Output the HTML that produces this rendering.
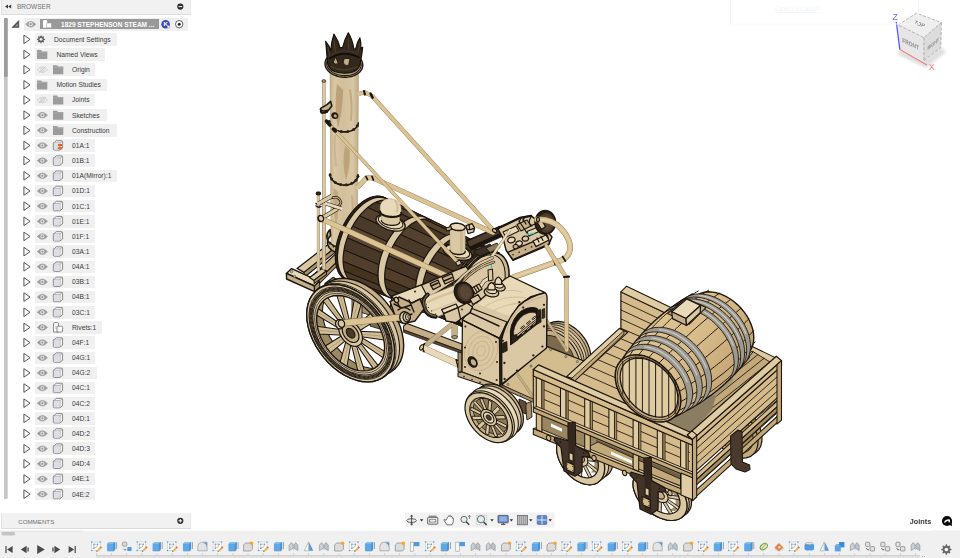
<!DOCTYPE html>
<html lang="en"><head><meta charset="utf-8"><title>1829 Stephenson Steam Locomotive</title>
<style>
html,body{margin:0;padding:0;background:#fff;}
body{width:960px;height:558px;overflow:hidden;position:relative;font-family:"Liberation Sans",sans-serif;font-size:6.6px;color:#3c3c3c;}
.abs{position:absolute;}
.hdr{position:absolute;left:1px;width:190px;background:#f1f1f1;border-left:1px solid #e0e0e0;border-right:1px solid #e8e8e8;border-bottom:1px solid #dcdcdc;box-sizing:border-box;}
.hdr span{position:absolute;left:16px;color:#707070;font-size:6.5px;letter-spacing:0px;white-space:nowrap;}
.row{position:absolute;height:12.5px;background:#f0f0f0;}
.lbl{position:absolute;white-space:nowrap;line-height:12.5px;height:12.5px;font-size:6.7px;color:#3a3a3a;}
svg{position:absolute;left:0;top:0;}
</style></head>
<body>
<svg width="960" height="558" viewBox="0 0 960 558" style="z-index:0;filter:blur(0.35px)">
<defs><radialGradient id="vcsh" cx="50%" cy="50%" r="50%"><stop offset="0" stop-color="#000" stop-opacity="0.16"/><stop offset="1" stop-color="#000" stop-opacity="0"/></radialGradient><filter id="b1"><feGaussianBlur stdDeviation="1.6"/></filter></defs>
<path d="M899.8,49.5 L923.9,60.8 L940.8,47.6 L946,52 L926,68 L897,54Z" fill="#000" opacity="0.13" filter="url(#b1)"/>
<path d="M898.2,25 L916.4,13.1 L941.4,22.5 L923.9,37.6Z" fill="#eeeeee"/>
<path d="M898.2,25 L923.9,37.6 L923.9,60.8 L899.8,49.5Z" fill="#e6e6e6"/>
<path d="M923.9,37.6 L941.4,22.5 L940.8,47.6 L923.9,60.8Z" fill="#dcdcdc"/>
<path d="M898.2,25 L916.4,13.1 L941.4,22.5 L923.9,37.6Z M923.9,37.6 V60.8 M941.4,22.5 L940.8,47.6 L923.9,60.8" fill="none" stroke="#8a8a8a" stroke-width="0.6" stroke-dasharray="3.2 1.6"/>
<path d="M896.3,21.9 L899.8,49.5" stroke="#5a5aee" stroke-width="1.3"/>
<path d="M899.8,49.5 L927,65" stroke="#ec8080" stroke-width="1.1"/>
<text x="892.4" y="20.4" font-size="8.6" fill="#6a6af0" font-family="Liberation Sans, sans-serif">Z</text>
<text x="928.8" y="70.4" font-size="8.6" fill="#f07878" font-family="Liberation Sans, sans-serif">X</text>
<text transform="matrix(0.93,0.37,-0.55,0.84,913.4,23.6)" font-size="5.4" fill="#8c8c8c" font-family="Liberation Sans, sans-serif" font-weight="bold">TOP</text>
<text transform="matrix(0.9,0.43,0,1,902.2,42.2)" font-size="6.3" fill="#8c8c8c" font-family="Liberation Sans, sans-serif" font-weight="bold" textLength="18.5" lengthAdjust="spacingAndGlyphs">FRONT</text>
<text transform="matrix(0.72,-0.6,0,1,927.6,50.6)" font-size="5.4" fill="#8c8c8c" font-family="Liberation Sans, sans-serif" font-weight="bold" textLength="16" lengthAdjust="spacingAndGlyphs">RIGHT</text>
<rect x="730.5" y="-1" width="188" height="25" fill="none" stroke="#f6f6ee" stroke-width="1"/>
<text x="775" y="11" font-size="7.4" fill="#f0f4fb" font-family="Liberation Sans, sans-serif" text-decoration="underline">Open location</text>
<defs>
<linearGradient id="gch" x1="0" x2="1" y1="0" y2="0"><stop offset="0" stop-color="#c4b08a"/><stop offset="0.15" stop-color="#d9c8a6"/><stop offset="0.45" stop-color="#d2bf9b"/><stop offset="0.8" stop-color="#d8c7a5"/><stop offset="1" stop-color="#bfab84"/></linearGradient>
<linearGradient id="gboil" x1="0" x2="0.35" y1="0" y2="1"><stop offset="0" stop-color="#3c2e21"/><stop offset="0.3" stop-color="#54422f"/><stop offset="0.65" stop-color="#4a3928"/><stop offset="1" stop-color="#2e231a"/></linearGradient>
<linearGradient id="gbar" x1="0" x2="1" y1="0" y2="0.6"><stop offset="0" stop-color="#e2c998"/><stop offset="0.55" stop-color="#d9be8b"/><stop offset="1" stop-color="#bfa170"/></linearGradient>
<linearGradient id="gsteel" x1="0" x2="1" y1="0" y2="1"><stop offset="0" stop-color="#8e8c86"/><stop offset="0.45" stop-color="#dcdbd6"/><stop offset="1" stop-color="#7c7a74"/></linearGradient>
<filter id="soft" x="-5%" y="-5%" width="110%" height="110%"><feGaussianBlur stdDeviation="0.35"/></filter>
</defs>
<polygon points="590.7,356.4 590.5,359.3 589.9,362.0 588.9,364.4 587.5,366.5 585.8,368.3 583.8,369.7 581.4,370.7 578.9,371.2 576.1,371.4 573.1,371.1 570.1,370.4 567.0,369.3 563.9,367.8 560.9,365.9 557.9,363.7 555.1,361.2 552.6,358.5 550.2,355.5 548.2,352.4 546.5,349.2 545.1,345.9 544.1,342.7 543.5,339.5 543.3,336.4 543.5,333.5 544.1,330.8 545.1,328.4 546.5,326.3 548.2,324.5 550.2,323.1 552.6,322.1 555.1,321.6 557.9,321.4 560.9,321.7 563.9,322.4 567.0,323.5 570.1,325.0 573.1,326.9 576.1,329.1 578.9,331.6 581.4,334.3 583.8,337.3 585.8,340.4 587.5,343.6 588.9,346.9 589.9,350.1 590.5,353.3" fill="#c4af89" stroke="#1d160f" stroke-width="1.2249999999999999" stroke-linejoin="round" />
<polygon points="588.5,358.1 588.3,361.0 587.7,363.7 586.7,366.1 585.3,368.2 583.6,370.0 581.6,371.4 579.2,372.4 576.6,373.0 573.9,373.1 570.9,372.8 567.9,372.1 564.8,371.0 561.7,369.5 558.7,367.7 555.7,365.5 552.9,363.0 550.4,360.2 548.0,357.2 546.0,354.1 544.3,350.9 542.9,347.6 541.9,344.4 541.3,341.2 541.1,338.1 541.3,335.2 541.9,332.5 542.9,330.1 544.3,328.0 546.0,326.2 548.0,324.9 550.4,323.9 552.9,323.3 555.7,323.1 558.7,323.4 561.7,324.1 564.8,325.2 567.9,326.7 570.9,328.6 573.9,330.8 576.6,333.3 579.2,336.0 581.6,339.0 583.6,342.1 585.3,345.3 586.7,348.6 587.7,351.9 588.3,355.0" fill="#c4af89" stroke="#1d160f" stroke-width="0.875" stroke-linejoin="round" />
<polygon points="586.3,359.8 586.1,362.7 585.5,365.4 584.5,367.8 583.1,370.0 581.4,371.7 579.4,373.1 577.0,374.1 574.5,374.7 571.7,374.8 568.7,374.5 565.7,373.8 562.6,372.7 559.5,371.2 556.5,369.4 553.5,367.2 550.8,364.7 548.2,361.9 545.8,359.0 543.8,355.8 542.1,352.6 540.7,349.4 539.7,346.1 539.1,342.9 538.9,339.8 539.1,336.9 539.7,334.3 540.7,331.8 542.1,329.7 543.8,328.0 545.8,326.6 548.2,325.6 550.8,325.0 553.5,324.9 556.5,325.1 559.5,325.8 562.6,326.9 565.7,328.4 568.7,330.3 571.7,332.5 574.5,335.0 577.0,337.8 579.4,340.7 581.4,343.8 583.1,347.1 584.5,350.3 585.5,353.6 586.1,356.8" fill="#dac8a4" stroke="#1d160f" stroke-width="0.875" stroke-linejoin="round" />
<polygon points="584.1,361.6 583.9,364.5 583.3,367.1 582.3,369.6 580.9,371.7 579.2,373.4 577.2,374.8 574.8,375.8 572.2,376.4 569.5,376.5 566.5,376.3 563.5,375.6 560.4,374.5 557.3,373.0 554.3,371.1 551.3,368.9 548.5,366.4 546.0,363.6 543.6,360.7 541.6,357.6 539.9,354.3 538.5,351.1 537.5,347.8 536.9,344.6 536.7,341.6 536.9,338.7 537.5,336.0 538.5,333.6 539.9,331.4 541.6,329.7 543.6,328.3 546.0,327.3 548.5,326.7 551.3,326.6 554.3,326.9 557.3,327.6 560.4,328.7 563.5,330.2 566.5,332.0 569.5,334.2 572.2,336.7 574.8,339.5 577.2,342.4 579.2,345.6 580.9,348.8 582.3,352.0 583.3,355.3 583.9,358.5" fill="#c4af89" stroke="#1d160f" stroke-width="0.875" stroke-linejoin="round" />
<polygon points="581.9,363.3 581.7,366.2 581.1,368.9 580.1,371.3 578.7,373.4 577.0,375.2 575.0,376.5 572.6,377.5 570.1,378.1 567.3,378.3 564.3,378.0 561.3,377.3 558.2,376.2 555.1,374.7 552.1,372.8 549.1,370.6 546.4,368.1 543.8,365.4 541.4,362.4 539.4,359.3 537.7,356.1 536.3,352.8 535.3,349.5 534.7,346.4 534.5,343.3 534.7,340.4 535.3,337.7 536.3,335.3 537.7,333.2 539.4,331.4 541.4,330.0 543.8,329.0 546.4,328.4 549.1,328.3 552.1,328.6 555.1,329.3 558.2,330.4 561.3,331.9 564.3,333.7 567.3,335.9 570.1,338.4 572.6,341.2 575.0,344.2 577.0,347.3 578.7,350.5 580.1,353.8 581.1,357.0 581.7,360.2" fill="#dac8a4" stroke="#1d160f" stroke-width="0.875" stroke-linejoin="round" />
<polygon points="579.7,365.0 579.5,367.9 578.9,370.6 577.9,373.0 576.5,375.1 574.8,376.9 572.8,378.3 570.4,379.3 567.9,379.8 565.1,380.0 562.1,379.7 559.1,379.0 556.0,377.9 552.9,376.4 549.9,374.5 546.9,372.3 544.1,369.8 541.6,367.1 539.2,364.1 537.2,361.0 535.5,357.8 534.1,354.5 533.1,351.3 532.5,348.1 532.3,345.0 532.5,342.1 533.1,339.4 534.1,337.0 535.5,334.9 537.2,333.1 539.2,331.7 541.6,330.7 544.1,330.2 546.9,330.0 549.9,330.3 552.9,331.0 556.0,332.1 559.1,333.6 562.1,335.5 565.1,337.7 567.9,340.2 570.4,342.9 572.8,345.9 574.8,349.0 576.5,352.2 577.9,355.5 578.9,358.7 579.5,361.9" fill="#c4af89" stroke="#1d160f" stroke-width="1.05" stroke-linejoin="round" />
<polygon points="574.5,362.8 574.3,365.1 573.9,367.2 573.1,369.0 572.0,370.7 570.7,372.1 569.1,373.1 567.3,373.9 565.2,374.4 563.1,374.5 560.8,374.3 558.4,373.7 556.0,372.9 553.6,371.7 551.2,370.2 548.9,368.5 546.8,366.6 544.7,364.4 542.9,362.1 541.3,359.7 540.0,357.2 538.9,354.6 538.1,352.1 537.7,349.6 537.5,347.2 537.7,344.9 538.1,342.8 538.9,341.0 540.0,339.3 541.3,337.9 542.9,336.9 544.7,336.1 546.8,335.6 548.9,335.5 551.2,335.7 553.6,336.3 556.0,337.1 558.4,338.3 560.8,339.8 563.1,341.5 565.2,343.4 567.3,345.6 569.1,347.9 570.7,350.3 572.0,352.8 573.1,355.4 573.9,357.9 574.3,360.4" fill="#7d6a4c" stroke="#1d160f" stroke-width="0.875" stroke-linejoin="round" />
<polygon points="297.0,268.4 332.0,241.6 338.6,245.0 304.0,272.4" fill="#dac8a4" stroke="#1d160f" stroke-width="1.2249999999999999" stroke-linejoin="round" />
<polygon points="304.0,272.4 338.6,245.0 338.6,249.6 304.6,277.0" fill="#a6906a" stroke="#1d160f" stroke-width="1.05" stroke-linejoin="round" />
<polygon points="311.6,276.6 339.0,250.6 345.0,254.0 318.6,280.0" fill="#c4af89" stroke="#1d160f" stroke-width="1.2249999999999999" stroke-linejoin="round" />
<polygon points="318.6,280.0 345.0,254.0 345.0,258.0 319.0,284.0" fill="#a6906a" stroke="#1d160f" stroke-width="1.05" stroke-linejoin="round" />
<polygon points="286.4,273.4 291.6,268.6 319.6,281.4 314.4,286.0" fill="#e8d9b9" stroke="#1d160f" stroke-width="1.4000000000000001" stroke-linejoin="round" />
<polygon points="286.4,273.4 314.4,286.0 314.6,291.6 286.6,279.0" fill="#c4af89" stroke="#1d160f" stroke-width="1.4000000000000001" stroke-linejoin="round" />
<polygon points="314.4,286.0 319.6,281.4 319.8,287.0 314.6,291.6" fill="#a6906a" stroke="#1d160f" stroke-width="1.05" stroke-linejoin="round" />
<circle cx="291.6" cy="271.6" r="1.3" fill="#b9b2a4" stroke="#2a2118" stroke-width="0.45"/>
<circle cx="294.6" cy="276.6" r="1.2" fill="#b9b2a4" stroke="#2a2118" stroke-width="0.45"/>
<polygon points="309.6,277.6 322.0,268.6 326.4,271.0 314.0,280.4" fill="#dac8a4" stroke="#1d160f" stroke-width="1.2249999999999999" stroke-linejoin="round" />
<polygon points="314.0,280.4 326.4,271.0 326.6,274.4 314.2,283.6" fill="#a6906a" stroke="#1d160f" stroke-width="1.05" stroke-linejoin="round" />
<polygon points="325.0,283.6 333.0,277.4 337.0,279.6 329.0,286.0" fill="#dac8a4" stroke="#1d160f" stroke-width="1.2249999999999999" stroke-linejoin="round" />
<polyline points="323.8,81.0 323.8,268.0" fill="none" stroke="#8f7a56" stroke-width="3.5" stroke-linejoin="round"/>
<polyline points="323.8,81.0 323.8,268.0" fill="none" stroke="#dac8a4" stroke-width="2.8" stroke-linecap="round" stroke-linejoin="round" stroke-linecap="butt"/>
<polygon points="325.7,81.0 325.7,81.2 325.6,81.3 325.6,81.5 325.4,81.6 325.3,81.7 325.1,81.8 325.0,82.0 324.8,82.0 324.5,82.1 324.3,82.2 324.0,82.2 323.8,82.2 323.6,82.2 323.3,82.2 323.1,82.1 322.9,82.0 322.6,82.0 322.5,81.8 322.3,81.7 322.2,81.6 322.0,81.5 322.0,81.3 321.9,81.2 321.9,81.0 321.9,80.8 322.0,80.7 322.0,80.5 322.2,80.4 322.3,80.3 322.5,80.2 322.6,80.0 322.9,80.0 323.1,79.9 323.3,79.8 323.6,79.8 323.8,79.8 324.0,79.8 324.3,79.8 324.5,79.9 324.8,80.0 325.0,80.0 325.1,80.2 325.3,80.3 325.4,80.4 325.6,80.5 325.6,80.7 325.7,80.8" fill="#c4af89" stroke="#1d160f" stroke-width="0.875" stroke-linejoin="round" />
<polygon points="330.0,70.0 358.6,70.0 357.4,246.0 331.0,246.0" fill="url(#gch)" stroke="#a8946c" stroke-width="0.5" stroke-linejoin="round" />
<path d="M337,84 Q333.6,108 338,128 Q342.6,112 343,90Z" fill="#a98a5c" stroke="none" stroke-width="0" stroke-linejoin="round" stroke-linecap="round" opacity="0.6"/>
<path d="M345,146 Q341.6,164 346,180 Q351,164 349.6,150Z" fill="#a98a5c" stroke="none" stroke-width="0" stroke-linejoin="round" stroke-linecap="round" opacity="0.55"/>
<path d="M333.6,188 Q332.6,210 336,228 Q339.6,210 338,192Z" fill="#a98a5c" stroke="none" stroke-width="0" stroke-linejoin="round" stroke-linecap="round" opacity="0.5"/>
<path d="M350,90 Q352.6,104 351,120" fill="none" stroke="#a98a5c" stroke-width="2.0" stroke-linejoin="round" stroke-linecap="round" opacity="0.45"/>
<path d="M352,196 Q353.6,212 352,230" fill="none" stroke="#a98a5c" stroke-width="2.0" stroke-linejoin="round" stroke-linecap="round" opacity="0.4"/>
<path d="M335,136 Q334,150 336,166" fill="none" stroke="#b39a70" stroke-width="2.0" stroke-linejoin="round" stroke-linecap="round" opacity="0.4"/>
<polyline points="358.3,123.0 358.2,124.0 357.8,124.9 357.4,125.8 356.9,126.7 356.2,127.5 355.4,128.3 354.5,129.0 353.5,129.7 352.5,130.2 351.3,130.7 350.1,131.1 348.8,131.5 347.5,131.7 346.2,131.9 344.8,131.9 343.4,131.9 342.0,131.8 340.7,131.5 339.4,131.2 338.1,130.8 336.8,130.4 335.6,129.8 334.5,129.2 333.5,128.5 332.6,127.7 331.8,126.9 331.0,126.0 330.4,125.1 329.9,124.2 329.6,123.2 329.3,122.2 329.2,121.3" fill="none" stroke="#1d160f" stroke-width="1.575" stroke-linecap="round" stroke-linejoin="round" />
<circle cx="357.3" cy="125.8" r="1.5" fill="#2a2118"/>
<circle cx="353.6" cy="129.4" r="1.5" fill="#2a2118"/>
<circle cx="347.8" cy="131.5" r="1.5" fill="#2a2118"/>
<circle cx="341.3" cy="131.4" r="1.5" fill="#2a2118"/>
<circle cx="335.2" cy="129.4" r="1.5" fill="#2a2118"/>
<circle cx="330.9" cy="125.7" r="1.5" fill="#2a2118"/>
<circle cx="329.2" cy="121.4" r="1.5" fill="#2a2118"/>
<polyline points="358.0,174.9 357.9,175.9 357.7,177.0 357.4,178.0 356.9,178.9 356.3,179.8 355.6,180.7 354.8,181.5 353.9,182.3 352.9,182.9 351.8,183.5 350.6,184.0 349.4,184.4 348.1,184.8 346.7,185.0 345.4,185.1 344.0,185.1 342.6,185.0 341.3,184.8 339.9,184.5 338.6,184.1 337.4,183.7 336.2,183.1 335.1,182.4 334.1,181.7 333.2,180.9 332.4,180.1 331.7,179.1 331.1,178.2 330.6,177.2 330.3,176.2 330.1,175.1 330.0,174.1" fill="none" stroke="#1d160f" stroke-width="1.75" stroke-linecap="round" stroke-linejoin="round" />
<circle cx="357.9" cy="176.2" r="1.5" fill="#2a2118"/>
<circle cx="355.9" cy="180.3" r="1.5" fill="#2a2118"/>
<circle cx="351.8" cy="183.3" r="1.5" fill="#2a2118"/>
<circle cx="346.4" cy="184.8" r="1.5" fill="#2a2118"/>
<circle cx="340.6" cy="184.5" r="1.5" fill="#2a2118"/>
<circle cx="335.4" cy="182.4" r="1.5" fill="#2a2118"/>
<circle cx="331.6" cy="178.9" r="1.5" fill="#2a2118"/>
<circle cx="330.1" cy="175.0" r="1.5" fill="#2a2118"/>
<polygon points="320.6,108.4 327.0,104.6 330.6,101.4 331.8,106.0 327.4,111.4 321.4,113.0" fill="#c4af89" stroke="#1d160f" stroke-width="1.575" stroke-linejoin="round" />
<path d="M320.4,109.6 q3,2.6 7,0.6 M320.6,111.6 q3,2.6 6.6,0.4" fill="none" stroke="#1d160f" stroke-width="1.575" stroke-linejoin="round" stroke-linecap="round" />
<polygon points="337.5,115.9 337.5,116.2 337.4,116.6 337.3,116.9 337.1,117.2 336.9,117.4 336.7,117.7 336.4,117.8 336.2,118.0 335.8,118.1 335.5,118.2 335.2,118.2 334.8,118.2 334.4,118.1 334.1,118.0 333.8,117.9 333.4,117.7 333.2,117.5 332.9,117.2 332.7,116.9 332.5,116.6 332.3,116.3 332.2,116.0 332.1,115.6 332.1,115.3 332.1,115.0 332.2,114.6 332.3,114.3 332.5,114.0 332.7,113.8 332.9,113.5 333.2,113.4 333.4,113.2 333.8,113.1 334.1,113.0 334.4,113.0 334.8,113.0 335.2,113.1 335.5,113.2 335.8,113.3 336.2,113.5 336.4,113.7 336.7,114.0 336.9,114.3 337.1,114.6 337.3,114.9 337.4,115.2 337.5,115.6" fill="#3a2e22" stroke="#1d160f" stroke-width="1.575" stroke-linejoin="round" />
<polygon points="336.9,116.2 336.9,116.4 336.8,116.6 336.8,116.8 336.7,116.9 336.6,117.1 336.5,117.2 336.3,117.3 336.1,117.4 336.0,117.5 335.8,117.5 335.6,117.5 335.4,117.5 335.2,117.5 335.0,117.4 334.8,117.3 334.6,117.2 334.5,117.1 334.3,116.9 334.2,116.8 334.1,116.6 334.0,116.4 334.0,116.2 333.9,116.0 333.9,115.8 333.9,115.6 334.0,115.4 334.0,115.2 334.1,115.1 334.2,114.9 334.3,114.8 334.5,114.7 334.6,114.6 334.8,114.5 335.0,114.5 335.2,114.5 335.4,114.5 335.6,114.5 335.8,114.6 336.0,114.7 336.1,114.8 336.3,114.9 336.5,115.1 336.6,115.2 336.7,115.4 336.8,115.6 336.8,115.8 336.9,116.0" fill="#c4af89" stroke="none" stroke-width="0" stroke-linejoin="round" />
<polygon points="362.8,65.1 362.6,66.8 362.2,68.4 361.4,69.9 360.3,71.4 358.9,72.7 357.3,73.9 355.4,75.0 353.3,75.8 351.1,76.5 348.8,76.9 346.4,77.2 343.9,77.2 341.4,77.0 339.0,76.6 336.7,76.0 334.4,75.1 332.4,74.1 330.5,73.0 328.9,71.6 327.5,70.2 326.4,68.7 325.6,67.0 325.2,65.4 325.0,63.7 325.2,62.0 325.6,60.4 326.4,58.9 327.5,57.4 328.9,56.1 330.5,54.9 332.4,53.8 334.4,53.0 336.7,52.3 339.0,51.9 341.4,51.6 343.9,51.6 346.4,51.8 348.8,52.2 351.1,52.8 353.3,53.7 355.4,54.7 357.3,55.8 358.9,57.2 360.3,58.6 361.4,60.1 362.2,61.8 362.6,63.4" fill="#cbb894" stroke="#1d160f" stroke-width="1.4000000000000001" stroke-linejoin="round" />
<polygon points="361.1,65.0 361.0,66.5 360.5,67.9 359.8,69.2 358.8,70.5 357.5,71.7 356.1,72.7 354.4,73.7 352.5,74.4 350.5,75.0 348.4,75.4 346.1,75.6 343.9,75.6 341.7,75.4 339.4,75.1 337.3,74.5 335.3,73.8 333.4,72.9 331.7,71.9 330.3,70.7 329.0,69.5 328.0,68.1 327.3,66.7 326.8,65.3 326.7,63.8 326.8,62.3 327.3,60.9 328.0,59.6 329.0,58.3 330.3,57.1 331.7,56.1 333.4,55.1 335.3,54.4 337.3,53.8 339.4,53.4 341.7,53.2 343.9,53.2 346.1,53.4 348.4,53.7 350.5,54.3 352.5,55.0 354.4,55.9 356.1,56.9 357.5,58.1 358.8,59.3 359.8,60.7 360.5,62.1 361.0,63.5" fill="#b9a57f" stroke="#1d160f" stroke-width="1.05" stroke-linejoin="round" />
<path d="M327.4,61.6 Q326.6,52 325.7,41.4 Q329.4,45.4 330.6,51 Q331.6,41 333.9,34 Q338.6,41 340.1,47.8 L342.6,47.4 Q344.6,39 348.3,32.8 Q352.6,40 353.9,48.8 L355.6,49 Q357,42 359.9,37.8 Q361.4,43 360.8,48.2 L362.7,47.2 Q362,55 360.4,62 Q360.6,68.6 353,72 Q344,74.6 335,71.8 Q327.8,68.8 327.4,61.6Z" fill="#33281d" stroke="#120d08" stroke-width="1.1" stroke-linejoin="round" stroke-linecap="round" />
<path d="M329.6,58.6 Q344,49.6 359,57.4" fill="none" stroke="#0f0a06" stroke-width="1.3" stroke-linejoin="round" stroke-linecap="round" />
<path d="M331,55 Q344,47 357.6,54" fill="none" stroke="#4c3c2c" stroke-width="1.2" stroke-linejoin="round" stroke-linecap="round" opacity="0.8"/>
<path d="M333,62.6 L335.6,57 L338.4,63.4 Q335.8,65.4 333,62.6Z" fill="#b8a37e" stroke="#120d08" stroke-width="0.8" stroke-linejoin="round" stroke-linecap="round" />
<path d="M343,62.6 L344.4,58.4 L350,58.6 L348.6,65.4 Q345.4,66.8 343,62.6Z" fill="#c2ad88" stroke="#120d08" stroke-width="0.8" stroke-linejoin="round" stroke-linecap="round" />
<path d="M331,66.6 Q344,73.4 357.6,66.6" fill="none" stroke="#57452f" stroke-width="1.3" stroke-linejoin="round" stroke-linecap="round" opacity="0.7"/>
<path d="M334,41 L335.6,52 M348.2,39 L348.6,49 M359.4,43 L358.2,52 M328,47 L329.6,56" fill="none" stroke="#57452f" stroke-width="1.1" stroke-linejoin="round" stroke-linecap="round" opacity="0.75"/>
<polygon points="342.9,248.0 341.0,247.8 339.3,247.5 337.5,247.1 335.9,246.5 334.3,245.9 332.9,245.2 331.5,244.3 330.3,243.4 329.3,242.4 328.4,241.3 327.8,240.2 327.3,239.0 326.9,237.8 326.8,236.6 326.9,235.4 327.1,234.2 327.6,233.0 328.2,231.9 329.0,230.8 330.0,229.7 330.6,235.7 329.6,236.8 328.8,237.9 328.2,239.0 327.7,240.2 327.5,241.4 327.4,242.6 327.5,243.8 327.9,245.0 328.4,246.2 329.0,247.3 329.9,248.4 330.9,249.4 332.1,250.3 333.5,251.2 334.9,251.9 336.5,252.5 338.1,253.1 339.9,253.5 341.6,253.8 343.5,254.0" fill="#c4af89" stroke="#1d160f" stroke-width="1.575" stroke-linejoin="round" />
<circle cx="338.8" cy="248.7" r="0.9" fill="#2a2118"/>
<circle cx="333.5" cy="246.7" r="0.9" fill="#2a2118"/>
<circle cx="329.6" cy="243.6" r="0.9" fill="#2a2118"/>
<circle cx="327.5" cy="239.8" r="0.9" fill="#2a2118"/>
<circle cx="327.5" cy="235.8" r="0.9" fill="#2a2118"/>
<polyline points="318.4,194.0 318.4,270.6" fill="none" stroke="#8f7a56" stroke-width="3.0999999999999996" stroke-linejoin="round"/>
<polyline points="318.4,194.0 318.4,270.6" fill="none" stroke="#dac8a4" stroke-width="2.4" stroke-linecap="round" stroke-linejoin="round" stroke-linecap="butt"/>
<polyline points="323.8,200.0 323.8,268.6" fill="none" stroke="#8f7a56" stroke-width="3.0999999999999996" stroke-linejoin="round"/>
<polyline points="323.8,200.0 323.8,268.6" fill="none" stroke="#dac8a4" stroke-width="2.4" stroke-linecap="round" stroke-linejoin="round" stroke-linecap="butt"/>
<polygon points="320.6,193.4 320.6,193.6 320.5,193.8 320.4,194.0 320.3,194.2 320.1,194.3 320.0,194.5 319.7,194.6 319.5,194.7 319.2,194.8 319.0,194.8 318.7,194.9 318.4,194.9 318.1,194.9 317.8,194.8 317.6,194.8 317.3,194.7 317.1,194.6 316.8,194.5 316.7,194.3 316.5,194.2 316.4,194.0 316.3,193.8 316.2,193.6 316.2,193.4 316.2,193.2 316.3,193.0 316.4,192.8 316.5,192.7 316.7,192.5 316.8,192.3 317.1,192.2 317.3,192.1 317.6,192.0 317.8,192.0 318.1,191.9 318.4,191.9 318.7,191.9 319.0,192.0 319.2,192.0 319.5,192.1 319.7,192.2 320.0,192.3 320.1,192.5 320.3,192.7 320.4,192.8 320.5,193.0 320.6,193.2" fill="#2d241a" stroke="#1d160f" stroke-width="1.05" stroke-linejoin="round" />
<path d="M316,203.4 q2.4,2.2 5,0.4 M316,206 q2.4,2.2 5,0.4" fill="none" stroke="#1d160f" stroke-width="1.4000000000000001" stroke-linejoin="round" stroke-linecap="round" />
<polyline points="318.6,203.6 332.0,196.0" fill="none" stroke="#1d160f" stroke-width="4.4" stroke-linejoin="round"/>
<polyline points="318.6,203.6 332.0,196.0" fill="none" stroke="#dac8a4" stroke-width="3.4" stroke-linecap="round" stroke-linejoin="round" stroke-linecap="butt"/>
<path d="M333,197.6 Q339.6,196 341,202.6 Q339,208 334,207.6" fill="none" stroke="#1d160f" stroke-width="2.6" stroke-linejoin="round" stroke-linecap="round" />
<path d="M333,197.6 Q339.6,196 341,202.6 Q339,208 334,207.6" fill="none" stroke="#c4af89" stroke-width="1.2" stroke-linejoin="round" stroke-linecap="round" />
<polyline points="321.0,218.6 337.6,208.6" fill="none" stroke="#1d160f" stroke-width="4.2" stroke-linejoin="round"/>
<polyline points="321.0,218.6 337.6,208.6" fill="none" stroke="#dac8a4" stroke-width="3.2" stroke-linecap="round" stroke-linejoin="round" stroke-linecap="butt"/>
<polyline points="326.0,203.6 341.6,208.6" fill="none" stroke="#1d160f" stroke-width="3.8" stroke-linejoin="round"/>
<polyline points="326.0,203.6 341.6,208.6" fill="none" stroke="#e8d9b9" stroke-width="2.8" stroke-linecap="round" stroke-linejoin="round" stroke-linecap="butt"/>
<polygon points="323.2,219.0 323.2,219.4 323.1,219.8 323.0,220.1 322.9,220.4 322.7,220.7 322.4,221.0 322.2,221.2 321.9,221.4 321.6,221.5 321.3,221.6 320.9,221.6 320.6,221.6 320.3,221.5 319.9,221.4 319.6,221.2 319.3,221.0 319.0,220.7 318.8,220.4 318.5,220.1 318.3,219.8 318.2,219.4 318.1,219.0 318.0,218.6 318.0,218.2 318.0,217.8 318.1,217.4 318.2,217.1 318.3,216.8 318.5,216.5 318.8,216.2 319.0,216.0 319.3,215.8 319.6,215.7 319.9,215.6 320.3,215.6 320.6,215.6 320.9,215.7 321.3,215.8 321.6,216.0 321.9,216.2 322.2,216.5 322.4,216.8 322.7,217.1 322.9,217.4 323.0,217.8 323.1,218.2 323.2,218.6" fill="#dac8a4" stroke="#1d160f" stroke-width="1.4000000000000001" stroke-linejoin="round" />
<polygon points="403.6,326.0 407.0,323.4 462.0,344.0 462.0,351.0 403.6,330.0" fill="#c4af89" stroke="#1d160f" stroke-width="1.05" stroke-linejoin="round" />
<polygon points="403.6,330.0 462.0,351.0 462.0,353.6 403.6,332.4" fill="#5a4a36" stroke="#1d160f" stroke-width="0.7000000000000001" stroke-linejoin="round" />
<polyline points="454.6,326.0 454.6,337.0" fill="none" stroke="#8f7a56" stroke-width="6.3" stroke-linejoin="round"/>
<polyline points="454.6,326.0 454.6,337.0" fill="none" stroke="#c4af89" stroke-width="5.6" stroke-linecap="round" stroke-linejoin="round" stroke-linecap="butt"/>
<polygon points="457.5,337.0 457.5,337.2 457.4,337.3 457.3,337.5 457.1,337.6 456.9,337.8 456.7,337.9 456.4,338.0 456.1,338.1 455.7,338.2 455.4,338.3 455.0,338.3 454.6,338.3 454.2,338.3 453.8,338.3 453.5,338.2 453.2,338.1 452.8,338.0 452.5,337.9 452.3,337.8 452.1,337.6 451.9,337.5 451.8,337.3 451.7,337.2 451.7,337.0 451.7,336.8 451.8,336.7 451.9,336.5 452.1,336.4 452.3,336.2 452.5,336.1 452.8,336.0 453.2,335.9 453.5,335.8 453.8,335.7 454.2,335.7 454.6,335.7 455.0,335.7 455.4,335.7 455.7,335.8 456.1,335.9 456.4,336.0 456.7,336.1 456.9,336.2 457.1,336.4 457.3,336.5 457.4,336.7 457.5,336.8" fill="#c4af89" stroke="#1d160f" stroke-width="0.875" stroke-linejoin="round" />
<polyline points="424.0,346.6 451.0,325.0" fill="none" stroke="#8f7a56" stroke-width="4.9" stroke-linejoin="round"/>
<polyline points="424.0,346.6 451.0,325.0" fill="none" stroke="#c4af89" stroke-width="4.2" stroke-linecap="round" stroke-linejoin="round" stroke-linecap="butt"/>
<polyline points="422.0,347.6 461.0,365.4" fill="none" stroke="#8f7a56" stroke-width="6.7" stroke-linejoin="round"/>
<polyline points="422.0,347.6 461.0,365.4" fill="none" stroke="#e8d9b9" stroke-width="6.0" stroke-linecap="round" stroke-linejoin="round" stroke-linecap="butt"/>
<path d="M424.6,343.6 q-3.6,3 -0.6,8" fill="none" stroke="#1d160f" stroke-width="1.575" stroke-linejoin="round" stroke-linecap="round" />
<polygon points="423.2,348.0 423.3,347.7 423.5,347.3 423.5,347.0 423.6,346.6 423.6,346.3 423.6,346.0 423.5,345.7 423.4,345.4 423.3,345.2 423.2,345.0 423.0,344.9 422.8,344.8 422.6,344.7 422.3,344.7 422.1,344.8 421.8,344.8 421.6,345.0 421.3,345.1 421.1,345.3 420.8,345.6 420.6,345.9 420.4,346.1 420.2,346.5 420.0,346.8 419.9,347.1 419.7,347.5 419.7,347.8 419.6,348.2 419.6,348.5 419.6,348.8 419.7,349.1 419.8,349.4 419.9,349.6 420.0,349.8 420.2,349.9 420.4,350.0 420.6,350.1 420.9,350.1 421.1,350.0 421.4,350.0 421.6,349.8 421.9,349.7 422.1,349.5 422.4,349.2 422.6,348.9 422.8,348.7 423.0,348.3" fill="#dac8a4" stroke="#1d160f" stroke-width="1.05" stroke-linejoin="round" />
<path d="M456.6,361 Q463,360 466,364 Q466,369 461,369" fill="none" stroke="#1d160f" stroke-width="1.4000000000000001" stroke-linejoin="round" stroke-linecap="round" />
<polygon points="456.0,359.6 463.0,362.0 467.0,365.6 463.0,369.6 458.0,367.4" fill="#e8d9b9" stroke="#1d160f" stroke-width="1.2249999999999999" stroke-linejoin="round" />
<polygon points="458.0,352.0 462.0,353.0 462.0,371.0 458.0,372.0" fill="#a6906a" stroke="#1d160f" stroke-width="0.875" stroke-linejoin="round" />
<polygon points="509.1,274.8 508.9,270.4 508.2,266.3 507.1,262.7 505.5,259.6 503.5,256.9 501.2,254.9 498.6,253.5 495.7,252.7 492.5,252.6 489.2,253.2 485.7,254.4 482.2,256.2 478.7,258.6 475.2,261.5 471.9,265.0 468.7,268.9 465.8,273.2 463.2,277.8 460.9,282.6 458.9,287.6 457.3,292.6 456.2,297.6 455.5,302.5 455.3,307.2 455.5,311.6 456.2,315.7 457.3,319.3 458.9,322.4 460.9,325.1 463.2,327.1 465.8,328.5 468.7,329.3 471.9,329.4 475.2,328.8 478.7,327.6 482.2,325.8 485.7,323.4 489.2,320.5 492.5,317.0 495.7,313.1 498.6,308.8 501.2,304.2 503.5,299.4 505.5,294.4 507.1,289.4 508.2,284.4 508.9,279.5" fill="#cdb993" stroke="#1d160f" stroke-width="1.575" stroke-linejoin="round" />
<polygon points="505.2,275.4 505.0,271.3 504.4,267.6 503.3,264.2 501.9,261.3 500.1,258.8 497.9,256.9 495.4,255.6 492.7,254.9 489.8,254.8 486.7,255.3 483.5,256.4 480.2,258.1 476.9,260.4 473.7,263.1 470.6,266.3 467.7,270.0 465.0,274.0 462.5,278.2 460.3,282.7 458.5,287.4 457.1,292.0 456.0,296.7 455.4,301.2 455.2,305.6 455.4,309.7 456.0,313.4 457.1,316.8 458.5,319.7 460.3,322.2 462.5,324.1 465.0,325.4 467.7,326.1 470.6,326.2 473.7,325.7 476.9,324.6 480.2,322.9 483.5,320.6 486.7,317.9 489.8,314.7 492.7,311.0 495.4,307.0 497.9,302.8 500.1,298.3 501.9,293.6 503.3,289.0 504.4,284.3 505.0,279.8" fill="#dac8a4" stroke="#1d160f" stroke-width="1.05" stroke-linejoin="round" />
<polygon points="384.5,197.6 381.9,196.7 379.2,196.3 376.3,196.4 373.4,197.0 370.3,198.0 367.2,199.5 364.1,201.4 360.9,203.7 357.9,206.4 354.9,209.4 352.1,212.8 349.3,216.4 346.8,220.4 344.5,224.5 342.4,228.7 340.6,233.1 339.0,237.6 337.8,242.1 336.8,246.5 336.2,250.8 335.8,255.1 335.8,259.1 336.2,262.9 336.8,266.5 337.8,269.8 339.1,272.7 340.7,275.2 342.5,277.4 344.6,279.1 346.9,280.4 465.8,327.8 463.7,326.6 461.8,325.1 460.2,323.1 458.8,320.8 457.6,318.2 456.7,315.2 456.1,312.0 455.8,308.6 455.8,305.0 456.1,301.2 456.7,297.2 457.6,293.2 458.7,289.2 460.1,285.2 461.7,281.3 463.6,277.4 465.7,273.7 468.0,270.2 470.4,266.9 473.0,263.9 475.7,261.1 478.4,258.7 481.2,256.6 484.0,254.9 486.8,253.6 489.6,252.7 492.3,252.2 494.9,252.1 497.3,252.5 499.6,253.2" fill="url(#gboil)" stroke="#1d160f" stroke-width="1.2249999999999999" stroke-linejoin="round" />
<polygon points="384.5,197.6 382.7,196.9 380.9,196.5 379.1,196.3 377.1,196.4 493.0,252.1 494.7,252.1 496.4,252.3 498.0,252.6 499.6,253.2" fill="#4d3c2b" stroke="#17100a" stroke-width="0.9" stroke-linejoin="round" />
<polygon points="377.1,196.4 375.1,196.6 373.1,197.1 371.0,197.7 368.9,198.6 485.6,254.1 487.5,253.4 489.3,252.7 491.2,252.3 493.0,252.1" fill="#58452f" stroke="#17100a" stroke-width="0.9" stroke-linejoin="round" />
<polygon points="368.9,198.6 366.8,199.7 364.6,201.0 362.5,202.5 360.4,204.1 477.9,259.1 479.8,257.6 481.7,256.3 483.6,255.1 485.6,254.1" fill="#463626" stroke="#17100a" stroke-width="0.9" stroke-linejoin="round" />
<polygon points="360.4,204.1 358.3,206.0 356.2,208.0 354.2,210.1 352.3,212.5 470.6,266.6 472.4,264.5 474.2,262.6 476.0,260.8 477.9,259.1" fill="#54412e" stroke="#17100a" stroke-width="0.9" stroke-linejoin="round" />
<polygon points="352.3,212.5 350.4,214.9 348.6,217.5 346.9,220.2 345.3,223.0 464.4,276.1 465.8,273.6 467.3,271.1 469.0,268.8 470.6,266.6" fill="#4a3a29" stroke="#17100a" stroke-width="0.9" stroke-linejoin="round" />
<polygon points="345.3,223.0 343.8,225.8 342.4,228.7 341.1,231.7 340.0,234.7 459.6,286.7 460.6,284.0 461.7,281.3 463.0,278.6 464.4,276.1" fill="#5a4732" stroke="#17100a" stroke-width="0.9" stroke-linejoin="round" />
<polygon points="340.0,234.7 339.0,237.8 338.1,240.8 337.3,243.9 336.7,246.9 456.6,297.6 457.2,294.9 457.8,292.2 458.6,289.4 459.6,286.7" fill="#483827" stroke="#17100a" stroke-width="0.9" stroke-linejoin="round" />
<polygon points="336.7,246.9 336.3,249.9 336.0,252.8 335.8,255.6 335.8,258.4 455.8,307.9 455.8,305.5 455.9,302.9 456.2,300.3 456.6,297.6" fill="#513f2c" stroke="#17100a" stroke-width="0.9" stroke-linejoin="round" />
<polygon points="335.8,258.4 336.0,261.0 336.3,263.6 336.7,266.0 337.3,268.3 457.2,316.9 456.6,314.8 456.2,312.6 455.9,310.3 455.8,307.9" fill="#43331f" stroke="#17100a" stroke-width="0.9" stroke-linejoin="round" />
<polygon points="337.3,268.3 338.1,270.5 339.0,272.4 340.0,274.2 341.1,275.9 460.6,323.7 459.6,322.2 458.6,320.6 457.8,318.8 457.2,316.9" fill="#4c3b2a" stroke="#17100a" stroke-width="0.9" stroke-linejoin="round" />
<polygon points="341.1,275.9 342.4,277.3 343.8,278.6 345.3,279.6 346.9,280.4 465.8,327.8 464.4,327.0 463.0,326.1 461.8,325.0 460.6,323.7" fill="#3c2e20" stroke="#17100a" stroke-width="0.9" stroke-linejoin="round" />
<polygon points="425.0,217.2 422.5,216.3 419.9,216.0 417.1,216.1 414.3,216.6 411.3,217.6 408.3,219.0 405.3,220.8 402.3,223.0 399.3,225.6 396.5,228.6 393.7,231.8 391.1,235.4 388.7,239.1 386.4,243.1 384.4,247.2 382.6,251.5 381.1,255.8 379.9,260.1 379.0,264.4 378.4,268.5 378.1,272.6 378.1,276.5 378.4,280.2 379.0,283.7 380.0,286.8 381.2,289.6 382.7,292.1 384.5,294.2 386.5,295.8 388.8,297.1 395.3,299.7 393.1,298.5 391.1,296.8 389.3,294.7 387.8,292.3 386.6,289.5 385.6,286.3 385.0,282.9 384.7,279.2 384.7,275.4 385.0,271.3 385.6,267.1 386.5,262.9 387.7,258.6 389.2,254.3 391.0,250.1 393.0,246.0 395.2,242.1 397.6,238.3 400.2,234.8 403.0,231.6 405.8,228.6 408.8,226.1 411.7,223.8 414.7,222.0 417.7,220.6 420.7,219.7 423.5,219.1 426.3,219.0 428.9,219.4 431.3,220.2" fill="#dac8a4" stroke="#1d160f" stroke-width="1.2249999999999999" stroke-linejoin="round" />
<polygon points="461.0,234.6 458.6,233.8 456.1,233.4 453.4,233.5 450.7,234.0 447.8,235.0 444.9,236.3 442.0,238.1 439.1,240.3 436.2,242.8 433.4,245.6 430.8,248.8 428.2,252.2 425.9,255.8 423.7,259.7 421.8,263.7 420.1,267.8 418.6,271.9 417.4,276.1 416.5,280.2 415.9,284.3 415.6,288.2 415.6,292.0 415.9,295.6 416.6,298.9 417.5,302.0 418.7,304.7 420.1,307.1 421.9,309.1 423.8,310.7 426.0,311.9 432.5,314.5 430.4,313.3 428.4,311.7 426.7,309.7 425.3,307.3 424.1,304.6 423.2,301.6 422.5,298.3 422.2,294.7 422.2,291.0 422.5,287.1 423.1,283.0 424.0,278.9 425.2,274.8 426.6,270.6 428.3,266.6 430.3,262.6 432.4,258.8 434.8,255.2 437.3,251.8 439.9,248.6 442.7,245.8 445.5,243.3 448.4,241.1 451.3,239.4 454.2,238.0 457.0,237.1 459.8,236.6 462.5,236.5 465.0,236.8 467.3,237.6" fill="#dac8a4" stroke="#1d160f" stroke-width="1.2249999999999999" stroke-linejoin="round" />
<polygon points="493.2,250.2 490.9,249.4 488.5,249.0 485.9,249.1 483.2,249.6 480.4,250.5 477.6,251.9 474.8,253.6 472.0,255.7 469.2,258.1 466.5,260.9 463.9,263.9 461.5,267.2 459.2,270.8 457.1,274.5 455.2,278.4 453.5,282.4 452.1,286.4 451.0,290.4 450.1,294.4 449.5,298.4 449.2,302.2 449.2,305.9 449.5,309.3 450.1,312.6 451.0,315.5 452.2,318.2 453.6,320.5 455.3,322.4 457.2,324.0 459.3,325.2 460.7,325.8 458.6,324.6 456.7,323.0 455.0,321.1 453.6,318.7 452.5,316.1 451.6,313.1 451.0,309.9 450.7,306.5 450.7,302.8 451.0,299.0 451.5,295.1 452.4,291.0 453.5,287.0 455.0,283.0 456.6,279.0 458.5,275.1 460.6,271.4 462.9,267.9 465.3,264.6 467.9,261.5 470.6,258.8 473.4,256.3 476.2,254.2 479.0,252.5 481.8,251.2 484.6,250.3 487.3,249.8 489.9,249.7 492.3,250.1 494.6,250.8" fill="#dac8a4" stroke="#1d160f" stroke-width="1.2249999999999999" stroke-linejoin="round" />
<polygon points="496.7,251.8 494.4,251.1 492.0,250.7 489.4,250.8 486.7,251.3 483.9,252.2 481.1,253.5 478.3,255.2 475.5,257.3 472.7,259.7 470.0,262.5 467.5,265.6 465.0,268.9 462.7,272.4 460.6,276.1 458.8,280.0 457.1,283.9 455.7,287.9 454.6,292.0 453.7,296.0 453.1,299.9 452.8,303.7 452.8,307.4 453.1,310.8 453.7,314.0 454.6,317.0 455.8,319.6 457.2,321.9 458.9,323.9 460.7,325.4 462.9,326.6 464.5,327.3 462.4,326.1 460.5,324.5 458.9,322.6 457.4,320.3 456.3,317.6 455.4,314.7 454.8,311.5 454.5,308.1 454.5,304.4 454.8,300.6 455.4,296.7 456.2,292.7 457.4,288.7 458.8,284.6 460.4,280.7 462.3,276.8 464.4,273.1 466.7,269.6 469.1,266.3 471.7,263.3 474.4,260.5 477.1,258.1 479.9,256.0 482.7,254.3 485.6,253.0 488.3,252.1 491.0,251.6 493.6,251.5 496.0,251.8 498.3,252.6" fill="#dac8a4" stroke="#1d160f" stroke-width="1.2249999999999999" stroke-linejoin="round" />
<polygon points="385.0,197.9 382.5,196.8 379.8,196.2 376.9,196.0 373.9,196.4 370.7,197.3 367.5,198.7 364.3,200.5 361.1,202.8 357.9,205.5 354.8,208.6 351.8,212.0 349.0,215.8 346.4,219.8 344.0,224.0 341.8,228.4 339.9,233.0 338.3,237.6 337.0,242.2 336.1,246.8 335.5,251.3 335.2,255.6 335.3,259.7 335.7,263.6 336.5,267.2 337.6,270.5 339.0,273.4 340.8,275.8 342.8,277.9 345.1,279.5 347.6,280.6 350.6,282.0 348.1,280.9 345.8,279.3 343.8,277.2 342.0,274.8 340.6,271.9 339.5,268.6 338.7,265.0 338.3,261.1 338.2,257.0 338.5,252.7 339.1,248.2 340.0,243.6 341.3,239.0 342.9,234.4 344.8,229.8 347.0,225.4 349.4,221.2 352.0,217.2 354.8,213.4 357.8,210.0 360.9,206.9 364.1,204.2 367.3,201.9 370.5,200.1 373.7,198.7 376.9,197.8 379.9,197.4 382.8,197.6 385.5,198.2 388.0,199.3" fill="#2a2017" stroke="#1d160f" stroke-width="1.05" stroke-linejoin="round" />
<polygon points="385.7,198.6 383.2,197.7 380.5,197.4 377.6,197.5 374.7,198.0 371.6,199.0 368.6,200.5 365.5,202.3 362.4,204.6 359.4,207.3 356.4,210.3 353.6,213.6 350.9,217.3 348.4,221.1 346.1,225.2 344.0,229.5 342.2,233.8 340.7,238.2 339.4,242.6 338.5,247.0 337.9,251.3 337.5,255.5 337.5,259.5 337.9,263.3 338.5,266.8 339.5,270.0 340.8,272.9 342.3,275.5 344.1,277.6 346.2,279.3 348.5,280.6 354.1,283.2 351.8,281.9 349.7,280.2 347.9,278.1 346.4,275.5 345.1,272.6 344.1,269.4 343.5,265.9 343.1,262.1 343.1,258.1 343.5,253.9 344.1,249.6 345.0,245.2 346.3,240.8 347.8,236.4 349.6,232.1 351.7,227.8 354.0,223.7 356.5,219.9 359.2,216.2 362.0,212.9 365.0,209.9 368.0,207.2 371.1,204.9 374.2,203.1 377.2,201.6 380.3,200.6 383.2,200.1 386.1,200.0 388.8,200.3 391.3,201.2" fill="#dac8a4" stroke="#1d160f" stroke-width="1.2249999999999999" stroke-linejoin="round" />
<polygon points="466.4,241.0 500.0,226.4 503.4,232.4 469.6,247.4" fill="#4e3e2e" stroke="#1d160f" stroke-width="1.4000000000000001" stroke-linejoin="round" />
<polygon points="469.6,247.4 503.4,232.4 504.6,235.6 471.0,250.4" fill="#1c150e" stroke="#1d160f" stroke-width="0.7000000000000001" stroke-linejoin="round" />
<polygon points="473.0,251.6 490.0,244.0 494.0,250.0 480.0,256.0" fill="#3a3027" stroke="#1d160f" stroke-width="0.875" stroke-linejoin="round" />
<polygon points="486.0,248.0 497.0,243.0 500.0,247.6 490.0,252.6" fill="#8a7a5c" stroke="#1d160f" stroke-width="0.875" stroke-linejoin="round" />
<polygon points="497.6,228.4 520.2,217.6 531.0,215.6 541.0,224.0 552.0,237.0 548.6,245.0 513.0,260.4 506.0,250.0 503.0,238.0" fill="#dac8a4" stroke="#1d160f" stroke-width="1.4000000000000001" stroke-linejoin="round" />
<polyline points="497.6,228.4 520.2,217.8 531.0,215.8" fill="none" stroke="#1d160f" stroke-width="2.275" stroke-linecap="round" stroke-linejoin="round" />
<polygon points="507.6,252.4 547.6,235.6 549.6,243.6 513.0,259.6" fill="#c4af89" stroke="#1d160f" stroke-width="1.2249999999999999" stroke-linejoin="round" />
<circle cx="513.0" cy="254.8" r="0.8" fill="#2a2118"/>
<circle cx="519.2" cy="252.2" r="0.8" fill="#2a2118"/>
<circle cx="525.4" cy="249.6" r="0.8" fill="#2a2118"/>
<circle cx="531.6" cy="246.9" r="0.8" fill="#2a2118"/>
<circle cx="537.8" cy="244.3" r="0.8" fill="#2a2118"/>
<circle cx="544.0" cy="241.7" r="0.8" fill="#2a2118"/>
<polygon points="503.0,232.0 516.0,226.0 519.0,231.0 506.0,237.4" fill="#e8d9b9" stroke="#1d160f" stroke-width="1.05" stroke-linejoin="round" />
<polygon points="517.0,224.6 527.0,220.0 531.0,226.0 521.0,231.0" fill="#c4af89" stroke="#1d160f" stroke-width="1.05" stroke-linejoin="round" />
<path d="M519,221 l8,12 M523,219.4 l3,4.6 M530,226 l10,-4 M533,231 l10,-4.6 M531,217 q-4,6 1,9 M538,219 q-3,5 1,8 M521,218 l-2,4 M525,216.6 l-2,4" fill="none" stroke="#1d160f" stroke-width="1.2249999999999999" stroke-linejoin="round" stroke-linecap="round" />
<polygon points="515.0,238.8 515.1,239.1 515.1,239.5 515.1,239.9 515.0,240.3 514.9,240.6 514.7,241.0 514.4,241.3 514.1,241.7 513.7,241.9 513.3,242.2 512.9,242.4 512.4,242.6 511.9,242.7 511.4,242.8 510.9,242.9 510.5,242.9 510.0,242.8 509.6,242.7 509.2,242.5 508.8,242.3 508.5,242.1 508.2,241.8 508.0,241.5 507.8,241.2 507.7,240.9 507.7,240.5 507.7,240.1 507.8,239.7 507.9,239.4 508.1,239.0 508.4,238.7 508.7,238.3 509.1,238.1 509.5,237.8 509.9,237.6 510.4,237.4 510.9,237.3 511.4,237.2 511.9,237.1 512.3,237.1 512.8,237.2 513.2,237.3 513.6,237.5 514.0,237.7 514.3,237.9 514.6,238.2 514.8,238.5" fill="#e8d9b9" stroke="#1d160f" stroke-width="1.2249999999999999" stroke-linejoin="round" />
<polygon points="522.2,242.4 522.3,242.7 522.3,243.1 522.3,243.4 522.3,243.8 522.1,244.1 522.0,244.4 521.7,244.8 521.5,245.1 521.1,245.4 520.8,245.6 520.4,245.8 520.0,246.0 519.6,246.1 519.1,246.2 518.7,246.3 518.3,246.3 517.8,246.2 517.4,246.1 517.1,246.0 516.7,245.8 516.4,245.6 516.2,245.4 516.0,245.1 515.8,244.8 515.7,244.5 515.7,244.1 515.7,243.8 515.7,243.4 515.9,243.1 516.0,242.8 516.3,242.4 516.5,242.1 516.9,241.8 517.2,241.6 517.6,241.4 518.0,241.2 518.4,241.1 518.9,241.0 519.3,240.9 519.7,240.9 520.2,241.0 520.6,241.1 520.9,241.2 521.3,241.4 521.6,241.6 521.8,241.8 522.0,242.1" fill="#e8d9b9" stroke="#1d160f" stroke-width="1.2249999999999999" stroke-linejoin="round" />
<polygon points="528.4,237.6 528.5,237.9 528.6,238.3 528.6,238.6 528.5,238.9 528.4,239.3 528.2,239.6 528.0,239.9 527.8,240.2 527.5,240.4 527.1,240.7 526.8,240.8 526.4,241.0 526.0,241.1 525.6,241.2 525.2,241.2 524.8,241.2 524.4,241.1 524.0,241.0 523.6,240.9 523.3,240.7 523.0,240.4 522.8,240.2 522.6,239.9 522.4,239.6 522.3,239.3 522.2,238.9 522.2,238.6 522.3,238.3 522.4,237.9 522.6,237.6 522.8,237.3 523.0,237.0 523.3,236.8 523.7,236.5 524.0,236.4 524.4,236.2 524.8,236.1 525.2,236.0 525.6,236.0 526.0,236.0 526.4,236.1 526.8,236.2 527.2,236.3 527.5,236.5 527.8,236.8 528.0,237.0 528.2,237.3" fill="#dac8a4" stroke="#1d160f" stroke-width="1.2249999999999999" stroke-linejoin="round" />
<polygon points="518.0,245.8 518.1,246.1 518.1,246.3 518.1,246.6 518.1,246.9 518.0,247.2 517.9,247.4 517.7,247.7 517.5,247.9 517.3,248.1 517.0,248.3 516.7,248.5 516.4,248.6 516.1,248.7 515.8,248.7 515.4,248.8 515.1,248.7 514.8,248.7 514.5,248.6 514.2,248.5 513.9,248.3 513.7,248.1 513.5,247.9 513.3,247.7 513.2,247.4 513.1,247.1 513.1,246.9 513.1,246.6 513.1,246.3 513.2,246.0 513.3,245.8 513.5,245.5 513.7,245.3 513.9,245.1 514.2,244.9 514.5,244.7 514.8,244.6 515.1,244.5 515.4,244.5 515.8,244.4 516.1,244.5 516.4,244.5 516.7,244.6 517.0,244.7 517.3,244.9 517.5,245.1 517.7,245.3 517.9,245.5" fill="#c4af89" stroke="#1d160f" stroke-width="1.05" stroke-linejoin="round" />
<polygon points="527.0,231.6 537.0,227.6 539.0,231.6 529.0,236.0" fill="#e8d9b9" stroke="#1d160f" stroke-width="1.05" stroke-linejoin="round" />
<path d="M527,234.6 l7,-1.6" fill="none" stroke="#5ad0c8" stroke-width="1.3" stroke-linejoin="round" stroke-linecap="round" />
<polygon points="533.0,241.0 546.0,235.0 549.0,240.0 536.0,246.6" fill="#e8d9b9" stroke="#1d160f" stroke-width="1.2249999999999999" stroke-linejoin="round" />
<path d="M535,222 l4,6 M543,230 l3,5 M537,238 l2,4 M541,236.4 l2,4" fill="none" stroke="#1d160f" stroke-width="1.2249999999999999" stroke-linejoin="round" stroke-linecap="round" />
<polygon points="555.5,222.4 555.4,223.9 555.2,225.5 554.7,226.9 554.1,228.3 553.4,229.6 552.5,230.7 551.5,231.8 550.4,232.6 549.2,233.3 547.9,233.8 546.6,234.1 545.3,234.2 544.0,234.1 542.7,233.8 541.4,233.3 540.2,232.6 539.1,231.8 538.1,230.7 537.2,229.6 536.5,228.3 535.9,226.9 535.4,225.5 535.2,223.9 535.1,222.4 535.2,220.9 535.4,219.3 535.9,217.9 536.5,216.5 537.2,215.2 538.1,214.1 539.1,213.0 540.2,212.2 541.4,211.5 542.7,211.0 544.0,210.7 545.3,210.6 546.6,210.7 547.9,211.0 549.2,211.5 550.4,212.2 551.5,213.0 552.5,214.1 553.4,215.2 554.1,216.5 554.7,217.9 555.2,219.3 555.4,220.9" fill="#2c2118" stroke="#1d160f" stroke-width="1.575" stroke-linejoin="round" />
<polygon points="554.7,222.9 554.6,224.2 554.4,225.5 554.1,226.7 553.6,227.9 553.0,229.0 552.2,230.0 551.4,230.8 550.5,231.6 549.5,232.1 548.5,232.6 547.4,232.8 546.3,232.9 545.2,232.8 544.1,232.6 543.1,232.1 542.1,231.6 541.2,230.8 540.4,230.0 539.6,229.0 539.0,227.9 538.5,226.7 538.2,225.5 538.0,224.2 537.9,222.9 538.0,221.6 538.2,220.3 538.5,219.1 539.0,217.9 539.6,216.8 540.4,215.8 541.2,215.0 542.1,214.2 543.1,213.7 544.1,213.2 545.2,213.0 546.3,212.9 547.4,213.0 548.5,213.2 549.5,213.7 550.5,214.2 551.4,215.0 552.2,215.8 553.0,216.8 553.6,217.9 554.1,219.1 554.4,220.3 554.6,221.6" fill="#4e3c2b" stroke="#1f1710" stroke-width="0.5" stroke-linejoin="round" />
<polygon points="552.4,223.2 552.4,224.1 552.2,225.0 552.0,225.9 551.6,226.7 551.2,227.5 550.8,228.1 550.2,228.8 549.6,229.3 548.9,229.7 548.2,230.0 547.5,230.1 546.8,230.2 546.1,230.1 545.4,230.0 544.7,229.7 544.0,229.3 543.4,228.8 542.8,228.1 542.4,227.5 542.0,226.7 541.6,225.9 541.4,225.0 541.2,224.1 541.2,223.2 541.2,222.3 541.4,221.4 541.6,220.5 542.0,219.7 542.4,218.9 542.8,218.3 543.4,217.6 544.0,217.1 544.7,216.7 545.4,216.4 546.1,216.3 546.8,216.2 547.5,216.3 548.2,216.4 548.9,216.7 549.6,217.1 550.2,217.6 550.8,218.3 551.2,218.9 551.6,219.7 552.0,220.5 552.2,221.4 552.4,222.3" fill="#5b4836" stroke="none" stroke-width="0" stroke-linejoin="round" />
<polygon points="537.0,222.0 541.0,219.0 545.6,226.6 541.6,229.6" fill="#dac8a4" stroke="#1d160f" stroke-width="1.2249999999999999" stroke-linejoin="round" />
<path d="M537,219.4 Q552,219 560.6,228 Q571.6,240 570,250 Q568,259.6 556,262 L512.6,277.4" fill="none" stroke="#8f7a56" stroke-width="5.8" stroke-linejoin="round" stroke-linecap="round" />
<path d="M537,219.4 Q552,219 560.6,228 Q571.6,240 570,250 Q568,259.6 556,262 L512.6,277.4" fill="none" stroke="#dcc394" stroke-width="5.0" stroke-linejoin="round" stroke-linecap="round" />
<path d="M537,219.4 Q552,219 560.6,228 Q571.6,240 570,250 Q568,259.6 556,262 L512.6,277.4" fill="none" stroke="#e8d9b9" stroke-width="1.8" stroke-linejoin="round" stroke-linecap="round" opacity="0.6"/>
<polyline points="553.6,259.4 555.4,264.6" fill="none" stroke="#1d160f" stroke-width="1.75" stroke-linecap="round" stroke-linejoin="round" />
<polyline points="562.6,256.6 565.4,261.0" fill="none" stroke="#1d160f" stroke-width="1.75" stroke-linecap="round" stroke-linejoin="round" />
<polygon points="539.4,219.6 539.4,219.9 539.4,220.2 539.3,220.5 539.2,220.8 539.1,221.1 539.0,221.3 538.9,221.5 538.7,221.7 538.5,221.8 538.4,221.9 538.2,222.0 538.0,222.0 537.8,222.0 537.6,221.9 537.5,221.8 537.3,221.7 537.1,221.5 537.0,221.3 536.9,221.1 536.8,220.8 536.7,220.5 536.6,220.2 536.6,219.9 536.6,219.6 536.6,219.3 536.6,219.0 536.7,218.7 536.8,218.4 536.9,218.1 537.0,217.9 537.1,217.7 537.3,217.5 537.5,217.4 537.6,217.3 537.8,217.2 538.0,217.2 538.2,217.2 538.4,217.3 538.5,217.4 538.7,217.5 538.9,217.7 539.0,217.9 539.1,218.1 539.2,218.4 539.3,218.7 539.4,219.0 539.4,219.3" fill="#dac8a4" stroke="#1d160f" stroke-width="1.2249999999999999" stroke-linejoin="round" />
<polyline points="546.4,246.0 562.0,271.0 566.4,277.6 566.6,350.0" fill="none" stroke="#8f7a56" stroke-width="4.3" stroke-linejoin="round"/>
<polyline points="546.4,246.0 562.0,271.0 566.4,277.6 566.6,350.0" fill="none" stroke="#dcc394" stroke-width="3.6" stroke-linecap="round" stroke-linejoin="round" stroke-linecap="butt"/>
<polyline points="564.0,277.0 569.0,276.6" fill="none" stroke="#1d160f" stroke-width="2.1" stroke-linecap="round" stroke-linejoin="round" />
<polyline points="510.0,230.0 489.6,260.0" fill="none" stroke="#8f7a56" stroke-width="2.9000000000000004" stroke-linejoin="round"/>
<polyline points="510.0,230.0 489.6,260.0" fill="none" stroke="#e8d9b9" stroke-width="2.2" stroke-linecap="round" stroke-linejoin="round" stroke-linecap="butt"/>
<polygon points="501.8,385.0 546.6,346.4 584.0,361.0 573.0,381.0 536.4,402.0" fill="#d3bc8e" stroke="#1d160f" stroke-width="1.2249999999999999" stroke-linejoin="round" />
<polygon points="501.8,385.0 536.4,400.4 536.4,403.6 501.8,388.4" fill="#a6906a" stroke="#1d160f" stroke-width="0.875" stroke-linejoin="round" />
<circle cx="508.0" cy="384.4" r="1.1" fill="#b9b2a4" stroke="#2a2118" stroke-width="0.45"/>
<circle cx="521.6" cy="395.0" r="1.1" fill="#b9b2a4" stroke="#2a2118" stroke-width="0.45"/>
<circle cx="531.0" cy="366.0" r="1.1" fill="#b9b2a4" stroke="#2a2118" stroke-width="0.45"/>
<circle cx="550.6" cy="349.6" r="1.1" fill="#b9b2a4" stroke="#2a2118" stroke-width="0.45"/>
<circle cx="565.8" cy="356.6" r="1.1" fill="#b9b2a4" stroke="#2a2118" stroke-width="0.45"/>
<circle cx="577.4" cy="361.6" r="1.1" fill="#b9b2a4" stroke="#2a2118" stroke-width="0.45"/>
<polyline points="545.0,318.0 566.0,349.0" fill="none" stroke="#8f7a56" stroke-width="2.9000000000000004" stroke-linejoin="round"/>
<polyline points="545.0,318.0 566.0,349.0" fill="none" stroke="#c4af89" stroke-width="2.2" stroke-linecap="round" stroke-linejoin="round" stroke-linecap="butt"/>
<polyline points="505.0,356.0 533.0,397.0" fill="none" stroke="#8f7a56" stroke-width="2.7" stroke-linejoin="round"/>
<polyline points="505.0,356.0 533.0,397.0" fill="none" stroke="#c4af89" stroke-width="2.0" stroke-linecap="round" stroke-linejoin="round" stroke-linecap="butt"/>
<polygon points="470.6,308.0 505.0,279.0 510.0,276.0 545.0,292.6 531.0,296.6 519.0,305.0 507.0,322.0" fill="#e8d9b9" stroke="#1d160f" stroke-width="1.2249999999999999" stroke-linejoin="round" />
<path d="M476,305 Q496,286 522,292 M482,309 Q500,294 526,298 M490,313 Q505,302 530,303" fill="none" stroke="#cdb68c" stroke-width="1.1" opacity="0.7"/>
<polygon points="470.6,308.0 476.0,303.6 512.0,317.0 507.0,322.0" fill="#dac8a4" stroke="none" stroke-width="0" stroke-linejoin="round" />
<polygon points="462.4,320.0 470.6,308.0 507.0,322.0 499.4,338.4" fill="#dac8a4" stroke="#1d160f" stroke-width="1.2249999999999999" stroke-linejoin="round" />
<polygon points="462.4,320.0 499.4,338.4 500.0,386.0 462.0,372.0" fill="#dac8a4" stroke="#1d160f" stroke-width="1.2249999999999999" stroke-linejoin="round" />
<ellipse cx="481" cy="351" rx="4" ry="5" fill="none" stroke="#c4ab7f" stroke-width="1.1" opacity="0.65" transform="rotate(20 481 351)"/>
<ellipse cx="481" cy="351" rx="8" ry="10" fill="none" stroke="#c4ab7f" stroke-width="1.1" opacity="0.65" transform="rotate(20 481 351)"/>
<ellipse cx="481" cy="351" rx="12" ry="15" fill="none" stroke="#c4ab7f" stroke-width="1.1" opacity="0.65" transform="rotate(20 481 351)"/>
<ellipse cx="481" cy="351" rx="16" ry="20" fill="none" stroke="#c4ab7f" stroke-width="1.1" opacity="0.65" transform="rotate(20 481 351)"/>
<polyline points="462.4,320.0 499.4,338.4" fill="none" stroke="#1d160f" stroke-width="1.2249999999999999" stroke-linecap="round" stroke-linejoin="round" />
<circle cx="465.4" cy="326.6" r="1.0" fill="#2a2118"/>
<circle cx="496.0" cy="342.0" r="1.0" fill="#2a2118"/>
<circle cx="465.0" cy="347.6" r="1.0" fill="#2a2118"/>
<circle cx="497.0" cy="362.0" r="1.0" fill="#2a2118"/>
<circle cx="465.0" cy="367.0" r="1.0" fill="#2a2118"/>
<circle cx="496.6" cy="380.0" r="1.0" fill="#2a2118"/>
<circle cx="480.0" cy="373.6" r="1.0" fill="#2a2118"/>
<polygon points="477.2,363.6 477.2,364.2 477.0,364.8 476.8,365.4 476.6,365.9 476.2,366.3 475.9,366.7 475.4,366.9 474.9,367.1 474.4,367.2 473.8,367.2 473.2,367.2 472.6,367.0 472.0,366.7 471.4,366.4 470.8,366.0 470.3,365.5 469.8,365.0 469.3,364.4 469.0,363.8 468.6,363.1 468.4,362.4 468.2,361.7 468.0,361.1 468.0,360.4 468.0,359.8 468.2,359.2 468.4,358.6 468.6,358.1 469.0,357.7 469.3,357.3 469.8,357.1 470.3,356.9 470.8,356.8 471.4,356.8 472.0,356.8 472.6,357.0 473.2,357.3 473.8,357.6 474.4,358.0 474.9,358.5 475.4,359.0 475.9,359.6 476.2,360.2 476.6,360.9 476.8,361.6 477.0,362.3 477.2,362.9" fill="#2b2219" stroke="#1d160f" stroke-width="1.05" stroke-linejoin="round" />
<polygon points="476.6,363.5 476.6,364.0 476.5,364.4 476.4,364.8 476.2,365.2 475.9,365.5 475.7,365.7 475.3,365.9 475.0,366.1 474.6,366.1 474.2,366.2 473.8,366.1 473.4,366.0 473.0,365.8 472.6,365.6 472.2,365.3 471.8,365.0 471.5,364.6 471.1,364.2 470.9,363.7 470.6,363.2 470.4,362.8 470.3,362.3 470.2,361.8 470.2,361.3 470.2,360.8 470.3,360.4 470.4,360.0 470.6,359.6 470.9,359.3 471.1,359.1 471.5,358.9 471.8,358.7 472.2,358.7 472.6,358.6 473.0,358.7 473.4,358.8 473.8,359.0 474.2,359.2 474.6,359.5 475.0,359.8 475.3,360.2 475.7,360.6 475.9,361.1 476.2,361.6 476.4,362.0 476.5,362.5 476.6,363.0" fill="#c4af89" stroke="#1d160f" stroke-width="1.05" stroke-linejoin="round" />
<polygon points="458.0,373.0 462.0,372.0 500.0,386.0 500.0,390.6 458.0,376.6" fill="#c4af89" stroke="#1d160f" stroke-width="1.05" stroke-linejoin="round" />
<circle cx="464.0" cy="376.6" r="0.8" fill="#2a2118"/>
<circle cx="472.0" cy="379.5" r="0.8" fill="#2a2118"/>
<circle cx="480.0" cy="382.4" r="0.8" fill="#2a2118"/>
<circle cx="488.0" cy="385.3" r="0.8" fill="#2a2118"/>
<circle cx="496.0" cy="388.2" r="0.8" fill="#2a2118"/>
<polygon points="499.4,338.4 507.0,322.0 507.0,326.0 501.4,340.0 501.6,384.0 500.0,386.0" fill="#2b2219" stroke="#1d160f" stroke-width="0.875" stroke-linejoin="round" />
<path d="M501.6,340 Q505,322 519,305.6 Q530,296 545,292.8 Q547.4,294 547,300 L546.6,348 L501.8,384 Z" fill="#dac8a4" stroke="#1d160f" stroke-width="1.4000000000000001" stroke-linejoin="round" stroke-linecap="round" />
<path d="M506,333 Q510,318 521,307.6 Q531,299 543,296.6" fill="none" stroke="#c4ab7f" stroke-width="1.0" stroke-linejoin="round" stroke-linecap="round" opacity="0.8"/>
<path d="M510.6,344.8 L510.4,331 Q512,318 522,310.6 Q530.6,305.6 537,308.6 L540,312.6 L540,321.6 Z" fill="#1c150e" stroke="#1d160f" stroke-width="1.05" stroke-linejoin="round" stroke-linecap="round" />
<path d="M513.6,339.6 L513.6,331.6 Q515,321.4 523.6,315 Q530,311.2 535,312.6 L536.6,314.6 L536.6,321.2 Z" fill="#dac8a4" stroke="#1a140e" stroke-width="0.6" stroke-linejoin="round" stroke-linecap="round" />
<rect x="520.3" y="326.6" width="4.6" height="1.5" rx="0.7" fill="#cbb78f" stroke="#1a140e" stroke-width="0.8" transform="rotate(-38.5 522.6 327.4)"/>
<rect x="526.2" y="321.9" width="4.6" height="1.5" rx="0.7" fill="#cbb78f" stroke="#1a140e" stroke-width="0.8" transform="rotate(-38.5 528.5 322.6)"/>
<rect x="531.7" y="317.2" width="4.6" height="1.5" rx="0.7" fill="#cbb78f" stroke="#1a140e" stroke-width="0.8" transform="rotate(-38.5 534.0 318.0)"/>
<rect x="520.8" y="332.1" width="4.6" height="1.5" rx="0.7" fill="#cbb78f" stroke="#1a140e" stroke-width="0.8" transform="rotate(-38.5 523.1 332.8)"/>
<rect x="526.2" y="327.8" width="4.6" height="1.5" rx="0.7" fill="#cbb78f" stroke="#1a140e" stroke-width="0.8" transform="rotate(-38.5 528.5 328.5)"/>
<rect x="531.9" y="322.9" width="4.6" height="1.5" rx="0.7" fill="#cbb78f" stroke="#1a140e" stroke-width="0.8" transform="rotate(-38.5 534.2 323.6)"/>
<polyline points="514.6,336.6 536.4,319.2" fill="none" stroke="#1d160f" stroke-width="0.875" stroke-linecap="round" stroke-linejoin="round" />
<polygon points="536.4,311.4 540.4,309.4 540.8,315.6 536.8,317.8" fill="#2b2219" stroke="#1d160f" stroke-width="0.875" stroke-linejoin="round" />
<polygon points="536.6,318.4 540.8,316.2 541.0,322.0 536.8,324.2" fill="#2b2219" stroke="#1d160f" stroke-width="0.875" stroke-linejoin="round" />
<polygon points="542.0,309.6 544.6,308.4 544.8,317.6 542.2,318.6" fill="#3a2e22" stroke="#1d160f" stroke-width="0.875" stroke-linejoin="round" />
<polygon points="511.0,336.0 516.6,334.6 518.0,339.6 512.0,343.6" fill="#2b2219" stroke="#1d160f" stroke-width="0.875" stroke-linejoin="round" />
<circle cx="519.4" cy="302.2" r="1.15" fill="#2a2118"/>
<circle cx="523.2" cy="307.6" r="1.15" fill="#2a2118"/>
<circle cx="544.0" cy="304.8" r="1.15" fill="#2a2118"/>
<circle cx="544.0" cy="326.4" r="1.15" fill="#2a2118"/>
<circle cx="542.4" cy="346.6" r="1.15" fill="#2a2118"/>
<circle cx="533.4" cy="355.4" r="1.15" fill="#2a2118"/>
<circle cx="502.8" cy="340.8" r="1.15" fill="#2a2118"/>
<circle cx="504.4" cy="363.0" r="1.15" fill="#2a2118"/>
<circle cx="504.6" cy="379.0" r="1.15" fill="#2a2118"/>
<circle cx="517.0" cy="370.6" r="1.15" fill="#2a2118"/>
<polygon points="502.2,343.6 506.8,341.6 507.2,350.6 502.6,352.8" fill="#2b2219" stroke="#1d160f" stroke-width="0.875" stroke-linejoin="round" />
<polygon points="505.1,287.9 505.1,288.4 504.9,288.9 504.6,289.4 504.2,289.8 503.8,290.1 503.2,290.4 502.5,290.7 501.8,290.9 501.0,291.0 500.1,291.0 499.3,291.0 498.4,290.9 497.5,290.7 496.7,290.5 495.8,290.2 495.0,289.9 494.3,289.5 493.6,289.0 493.0,288.5 492.6,288.0 492.2,287.5 491.9,287.0 491.7,286.4 491.6,285.9 491.7,285.4 491.9,284.9 492.2,284.4 492.6,284.0 493.0,283.7 493.6,283.4 494.3,283.1 495.0,282.9 495.8,282.8 496.7,282.8 497.5,282.8 498.4,282.9 499.3,283.1 500.1,283.3 501.0,283.6 501.8,283.9 502.5,284.3 503.2,284.8 503.8,285.3 504.2,285.8 504.6,286.3 504.9,286.8 505.1,287.4" fill="#dac8a4" stroke="#1d160f" stroke-width="1.2249999999999999" stroke-linejoin="round" />
<polygon points="503.4,285.7 503.4,286.1 503.2,286.4 503.0,286.8 502.7,287.1 502.4,287.4 501.9,287.6 501.4,287.8 500.9,287.9 500.3,288.0 499.7,288.0 499.1,288.0 498.4,287.9 497.7,287.8 497.1,287.6 496.5,287.4 495.9,287.1 495.4,286.8 494.9,286.5 494.4,286.1 494.1,285.7 493.8,285.3 493.6,284.9 493.4,284.5 493.4,284.1 493.4,283.7 493.6,283.4 493.8,283.0 494.1,282.7 494.4,282.4 494.9,282.2 495.4,282.0 495.9,281.9 496.5,281.8 497.1,281.8 497.7,281.8 498.4,281.9 499.1,282.0 499.7,282.2 500.3,282.4 500.9,282.7 501.4,283.0 501.9,283.3 502.4,283.7 502.7,284.1 503.0,284.5 503.2,284.9 503.4,285.3" fill="#e8d9b9" stroke="#1d160f" stroke-width="1.05" stroke-linejoin="round" />
<path d="M495.1,284.4 q-1,-5 3.2,-7.4 q4.5,2.4 3.2,7.4z" fill="#e8d9b9" stroke="#1d160f" stroke-width="1.2249999999999999" stroke-linejoin="round" stroke-linecap="round" />
<polygon points="498.7,293.5 498.6,294.0 498.4,294.5 498.1,295.0 497.7,295.5 497.2,295.9 496.6,296.2 495.8,296.5 495.0,296.7 494.2,296.8 493.3,296.9 492.4,296.9 491.4,296.8 490.4,296.6 489.5,296.4 488.6,296.1 487.8,295.7 487.0,295.3 486.2,294.8 485.6,294.3 485.1,293.8 484.7,293.2 484.4,292.6 484.2,292.0 484.1,291.5 484.2,290.9 484.4,290.4 484.7,289.9 485.1,289.4 485.6,289.0 486.2,288.7 487.0,288.4 487.8,288.2 488.6,288.1 489.5,288.0 490.4,288.0 491.4,288.1 492.4,288.3 493.3,288.5 494.2,288.9 495.0,289.2 495.8,289.6 496.6,290.1 497.2,290.6 497.7,291.2 498.1,291.7 498.4,292.3 498.6,292.9" fill="#dac8a4" stroke="#1d160f" stroke-width="1.2249999999999999" stroke-linejoin="round" />
<polygon points="496.8,291.1 496.8,291.5 496.6,291.9 496.4,292.3 496.1,292.6 495.7,292.9 495.2,293.2 494.7,293.4 494.1,293.5 493.5,293.6 492.8,293.6 492.1,293.6 491.4,293.5 490.7,293.4 490.0,293.2 489.3,293.0 488.7,292.7 488.1,292.4 487.6,292.0 487.1,291.6 486.7,291.2 486.4,290.8 486.2,290.4 486.0,289.9 486.0,289.5 486.0,289.1 486.2,288.7 486.4,288.3 486.7,288.0 487.1,287.7 487.6,287.4 488.1,287.2 488.7,287.1 489.3,287.0 490.0,287.0 490.7,287.0 491.4,287.1 492.1,287.2 492.8,287.4 493.5,287.6 494.1,287.9 494.7,288.2 495.2,288.6 495.7,289.0 496.1,289.4 496.4,289.8 496.6,290.2 496.8,290.7" fill="#e8d9b9" stroke="#1d160f" stroke-width="1.05" stroke-linejoin="round" />
<path d="M487.9,289.8 q-1,-5 3.5,-7.4 q4.9,2.4 3.5,7.4z" fill="#e8d9b9" stroke="#1d160f" stroke-width="1.2249999999999999" stroke-linejoin="round" stroke-linecap="round" />
<polyline points="479.6,287.6 484.0,281.0 490.0,277.6" fill="none" stroke="#1d160f" stroke-width="4.0" stroke-linejoin="round"/>
<polyline points="479.6,287.6 484.0,281.0 490.0,277.6" fill="none" stroke="#e8d9b9" stroke-width="3.0" stroke-linecap="round" stroke-linejoin="round" stroke-linecap="butt"/>
<polygon points="488.0,270.0 492.4,269.0 493.0,280.0 488.6,281.0" fill="#dac8a4" stroke="#1d160f" stroke-width="1.05" stroke-linejoin="round" />
<polyline points="491.4,262.6 491.6,268.0" fill="none" stroke="#3cc6c0" stroke-width="1.3" stroke-linecap="round" stroke-linejoin="round" />
<polygon points="405.2,226.2 405.1,227.1 404.7,228.0 404.1,228.8 403.2,229.5 402.2,230.1 400.9,230.6 399.5,230.9 397.9,231.1 396.2,231.1 394.4,231.0 392.5,230.8 390.6,230.4 388.7,229.9 386.8,229.3 385.0,228.5 383.3,227.7 381.7,226.8 380.3,225.8 379.0,224.8 378.0,223.7 377.1,222.6 376.5,221.5 376.1,220.4 376.0,219.4 376.1,218.5 376.5,217.6 377.1,216.8 378.0,216.1 379.0,215.5 380.3,215.0 381.7,214.7 383.3,214.5 385.0,214.5 386.8,214.6 388.7,214.8 390.6,215.2 392.5,215.7 394.4,216.3 396.2,217.1 397.9,217.9 399.5,218.8 400.9,219.8 402.2,220.8 403.2,221.9 404.1,223.0 404.7,224.1 405.1,225.2" fill="#dac8a4" stroke="#1d160f" stroke-width="1.4000000000000001" stroke-linejoin="round" />
<polygon points="402.9,224.6 402.8,225.4 402.4,226.2 401.9,226.9 401.2,227.4 400.3,227.9 399.3,228.3 398.1,228.6 396.7,228.7 395.3,228.8 393.8,228.7 392.2,228.5 390.6,228.2 389.0,227.8 387.4,227.2 385.9,226.6 384.5,225.9 383.1,225.1 381.9,224.3 380.9,223.4 380.0,222.5 379.3,221.6 378.8,220.7 378.4,219.8 378.3,219.0 378.4,218.2 378.8,217.4 379.3,216.7 380.0,216.2 380.9,215.7 381.9,215.3 383.1,215.0 384.5,214.9 385.9,214.8 387.4,214.9 389.0,215.1 390.6,215.4 392.2,215.8 393.8,216.4 395.3,217.0 396.7,217.7 398.1,218.5 399.3,219.3 400.3,220.2 401.2,221.1 401.9,222.0 402.4,222.9 402.8,223.8" fill="#e8d9b9" stroke="#1d160f" stroke-width="1.05" stroke-linejoin="round" />
<polygon points="399.7,222.0 399.6,222.7 399.3,223.2 398.7,223.8 398.0,224.2 397.0,224.6 396.0,224.9 394.7,225.2 393.4,225.3 392.0,225.3 390.6,225.3 389.2,225.1 387.8,224.8 386.5,224.5 385.2,224.1 384.2,223.6 383.2,223.0 382.5,222.4 381.9,221.8 381.6,221.2 381.5,220.6 381.5,211.1 381.6,210.5 381.9,209.9 382.5,209.4 383.2,208.9 384.2,208.5 385.2,208.2 386.5,208.0 387.8,207.9 389.2,207.8 390.6,207.9 392.0,208.1 393.4,208.3 394.7,208.7 396.0,209.1 397.0,209.6 398.0,210.1 398.7,210.7 399.3,211.3 399.6,212.0 399.7,212.6" fill="#dac8a4" stroke="#9a8560" stroke-width="0.4" stroke-linejoin="round" />
<polyline points="399.7,222.0 399.7,222.4 399.5,222.8 399.3,223.2 399.0,223.5 398.6,223.8 398.2,224.1 397.6,224.4 397.0,224.6 396.4,224.8 395.7,225.0 394.9,225.1 394.1,225.2 393.2,225.3 392.4,225.3 391.5,225.3 390.6,225.3 389.7,225.2 388.8,225.0 388.0,224.9 387.1,224.7 386.3,224.4 385.5,224.2 384.8,223.9 384.2,223.6 383.6,223.2 383.0,222.9 382.6,222.5 382.2,222.1 381.9,221.7 381.7,221.3 381.5,220.9 381.5,220.6" fill="none" stroke="#1d160f" stroke-width="1.2249999999999999" stroke-linecap="round" stroke-linejoin="round" />
<polygon points="401.1,212.7 401.2,213.3 401.1,214.0 400.8,214.5 400.2,215.1 399.5,215.6 398.6,216.0 397.5,216.4 396.3,216.6 395.0,216.8 393.6,216.9 392.1,217.0 390.6,216.9 389.1,216.7 387.6,216.5 386.2,216.1 384.9,215.7 383.7,215.3 382.6,214.7 381.7,214.2 381.0,213.5 380.4,212.9 380.1,212.3 380.0,211.6 380.1,211.0 380.1,206.1 380.4,205.0 380.7,203.9 381.3,202.9 382.0,202.0 382.7,201.2 383.6,200.4 384.6,199.8 385.7,199.3 386.9,198.9 388.1,198.7 389.3,198.6 390.6,198.6 391.9,198.8 393.1,199.1 394.3,199.5 395.5,200.1 396.6,200.8 397.6,201.5 398.5,202.4 399.2,203.4 399.9,204.4 400.5,205.5 400.8,206.6 401.1,207.8" fill="#e8d9b9" stroke="#9a8560" stroke-width="0.4" stroke-linejoin="round" />
<polyline points="401.2,212.9 401.2,213.4 401.1,213.8 400.9,214.3 400.6,214.7 400.2,215.1 399.7,215.5 399.1,215.8 398.4,216.1 397.6,216.3 396.8,216.6 395.8,216.7 394.9,216.8 393.8,216.9 392.8,217.0 391.7,216.9 390.6,216.9 389.5,216.8 388.4,216.6 387.4,216.4 386.3,216.2 385.4,215.9 384.4,215.6 383.6,215.2 382.8,214.8 382.1,214.4 381.5,214.0 381.0,213.5 380.6,213.1 380.3,212.6 380.1,212.2 380.0,211.7 380.0,211.3" fill="none" stroke="#1d160f" stroke-width="2.1" stroke-linecap="round" stroke-linejoin="round" />
<path d="M395.4,200.8 q3.4,5 1.6,10.5" fill="none" stroke="#c9b48c" stroke-width="2.4" stroke-linejoin="round" stroke-linecap="round" opacity="0.7"/>
<polygon points="472.0,255.7 471.9,256.6 471.5,257.5 470.9,258.2 470.1,258.9 469.0,259.4 467.8,259.8 466.4,260.1 464.8,260.3 463.1,260.3 461.3,260.2 459.5,260.0 457.6,259.6 455.7,259.1 453.9,258.5 452.1,257.8 450.4,257.0 448.8,256.1 447.4,255.1 446.2,254.1 445.1,253.1 444.3,252.1 443.7,251.1 443.3,250.0 443.2,249.1 443.3,248.2 443.7,247.3 444.3,246.6 445.1,245.9 446.2,245.4 447.4,245.0 448.8,244.7 450.4,244.5 452.1,244.5 453.9,244.6 455.7,244.8 457.6,245.2 459.5,245.7 461.3,246.3 463.1,247.0 464.8,247.8 466.4,248.7 467.8,249.7 469.0,250.7 470.1,251.7 470.9,252.7 471.5,253.7 471.9,254.8" fill="#dac8a4" stroke="#1d160f" stroke-width="1.4000000000000001" stroke-linejoin="round" />
<polygon points="469.7,254.2 469.6,255.0 469.3,255.7 468.8,256.3 468.1,256.8 467.2,257.3 466.2,257.7 465.0,257.9 463.6,258.0 462.2,258.1 460.7,258.0 459.2,257.8 457.6,257.4 456.0,257.0 454.5,256.5 453.0,255.9 451.6,255.2 450.2,254.5 449.0,253.7 448.0,252.9 447.1,252.0 446.4,251.1 445.9,250.3 445.6,249.4 445.5,248.6 445.6,247.8 445.9,247.1 446.4,246.5 447.1,246.0 448.0,245.5 449.0,245.1 450.2,244.9 451.6,244.8 453.0,244.7 454.5,244.8 456.0,245.0 457.6,245.4 459.2,245.8 460.7,246.3 462.2,246.9 463.6,247.6 465.0,248.3 466.2,249.1 467.2,249.9 468.1,250.8 468.8,251.7 469.3,252.5 469.6,253.4" fill="#e8d9b9" stroke="#1d160f" stroke-width="1.05" stroke-linejoin="round" />
<polygon points="465.2,251.5 465.1,252.1 464.8,252.6 464.4,253.1 463.7,253.5 463.0,253.9 462.1,254.2 461.1,254.4 459.9,254.5 458.8,254.6 457.6,254.5 456.4,254.4 455.3,254.1 454.1,253.8 453.1,253.5 452.2,253.0 451.5,252.5 450.8,252.0 450.4,251.4 450.1,250.9 450.0,250.3 450.0,226.3 450.1,225.7 450.4,225.2 450.8,224.7 451.5,224.3 452.2,223.9 453.1,223.6 454.1,223.4 455.3,223.3 456.4,223.2 457.6,223.3 458.8,223.4 459.9,223.7 461.1,224.0 462.1,224.3 463.0,224.8 463.7,225.3 464.4,225.8 464.8,226.4 465.1,226.9 465.2,227.5" fill="#dac8a4" stroke="#9a8560" stroke-width="0.4" stroke-linejoin="round" />
<polyline points="465.2,251.5 465.2,251.9 465.1,252.2 464.9,252.5 464.6,252.8 464.3,253.1 463.9,253.4 463.5,253.7 463.0,253.9 462.4,254.1 461.8,254.2 461.2,254.4 460.5,254.5 459.8,254.5 459.1,254.5 458.3,254.5 457.6,254.5 456.9,254.4 456.1,254.3 455.4,254.2 454.7,254.0 454.0,253.8 453.4,253.6 452.8,253.3 452.2,253.0 451.7,252.7 451.3,252.4 450.9,252.1 450.6,251.7 450.3,251.4 450.1,251.0 450.0,250.6 450.0,250.3" fill="none" stroke="#1d160f" stroke-width="1.4000000000000001" stroke-linecap="round" stroke-linejoin="round" />
<path d="M461.4,228.4 v23.0" fill="none" stroke="#c4ae86" stroke-width="2.6" stroke-linejoin="round" stroke-linecap="round" opacity="0.7"/>
<polygon points="465.2,227.5 465.1,228.0 464.9,228.4 464.6,228.8 464.2,229.2 463.6,229.6 463.0,229.9 462.2,230.1 461.4,230.3 460.5,230.5 459.6,230.5 458.6,230.5 457.6,230.5 456.6,230.4 455.6,230.2 454.7,230.0 453.8,229.7 453.0,229.4 452.2,229.0 451.6,228.6 451.0,228.2 450.6,227.7 450.3,227.2 450.1,226.8 450.0,226.3 450.1,225.8 450.3,225.4 450.6,225.0 451.0,224.6 451.6,224.2 452.2,223.9 453.0,223.7 453.8,223.5 454.7,223.3 455.6,223.3 456.6,223.3 457.6,223.3 458.6,223.4 459.6,223.6 460.5,223.8 461.4,224.1 462.2,224.4 463.0,224.8 463.6,225.2 464.2,225.6 464.6,226.1 464.9,226.6 465.1,227.0" fill="#e8d9b9" stroke="#1d160f" stroke-width="1.4000000000000001" stroke-linejoin="round" />
<polyline points="320.8,218.6 446.0,275.6" fill="none" stroke="#8f7a56" stroke-width="5.5" stroke-linejoin="round"/>
<polyline points="320.8,218.6 446.0,275.6" fill="none" stroke="#dcc394" stroke-width="4.8" stroke-linecap="round" stroke-linejoin="round" stroke-linecap="butt"/>
<polygon points="323.6,218.8 323.6,219.2 323.5,219.6 323.4,219.9 323.3,220.2 323.1,220.5 322.8,220.8 322.6,221.0 322.3,221.2 322.0,221.3 321.7,221.4 321.3,221.4 321.0,221.4 320.7,221.3 320.3,221.2 320.0,221.0 319.7,220.8 319.4,220.5 319.2,220.2 318.9,219.9 318.7,219.6 318.6,219.2 318.5,218.8 318.4,218.4 318.4,218.0 318.4,217.6 318.5,217.2 318.6,216.9 318.7,216.6 318.9,216.3 319.2,216.0 319.4,215.8 319.7,215.6 320.0,215.5 320.3,215.4 320.7,215.4 321.0,215.4 321.3,215.5 321.7,215.6 322.0,215.8 322.3,216.0 322.6,216.3 322.8,216.6 323.1,216.9 323.3,217.2 323.4,217.6 323.5,218.0 323.6,218.4" fill="#dac8a4" stroke="#1d160f" stroke-width="1.2249999999999999" stroke-linejoin="round" />
<polyline points="357.4,187.6 366.6,177.6 373.0,178.0 493.0,232.6" fill="none" stroke="#8f7a56" stroke-width="4.9" stroke-linejoin="round"/>
<polyline points="357.4,187.6 366.6,177.6 373.0,178.0 493.0,232.6" fill="none" stroke="#dcc394" stroke-width="4.2" stroke-linecap="round" stroke-linejoin="round" stroke-linecap="butt"/>
<polyline points="366.0,176.6 367.6,179.6" fill="none" stroke="#1d160f" stroke-width="1.75" stroke-linecap="round" stroke-linejoin="round" />
<polyline points="372.0,176.4 373.4,180.0" fill="none" stroke="#1d160f" stroke-width="1.75" stroke-linecap="round" stroke-linejoin="round" />
<polyline points="359.0,93.8 365.0,92.4 372.0,96.0 493.0,230.0" fill="none" stroke="#8f7a56" stroke-width="4.2" stroke-linejoin="round"/>
<polyline points="359.0,93.8 365.0,92.4 372.0,96.0 493.0,230.0" fill="none" stroke="#dcc394" stroke-width="3.5" stroke-linecap="round" stroke-linejoin="round" stroke-linecap="butt"/>
<polyline points="364.0,91.0 365.0,94.6" fill="none" stroke="#1d160f" stroke-width="2.1" stroke-linecap="round" stroke-linejoin="round" />
<polyline points="370.6,93.6 372.6,97.6" fill="none" stroke="#1d160f" stroke-width="2.4499999999999997" stroke-linecap="round" stroke-linejoin="round" />
<polyline points="327.4,122.4 458.4,263.0" fill="none" stroke="#8f7a56" stroke-width="3.5" stroke-linejoin="round"/>
<polyline points="327.4,122.4 458.4,263.0" fill="none" stroke="#dcc394" stroke-width="2.8" stroke-linecap="round" stroke-linejoin="round" stroke-linecap="butt"/>
<polyline points="326.4,121.0 330.0,125.0" fill="none" stroke="#1d160f" stroke-width="3.5" stroke-linecap="round" stroke-linejoin="round" />
<polyline points="333.4,129.0 335.4,131.0" fill="none" stroke="#1d160f" stroke-width="3.5" stroke-linecap="round" stroke-linejoin="round" />
<polygon points="455.6,262.4 459.6,260.0 461.6,263.4 457.6,266.0" fill="#dac8a4" stroke="#1d160f" stroke-width="1.05" stroke-linejoin="round" />
<polygon points="466.0,225.6 472.0,223.6 474.6,228.0 473.6,232.0 468.0,233.6" fill="#dac8a4" stroke="#1d160f" stroke-width="1.2249999999999999" stroke-linejoin="round" />
<path d="M466.6,229 q3,1.6 7,-0.6 M469,224.6 l0.6,4" fill="none" stroke="#1d160f" stroke-width="1.2249999999999999" stroke-linejoin="round" stroke-linecap="round" />
<polygon points="446.0,228.0 451.0,226.4 451.6,229.6 446.6,231.0" fill="#c4af89" stroke="#1d160f" stroke-width="1.05" stroke-linejoin="round" />
<polygon points="496.8,231.2 496.8,231.4 496.7,231.6 496.6,231.8 496.5,232.0 496.3,232.2 496.2,232.3 495.9,232.4 495.7,232.5 495.4,232.5 495.2,232.5 494.9,232.5 494.6,232.4 494.3,232.3 494.0,232.2 493.8,232.0 493.5,231.9 493.3,231.7 493.0,231.4 492.9,231.2 492.7,231.0 492.6,230.7 492.5,230.5 492.4,230.2 492.4,230.0 492.4,229.8 492.5,229.6 492.6,229.4 492.7,229.2 492.9,229.0 493.0,228.9 493.3,228.8 493.5,228.7 493.8,228.7 494.0,228.7 494.3,228.7 494.6,228.8 494.9,228.9 495.2,229.0 495.4,229.2 495.7,229.3 495.9,229.5 496.2,229.8 496.3,230.0 496.5,230.2 496.6,230.5 496.7,230.7 496.8,231.0" fill="#dac8a4" stroke="#1d160f" stroke-width="1.2249999999999999" stroke-linejoin="round" />
<polygon points="392.4,296.0 421.4,285.0 455.0,270.6 466.0,266.4 470.0,272.0 452.0,283.0 430.0,297.0 425.0,312.0 389.0,314.4" fill="#dac8a4" stroke="#1d160f" stroke-width="1.4000000000000001" stroke-linejoin="round" />
<polygon points="392.4,296.0 421.4,285.0 424.0,290.0 427.0,296.0 397.0,309.6" fill="#e8d9b9" stroke="#1d160f" stroke-width="1.2249999999999999" stroke-linejoin="round" />
<circle cx="396.4" cy="298.4" r="1.2" fill="#2a2118"/>
<circle cx="415.0" cy="291.6" r="1.0" fill="#2a2118"/>
<circle cx="403.0" cy="305.0" r="0.9" fill="#2a2118"/>
<polygon points="430.0,283.6 438.0,280.0 440.6,286.0 433.0,289.6" fill="#c4af89" stroke="#1d160f" stroke-width="1.2249999999999999" stroke-linejoin="round" />
<polygon points="442.0,277.6 452.0,273.6 454.0,280.0 445.0,284.0" fill="#c4af89" stroke="#1d160f" stroke-width="1.2249999999999999" stroke-linejoin="round" />
<path d="M431,286 l7,-3 M444,281 l8,-3.4" fill="none" stroke="#1d160f" stroke-width="1.4000000000000001" stroke-linejoin="round" stroke-linecap="round" />
<path d="M455,285 Q470,266 492,258" fill="none" stroke="#1d160f" stroke-width="3.2" stroke-linejoin="round" stroke-linecap="round" />
<path d="M455,285 Q470,266 492,258" fill="none" stroke="#dac8a4" stroke-width="2.2" stroke-linejoin="round" stroke-linecap="round" />
<path d="M462,283 Q474,268 494,262" fill="none" stroke="#1d160f" stroke-width="2.4" stroke-linejoin="round" stroke-linecap="round" />
<path d="M462,283 Q474,268 494,262" fill="none" stroke="#c4af89" stroke-width="1.4" stroke-linejoin="round" stroke-linecap="round" />
<polygon points="424.4,297.6 459.0,283.4 469.0,304.0 447.0,313.0 435.6,317.6 428.0,313.0" fill="#e8d9b9" stroke="#8f7a56" stroke-width="0.5" stroke-linejoin="round" />
<path d="M428,302 Q444,294 458,291" fill="none" stroke="#d2bc92" stroke-width="2.4" stroke-linejoin="round" stroke-linecap="round" opacity="0.8"/>
<path d="M432,311 Q446,305 462,300" fill="none" stroke="#cdb78d" stroke-width="1.6" stroke-linejoin="round" stroke-linecap="round" opacity="0.6"/>
<path d="M427.6,294.6 Q420.6,300 424.2,308.6 Q427.4,316 435.6,316.6" fill="none" stroke="#1d160f" stroke-width="4.2" stroke-linejoin="round" stroke-linecap="round" />
<path d="M427.6,294.6 Q421.4,300 424.8,308.4 Q428,315.4 435.6,316" fill="none" stroke="#6f5f47" stroke-width="1.4" stroke-linejoin="round" stroke-linecap="round" />
<circle cx="424.4" cy="297.6" r="0.6" fill="#2a2118"/>
<circle cx="424.8" cy="300.9" r="0.6" fill="#2a2118"/>
<circle cx="426.2" cy="304.2" r="0.6" fill="#2a2118"/>
<circle cx="428.4" cy="307.5" r="0.6" fill="#2a2118"/>
<circle cx="431.6" cy="310.8" r="0.6" fill="#2a2118"/>
<circle cx="435.6" cy="314.1" r="0.6" fill="#2a2118"/>
<polygon points="473.6,293.8 473.6,295.2 473.4,296.5 473.1,297.8 472.6,299.0 472.0,300.0 471.2,301.0 470.3,301.8 469.3,302.5 468.2,303.0 467.1,303.3 465.8,303.4 464.6,303.4 463.3,303.2 462.1,302.8 460.9,302.2 459.7,301.5 458.6,300.6 457.6,299.6 456.7,298.5 456.0,297.2 455.4,295.9 454.9,294.6 454.6,293.2 454.4,291.8 454.4,290.4 454.6,289.1 454.9,287.8 455.4,286.6 456.0,285.6 456.8,284.6 457.7,283.8 458.7,283.1 459.8,282.6 460.9,282.3 462.2,282.2 463.4,282.2 464.7,282.4 465.9,282.8 467.1,283.4 468.3,284.1 469.4,285.0 470.4,286.0 471.3,287.1 472.0,288.4 472.6,289.7 473.1,291.0 473.4,292.4" fill="#2a2017" stroke="#1d160f" stroke-width="1.575" stroke-linejoin="round" />
<polygon points="473.0,293.4 473.0,294.6 472.9,295.7 472.6,296.8 472.2,297.8 471.7,298.7 471.0,299.5 470.3,300.2 469.4,300.8 468.5,301.2 467.6,301.5 466.5,301.6 465.5,301.6 464.5,301.4 463.4,301.1 462.4,300.6 461.4,300.0 460.5,299.3 459.7,298.4 459.0,297.4 458.3,296.4 457.8,295.3 457.4,294.2 457.1,293.0 457.0,291.8 457.0,290.6 457.1,289.5 457.4,288.4 457.8,287.4 458.3,286.5 459.0,285.7 459.7,285.0 460.6,284.4 461.5,284.0 462.4,283.7 463.5,283.6 464.5,283.6 465.5,283.8 466.6,284.1 467.6,284.6 468.6,285.2 469.5,285.9 470.3,286.8 471.0,287.8 471.7,288.8 472.2,289.9 472.6,291.0 472.9,292.2" fill="#4a3929" stroke="#17110b" stroke-width="0.6" stroke-linejoin="round" />
<polygon points="471.0,293.0 471.0,293.9 470.9,294.7 470.7,295.5 470.4,296.2 470.1,296.9 469.6,297.5 469.1,298.0 468.5,298.4 467.9,298.7 467.2,298.9 466.5,299.0 465.8,299.0 465.1,298.9 464.3,298.6 463.6,298.3 462.9,297.8 462.3,297.3 461.7,296.6 461.2,295.9 460.8,295.2 460.4,294.4 460.1,293.5 459.9,292.7 459.8,291.8 459.8,290.9 459.9,290.1 460.1,289.3 460.4,288.6 460.7,287.9 461.2,287.3 461.7,286.8 462.3,286.4 462.9,286.1 463.6,285.9 464.3,285.8 465.0,285.8 465.7,285.9 466.5,286.2 467.2,286.5 467.9,287.0 468.5,287.5 469.1,288.2 469.6,288.9 470.0,289.6 470.4,290.4 470.7,291.3 470.9,292.1" fill="#5a4634" stroke="none" stroke-width="0" stroke-linejoin="round" />
<polygon points="472.0,288.0 479.0,284.0 482.0,289.0 475.0,294.0" fill="#dac8a4" stroke="#1d160f" stroke-width="1.2249999999999999" stroke-linejoin="round" />
<polygon points="470.0,299.0 478.0,294.6 481.0,299.6 473.0,304.6" fill="#dac8a4" stroke="#1d160f" stroke-width="1.2249999999999999" stroke-linejoin="round" />
<path d="M474,287 l3,5 M476.4,285.6 l3,5" fill="none" stroke="#1d160f" stroke-width="1.2249999999999999" stroke-linejoin="round" stroke-linecap="round" />
<polygon points="441.6,309.6 456.0,304.0 458.0,307.6 443.6,313.6" fill="#e8d9b9" stroke="#1d160f" stroke-width="1.2249999999999999" stroke-linejoin="round" />
<polygon points="443.6,313.6 458.0,307.6 467.0,303.0 472.6,307.0 470.0,312.6 456.0,322.6 446.0,321.0" fill="#dac8a4" stroke="#1d160f" stroke-width="1.4000000000000001" stroke-linejoin="round" />
<polyline points="458.0,307.6 460.6,319.0" fill="none" stroke="#1d160f" stroke-width="1.2249999999999999" stroke-linecap="round" stroke-linejoin="round" />
<circle cx="462.0" cy="309.4" r="0.9" fill="#2a2118"/>
<polyline points="470.0,312.6 499.0,326.0" fill="none" stroke="#1d160f" stroke-width="1.4000000000000001" stroke-linecap="round" stroke-linejoin="round" />
<polygon points="525.0,404.0 531.0,401.6 532.0,417.0 527.0,420.0" fill="#a6906a" stroke="#1d160f" stroke-width="0.875" stroke-linejoin="round" />
<polygon points="519.0,399.0 526.0,402.0 526.0,414.0 519.0,411.0" fill="#5e4e38" stroke="#1d160f" stroke-width="0.875" stroke-linejoin="round" />
<polygon points="523.4,419.0 523.2,421.9 522.6,424.6 521.6,427.0 520.2,429.1 518.5,430.9 516.5,432.3 514.1,433.3 511.6,433.8 508.8,434.0 505.8,433.7 502.8,433.0 499.7,431.9 496.6,430.4 493.6,428.5 490.6,426.3 487.9,423.8 485.3,421.1 482.9,418.1 480.9,415.0 479.2,411.8 477.8,408.5 476.8,405.3 476.2,402.1 476.0,399.0 476.2,396.1 476.8,393.4 477.8,391.0 479.2,388.9 480.9,387.1 482.9,385.7 485.3,384.7 487.8,384.2 490.6,384.0 493.6,384.3 496.6,385.0 499.7,386.1 502.8,387.6 505.8,389.5 508.8,391.7 511.6,394.2 514.1,396.9 516.5,399.9 518.5,403.0 520.2,406.2 521.6,409.5 522.6,412.7 523.2,415.9" fill="#c4af89" stroke="#1d160f" stroke-width="1.2249999999999999" stroke-linejoin="round" />
<polygon points="521.2,420.7 521.0,423.6 520.4,426.3 519.4,428.7 518.0,430.8 516.3,432.6 514.3,434.0 511.9,435.0 509.4,435.6 506.6,435.7 503.6,435.4 500.6,434.7 497.5,433.6 494.4,432.1 491.4,430.3 488.4,428.1 485.6,425.6 483.1,422.8 480.7,419.8 478.7,416.7 477.0,413.5 475.6,410.2 474.6,407.0 474.0,403.8 473.8,400.7 474.0,397.8 474.6,395.1 475.6,392.7 477.0,390.6 478.7,388.8 480.7,387.5 483.1,386.5 485.6,385.9 488.4,385.7 491.4,386.0 494.4,386.7 497.5,387.8 500.6,389.3 503.6,391.2 506.6,393.4 509.4,395.9 511.9,398.6 514.3,401.6 516.3,404.7 518.0,407.9 519.4,411.2 520.4,414.5 521.0,417.6" fill="#dac8a4" stroke="#1d160f" stroke-width="1.05" stroke-linejoin="round" />
<polygon points="518.3,424.1 518.1,427.1 517.5,429.9 516.4,432.5 515.0,434.6 513.2,436.5 511.1,437.9 508.7,439.0 506.0,439.6 503.1,439.7 500.0,439.4 496.9,438.7 493.6,437.5 490.4,436.0 487.3,434.0 484.2,431.8 481.3,429.2 478.6,426.3 476.2,423.2 474.1,420.0 472.3,416.6 470.9,413.2 469.8,409.8 469.2,406.5 469.0,403.3 469.2,400.3 469.8,397.5 470.9,395.0 472.3,392.8 474.1,391.0 476.2,389.5 478.6,388.5 481.3,387.9 484.2,387.7 487.3,388.0 490.4,388.8 493.6,389.9 496.9,391.5 500.0,393.4 503.1,395.7 506.0,398.3 508.7,401.2 511.1,404.2 513.2,407.5 515.0,410.8 516.4,414.2 517.5,417.6 518.1,420.9" fill="#e8d9b9" stroke="#1d160f" stroke-width="1.05" stroke-linejoin="round" />
<polygon points="514.4,426.9 514.2,429.9 513.6,432.6 512.6,435.1 511.2,437.3 509.4,439.1 507.3,440.5 504.9,441.6 502.2,442.1 499.4,442.3 496.3,442.0 493.2,441.3 490.0,440.2 486.8,438.6 483.7,436.7 480.7,434.4 477.8,431.8 475.2,429.0 472.8,426.0 470.7,422.8 468.9,419.4 467.5,416.1 466.4,412.7 465.8,409.4 465.6,406.3 465.8,403.3 466.4,400.5 467.5,398.0 468.9,395.9 470.7,394.0 472.8,392.6 475.2,391.6 477.8,391.0 480.7,390.8 483.7,391.1 486.8,391.8 490.0,393.0 493.2,394.5 496.3,396.5 499.4,398.7 502.2,401.3 504.9,404.1 507.3,407.2 509.4,410.4 511.2,413.7 512.6,417.1 513.6,420.4 514.2,423.7" fill="#dac8a4" stroke="#1d160f" stroke-width="1.05" stroke-linejoin="round" />
<polygon points="512.4,427.6 512.2,430.5 511.6,433.2 510.6,435.6 509.2,437.7 507.5,439.5 505.5,440.9 503.1,441.9 500.6,442.4 497.8,442.6 494.8,442.3 491.8,441.6 488.7,440.5 485.6,439.0 482.6,437.1 479.6,434.9 476.9,432.4 474.3,429.7 471.9,426.7 469.9,423.6 468.2,420.4 466.8,417.1 465.8,413.9 465.2,410.7 465.0,407.6 465.2,404.7 465.8,402.0 466.8,399.6 468.2,397.5 469.9,395.7 471.9,394.3 474.3,393.3 476.8,392.8 479.6,392.6 482.6,392.9 485.6,393.6 488.7,394.7 491.8,396.2 494.8,398.1 497.8,400.3 500.6,402.8 503.1,405.5 505.5,408.5 507.5,411.6 509.2,414.8 510.6,418.1 511.6,421.3 512.2,424.5" fill="#dac8a4" stroke="#1d160f" stroke-width="1.2249999999999999" stroke-linejoin="round" />
<polygon points="507.7,425.6 507.5,427.9 507.0,430.1 506.2,432.0 505.1,433.7 503.7,435.1 502.1,436.2 500.2,437.0 498.2,437.5 496.0,437.6 493.6,437.4 491.2,436.8 488.7,435.9 486.2,434.7 483.8,433.2 481.4,431.5 479.2,429.5 477.2,427.3 475.3,424.9 473.7,422.4 472.3,419.8 471.2,417.2 470.4,414.6 469.9,412.1 469.7,409.6 469.9,407.3 470.4,405.1 471.2,403.2 472.3,401.5 473.7,400.1 475.3,399.0 477.2,398.2 479.2,397.7 481.4,397.6 483.8,397.8 486.2,398.4 488.7,399.3 491.2,400.5 493.6,402.0 496.0,403.7 498.2,405.7 500.2,407.9 502.1,410.3 503.7,412.8 505.1,415.4 506.2,418.0 507.0,420.6 507.5,423.1" fill="#c4af89" stroke="#1d160f" stroke-width="1.05" stroke-linejoin="round" />
<polygon points="507.4,423.6 507.2,425.7 506.8,427.6 506.1,429.4 505.1,430.9 503.8,432.1 502.4,433.1 500.7,433.9 498.8,434.3 496.8,434.4 494.7,434.2 492.5,433.7 490.3,432.9 488.1,431.8 485.9,430.5 483.8,428.9 481.8,427.1 479.9,425.1 478.2,423.0 476.8,420.7 475.5,418.4 474.5,416.1 473.8,413.7 473.4,411.4 473.2,409.2 473.4,407.1 473.8,405.2 474.5,403.4 475.5,401.9 476.8,400.7 478.2,399.7 479.9,398.9 481.8,398.5 483.8,398.4 485.9,398.6 488.1,399.1 490.3,399.9 492.5,401.0 494.7,402.3 496.8,403.9 498.8,405.7 500.7,407.7 502.4,409.8 503.8,412.1 505.1,414.4 506.1,416.7 506.8,419.1 507.2,421.4" fill="#8f7b58" stroke="#1d160f" stroke-width="0.875" stroke-linejoin="round" />
<polygon points="494.5,419.1 506.7,425.1 506.4,428.2 494.3,421.9" fill="#dac8a4" stroke="#1d160f" stroke-width="0.875" stroke-linejoin="round" />
<polygon points="494.2,422.0 504.3,432.8 502.4,434.6 492.6,423.6" fill="#dac8a4" stroke="#1d160f" stroke-width="0.875" stroke-linejoin="round" />
<polygon points="492.5,423.6 497.8,436.5 494.8,436.5 489.8,423.7" fill="#dac8a4" stroke="#1d160f" stroke-width="0.875" stroke-linejoin="round" />
<polygon points="489.7,423.7 488.8,435.0 485.5,433.4 486.7,422.2" fill="#dac8a4" stroke="#1d160f" stroke-width="0.875" stroke-linejoin="round" />
<polygon points="486.6,422.1 479.8,428.9 477.1,426.0 484.2,419.4" fill="#dac8a4" stroke="#1d160f" stroke-width="0.875" stroke-linejoin="round" />
<polygon points="484.1,419.3 473.1,419.8 471.7,416.3 482.9,416.2" fill="#dac8a4" stroke="#1d160f" stroke-width="0.875" stroke-linejoin="round" />
<polygon points="482.9,416.1 470.7,410.1 471.0,407.0 483.1,413.3" fill="#dac8a4" stroke="#1d160f" stroke-width="0.875" stroke-linejoin="round" />
<polygon points="483.2,413.2 473.1,402.4 475.0,400.6 484.8,411.6" fill="#dac8a4" stroke="#1d160f" stroke-width="0.875" stroke-linejoin="round" />
<polygon points="484.9,411.6 479.6,398.7 482.6,398.7 487.6,411.5" fill="#dac8a4" stroke="#1d160f" stroke-width="0.875" stroke-linejoin="round" />
<polygon points="487.7,411.5 488.6,400.2 491.9,401.8 490.7,413.0" fill="#dac8a4" stroke="#1d160f" stroke-width="0.875" stroke-linejoin="round" />
<polygon points="490.8,413.1 497.6,406.3 500.3,409.2 493.2,415.8" fill="#dac8a4" stroke="#1d160f" stroke-width="0.875" stroke-linejoin="round" />
<polygon points="493.3,415.9 504.3,415.4 505.7,418.9 494.5,419.0" fill="#dac8a4" stroke="#1d160f" stroke-width="0.875" stroke-linejoin="round" />
<polygon points="496.5,420.9 496.5,421.9 496.3,422.7 495.9,423.5 495.5,424.2 494.9,424.8 494.2,425.3 493.5,425.6 492.6,425.8 491.7,425.8 490.7,425.8 489.7,425.5 488.7,425.2 487.7,424.7 486.7,424.0 485.7,423.3 484.8,422.5 483.9,421.6 483.2,420.6 482.5,419.6 481.9,418.5 481.5,417.4 481.1,416.4 480.9,415.3 480.9,414.3 480.9,413.3 481.1,412.5 481.5,411.7 481.9,411.0 482.5,410.4 483.2,409.9 483.9,409.6 484.8,409.4 485.7,409.4 486.7,409.4 487.7,409.7 488.7,410.0 489.7,410.5 490.7,411.2 491.7,411.9 492.6,412.7 493.5,413.6 494.2,414.6 494.9,415.6 495.5,416.7 495.9,417.8 496.3,418.8 496.5,419.9" fill="#dac8a4" stroke="#1d160f" stroke-width="1.05" stroke-linejoin="round" />
<polygon points="493.9,419.8 493.9,420.4 493.7,421.0 493.5,421.6 493.2,422.0 492.8,422.4 492.4,422.7 491.9,422.9 491.3,423.1 490.7,423.1 490.0,423.0 489.4,422.9 488.7,422.6 488.0,422.3 487.4,421.9 486.7,421.4 486.1,420.9 485.5,420.3 485.0,419.6 484.6,418.9 484.2,418.2 483.9,417.5 483.7,416.8 483.5,416.1 483.5,415.4 483.5,414.8 483.7,414.2 483.9,413.6 484.2,413.2 484.6,412.8 485.0,412.5 485.5,412.3 486.1,412.1 486.7,412.1 487.4,412.2 488.0,412.3 488.7,412.6 489.4,412.9 490.0,413.3 490.7,413.8 491.3,414.3 491.9,414.9 492.4,415.6 492.8,416.3 493.2,417.0 493.5,417.7 493.7,418.4 493.9,419.1" fill="#e8d9b9" stroke="#1d160f" stroke-width="1.05" stroke-linejoin="round" />
<polygon points="491.3,418.7 491.3,419.0 491.2,419.3 491.1,419.6 491.0,419.8 490.8,420.0 490.5,420.2 490.3,420.3 490.0,420.3 489.7,420.3 489.4,420.3 489.0,420.2 488.7,420.1 488.4,420.0 488.0,419.7 487.7,419.5 487.4,419.2 487.1,418.9 486.9,418.6 486.6,418.3 486.4,417.9 486.3,417.5 486.2,417.2 486.1,416.8 486.1,416.5 486.1,416.2 486.2,415.9 486.3,415.6 486.4,415.4 486.6,415.2 486.9,415.0 487.1,414.9 487.4,414.9 487.7,414.9 488.0,414.9 488.4,415.0 488.7,415.1 489.0,415.2 489.4,415.5 489.7,415.7 490.0,416.0 490.3,416.3 490.5,416.6 490.8,416.9 491.0,417.3 491.1,417.7 491.2,418.0 491.3,418.4" fill="#4a3a2a" stroke="#1d160f" stroke-width="0.875" stroke-linejoin="round" />
<polygon points="762.0,438.6 761.8,441.7 761.2,444.6 760.2,447.3 758.8,449.6 757.0,451.5 755.0,453.1 752.6,454.2 750.0,454.9 747.2,455.2 744.2,454.9 741.1,454.3 738.0,453.2 734.9,451.7 731.8,449.8 728.8,447.5 726.0,444.9 723.4,442.0 721.0,438.9 719.0,435.6 717.2,432.2 715.8,428.8 714.8,425.3 714.2,421.9 714.0,418.6 714.2,415.5 714.8,412.6 715.8,409.9 717.2,407.6 719.0,405.7 721.0,404.1 723.4,403.0 726.0,402.3 728.8,402.0 731.8,402.3 734.9,402.9 738.0,404.0 741.1,405.5 744.2,407.4 747.2,409.7 750.0,412.3 752.6,415.2 755.0,418.3 757.0,421.6 758.8,425.0 760.2,428.4 761.2,431.9 761.8,435.3" fill="#c3a879" stroke="#1d160f" stroke-width="1.2249999999999999" stroke-linejoin="round" />
<polygon points="758.0,441.6 757.8,444.7 757.2,447.6 756.2,450.3 754.8,452.6 753.0,454.5 751.0,456.1 748.6,457.2 746.0,457.9 743.2,458.2 740.2,457.9 737.1,457.3 734.0,456.2 730.9,454.7 727.8,452.8 724.8,450.5 722.0,447.9 719.4,445.0 717.0,441.9 715.0,438.6 713.2,435.2 711.8,431.8 710.8,428.3 710.2,424.9 710.0,421.6 710.2,418.5 710.8,415.6 711.8,412.9 713.2,410.6 715.0,408.7 717.0,407.1 719.4,406.0 722.0,405.3 724.8,405.0 727.8,405.3 730.9,405.9 734.0,407.0 737.1,408.5 740.2,410.4 743.2,412.7 746.0,415.3 748.6,418.2 751.0,421.3 753.0,424.6 754.8,428.0 756.2,431.4 757.2,434.9 757.8,438.3" fill="#c3a879" stroke="#1d160f" stroke-width="1.2249999999999999" stroke-linejoin="round" />
<polygon points="753.2,439.6 753.0,442.1 752.5,444.4 751.7,446.5 750.6,448.4 749.2,449.9 747.6,451.2 745.7,452.1 743.6,452.6 741.3,452.8 739.0,452.7 736.5,452.2 734.0,451.3 731.5,450.1 729.0,448.5 726.7,446.7 724.4,444.6 722.3,442.3 720.4,439.9 718.8,437.2 717.4,434.5 716.3,431.7 715.5,429.0 715.0,426.2 714.8,423.6 715.0,421.1 715.5,418.8 716.3,416.7 717.4,414.8 718.8,413.3 720.4,412.0 722.3,411.1 724.4,410.6 726.7,410.4 729.0,410.5 731.5,411.0 734.0,411.9 736.5,413.1 739.0,414.7 741.3,416.5 743.6,418.6 745.7,420.9 747.6,423.3 749.2,426.0 750.6,428.7 751.7,431.5 752.5,434.2 753.0,437.0" fill="#a48b60" stroke="#1d160f" stroke-width="0.875" stroke-linejoin="round" />
<polygon points="700.0,476.0 776.0,408.0 776.0,414.0 700.0,482.0" fill="#a48b60" stroke="#1d160f" stroke-width="0.875" stroke-linejoin="round" />
<polygon points="613.0,461.6 612.8,464.7 612.2,467.6 611.2,470.3 609.8,472.6 608.0,474.5 606.0,476.1 603.6,477.2 601.0,477.9 598.2,478.2 595.2,477.9 592.1,477.3 589.0,476.2 585.9,474.7 582.8,472.8 579.8,470.5 577.0,467.9 574.4,465.0 572.0,461.9 570.0,458.6 568.2,455.2 566.8,451.8 565.8,448.3 565.2,444.9 565.0,441.6 565.2,438.5 565.8,435.6 566.8,432.9 568.2,430.6 570.0,428.7 572.0,427.1 574.4,426.0 577.0,425.3 579.8,425.0 582.8,425.3 585.9,425.9 589.0,427.0 592.1,428.5 595.2,430.4 598.2,432.7 601.0,435.3 603.6,438.2 606.0,441.3 608.0,444.6 609.8,448.0 611.2,451.4 612.2,454.9 612.8,458.3" fill="#c4af89" stroke="#1d160f" stroke-width="1.2249999999999999" stroke-linejoin="round" />
<polygon points="608.8,464.9 608.6,468.0 608.0,470.9 607.0,473.6 605.6,475.9 603.8,477.8 601.8,479.4 599.4,480.5 596.8,481.2 594.0,481.5 591.0,481.2 587.9,480.6 584.8,479.5 581.7,478.0 578.6,476.1 575.6,473.8 572.8,471.2 570.2,468.3 567.8,465.2 565.8,461.9 564.0,458.5 562.6,455.1 561.6,451.6 561.0,448.2 560.8,444.9 561.0,441.8 561.6,438.9 562.6,436.2 564.0,433.9 565.8,432.0 567.8,430.4 570.2,429.3 572.8,428.6 575.6,428.3 578.6,428.6 581.7,429.2 584.8,430.3 587.9,431.8 591.0,433.7 594.0,436.0 596.8,438.6 599.4,441.5 601.8,444.6 603.8,447.9 605.6,451.3 607.0,454.7 608.0,458.2 608.6,461.6" fill="#dac8a4" stroke="#1d160f" stroke-width="1.05" stroke-linejoin="round" />
<polygon points="604.6,468.2 604.4,471.3 603.8,474.2 602.8,476.9 601.4,479.2 599.6,481.1 597.6,482.7 595.2,483.8 592.6,484.5 589.8,484.8 586.8,484.5 583.7,483.9 580.6,482.8 577.5,481.3 574.4,479.4 571.4,477.1 568.6,474.5 566.0,471.6 563.6,468.5 561.6,465.2 559.8,461.8 558.4,458.4 557.4,454.9 556.8,451.5 556.6,448.2 556.8,445.1 557.4,442.2 558.4,439.5 559.8,437.2 561.6,435.3 563.6,433.7 566.0,432.6 568.6,431.9 571.4,431.6 574.4,431.9 577.5,432.5 580.6,433.6 583.7,435.1 586.8,437.0 589.8,439.3 592.6,441.9 595.2,444.8 597.6,447.9 599.6,451.2 601.4,454.6 602.8,458.0 603.8,461.5 604.4,464.9" fill="#dac8a4" stroke="#1d160f" stroke-width="1.2249999999999999" stroke-linejoin="round" />
<polygon points="598.4,465.6 598.2,467.9 597.8,470.1 597.0,472.0 596.0,473.7 594.7,475.2 593.2,476.3 591.4,477.1 589.5,477.7 587.4,477.9 585.2,477.7 582.9,477.2 580.6,476.4 578.3,475.3 576.0,473.9 573.8,472.2 571.7,470.3 569.8,468.1 568.0,465.8 566.5,463.4 565.2,460.9 564.2,458.3 563.4,455.8 563.0,453.2 562.8,450.8 563.0,448.5 563.4,446.3 564.2,444.4 565.2,442.7 566.5,441.2 568.0,440.1 569.8,439.3 571.7,438.7 573.8,438.5 576.0,438.7 578.3,439.2 580.6,440.0 582.9,441.1 585.2,442.5 587.4,444.2 589.5,446.1 591.4,448.3 593.2,450.6 594.7,453.0 596.0,455.5 597.0,458.1 597.8,460.6 598.2,463.2" fill="#fff" stroke="none" stroke-width="0" stroke-linejoin="round" />
<polygon points="605.1,460.3 604.9,462.6 604.5,464.8 603.7,466.7 602.7,468.4 601.4,469.9 599.9,471.0 598.1,471.9 596.2,472.4 594.1,472.6 591.9,472.4 589.6,471.9 587.3,471.1 585.0,470.0 582.7,468.6 580.5,466.9 578.4,465.0 576.5,462.9 574.8,460.6 573.2,458.1 571.9,455.6 570.9,453.0 570.2,450.5 569.7,448.0 569.6,445.5 569.7,443.2 570.2,441.1 570.9,439.1 571.9,437.4 573.2,436.0 574.8,434.8 576.5,434.0 578.4,433.5 580.5,433.3 582.7,433.4 585.0,433.9 587.3,434.7 589.6,435.8 591.9,437.3 594.1,438.9 596.2,440.9 598.1,443.0 599.9,445.3 601.4,447.7 602.7,450.2 603.7,452.8 604.5,455.4 604.9,457.9" fill="#a6906a" stroke="none" stroke-width="0" stroke-linejoin="round" />
<polygon points="594.5,464.0 594.4,465.8 594.0,467.5 593.5,469.0 592.7,470.4 591.6,471.5 590.4,472.4 589.1,473.1 587.6,473.5 585.9,473.6 584.2,473.5 582.4,473.1 580.6,472.5 578.8,471.6 577.0,470.5 575.3,469.2 573.6,467.7 572.1,466.0 570.8,464.2 569.6,462.3 568.5,460.3 567.7,458.3 567.2,456.3 566.8,454.3 566.7,452.4 566.8,450.6 567.2,448.9 567.7,447.4 568.5,446.0 569.6,444.9 570.8,444.0 572.1,443.3 573.6,442.9 575.3,442.8 577.0,442.9 578.8,443.3 580.6,443.9 582.4,444.8 584.2,445.9 585.9,447.2 587.6,448.7 589.1,450.4 590.4,452.2 591.6,454.1 592.7,456.1 593.5,458.1 594.0,460.1 594.4,462.1" fill="#fff" stroke="none" stroke-width="0" stroke-linejoin="round" />
<polygon points="585.4,460.4 598.7,470.7 597.5,473.4 584.4,462.8" fill="#dac8a4" stroke="#1d160f" stroke-width="0.875" stroke-linejoin="round" />
<polygon points="584.4,462.8 592.4,478.0 589.6,478.8 581.9,463.5" fill="#dac8a4" stroke="#1d160f" stroke-width="0.875" stroke-linejoin="round" />
<polygon points="581.9,463.5 581.6,477.8 578.3,476.3 579.0,462.1" fill="#dac8a4" stroke="#1d160f" stroke-width="0.875" stroke-linejoin="round" />
<polygon points="579.0,462.1 570.4,470.1 567.8,466.9 576.6,459.3" fill="#dac8a4" stroke="#1d160f" stroke-width="0.875" stroke-linejoin="round" />
<polygon points="576.6,459.3 563.1,457.8 562.2,454.2 575.8,456.0" fill="#dac8a4" stroke="#1d160f" stroke-width="0.875" stroke-linejoin="round" />
<polygon points="575.8,456.0 562.5,445.7 563.7,443.0 576.8,453.6" fill="#dac8a4" stroke="#1d160f" stroke-width="0.875" stroke-linejoin="round" />
<polygon points="576.8,453.6 568.8,438.4 571.6,437.6 579.3,452.9" fill="#dac8a4" stroke="#1d160f" stroke-width="0.875" stroke-linejoin="round" />
<polygon points="579.3,452.9 579.6,438.6 582.9,440.1 582.2,454.3" fill="#dac8a4" stroke="#1d160f" stroke-width="0.875" stroke-linejoin="round" />
<polygon points="582.2,454.3 590.8,446.3 593.4,449.5 584.6,457.1" fill="#dac8a4" stroke="#1d160f" stroke-width="0.875" stroke-linejoin="round" />
<polygon points="584.6,457.1 598.1,458.6 599.0,462.2 585.4,460.4" fill="#dac8a4" stroke="#1d160f" stroke-width="0.875" stroke-linejoin="round" />
<path d="M604.6,468.2 L604.4,471.3 L603.8,474.2 L602.8,476.9 L601.4,479.2 L599.6,481.1 L597.6,482.7 L595.2,483.8 L592.6,484.5 L589.8,484.8 L586.8,484.5 L583.7,483.9 L580.6,482.8 L577.5,481.3 L574.4,479.4 L571.4,477.1 L568.6,474.5 L566.0,471.6 L563.6,468.5 L561.6,465.2 L559.8,461.8 L558.4,458.4 L557.4,454.9 L556.8,451.5 L556.6,448.2 L556.8,445.1 L557.4,442.2 L558.4,439.5 L559.8,437.2 L561.6,435.3 L563.6,433.7 L566.0,432.6 L568.6,431.9 L571.4,431.6 L574.4,431.9 L577.5,432.5 L580.6,433.6 L583.7,435.1 L586.8,437.0 L589.8,439.3 L592.6,441.9 L595.2,444.8 L597.6,447.9 L599.6,451.2 L601.4,454.6 L602.8,458.0 L603.8,461.5 L604.4,464.9Z M598.2,463.2 L597.8,460.6 L597.0,458.1 L596.0,455.5 L594.7,453.0 L593.2,450.6 L591.4,448.3 L589.5,446.1 L587.4,444.2 L585.2,442.5 L582.9,441.1 L580.6,440.0 L578.3,439.2 L576.0,438.7 L573.8,438.5 L571.7,438.7 L569.8,439.3 L568.0,440.1 L566.5,441.2 L565.2,442.7 L564.2,444.4 L563.4,446.3 L563.0,448.5 L562.8,450.8 L563.0,453.2 L563.4,455.8 L564.2,458.3 L565.2,460.9 L566.5,463.4 L568.0,465.8 L569.8,468.1 L571.7,470.3 L573.8,472.2 L576.0,473.9 L578.3,475.3 L580.6,476.4 L582.9,477.2 L585.2,477.7 L587.4,477.9 L589.5,477.7 L591.4,477.1 L593.2,476.3 L594.7,475.2 L596.0,473.7 L597.0,472.0 L597.8,470.1 L598.2,467.9 L598.4,465.6Z" fill="#dac8a4" stroke="#1d160f" stroke-width="1.2249999999999999" fill-rule="evenodd"/>
<polygon points="587.8,461.2 587.7,462.1 587.6,463.0 587.3,463.8 586.8,464.5 586.3,465.1 585.7,465.5 585.0,465.9 584.2,466.1 583.4,466.2 582.5,466.1 581.5,465.9 580.6,465.6 579.7,465.1 578.7,464.6 577.8,463.9 577.0,463.1 576.2,462.2 575.5,461.3 574.9,460.3 574.4,459.3 573.9,458.3 573.6,457.2 573.5,456.2 573.4,455.2 573.5,454.3 573.6,453.4 573.9,452.6 574.4,451.9 574.9,451.3 575.5,450.9 576.2,450.5 577.0,450.3 577.8,450.2 578.7,450.3 579.7,450.5 580.6,450.8 581.5,451.3 582.5,451.8 583.4,452.5 584.2,453.3 585.0,454.2 585.7,455.1 586.3,456.1 586.8,457.1 587.3,458.1 587.6,459.2 587.7,460.2" fill="#dac8a4" stroke="#1d160f" stroke-width="1.05" stroke-linejoin="round" />
<polygon points="584.4,459.8 584.4,460.3 584.3,460.8 584.1,461.2 583.9,461.6 583.6,461.9 583.3,462.1 582.9,462.3 582.5,462.4 582.1,462.4 581.6,462.4 581.1,462.3 580.6,462.1 580.1,461.9 579.6,461.6 579.1,461.2 578.7,460.8 578.3,460.3 577.9,459.9 577.6,459.3 577.3,458.8 577.1,458.2 576.9,457.7 576.8,457.1 576.8,456.6 576.8,456.1 576.9,455.6 577.1,455.2 577.3,454.8 577.6,454.5 577.9,454.3 578.3,454.1 578.7,454.0 579.1,454.0 579.6,454.0 580.1,454.1 580.6,454.3 581.1,454.5 581.6,454.8 582.1,455.2 582.5,455.6 582.9,456.1 583.3,456.5 583.6,457.1 583.9,457.6 584.1,458.2 584.3,458.7 584.4,459.3" fill="#c4af89" stroke="#1d160f" stroke-width="1.05" stroke-linejoin="round" />
<polygon points="691.5,502.5 691.3,505.4 690.6,508.1 689.4,510.5 687.9,512.5 685.9,514.2 683.6,515.5 680.9,516.4 678.0,516.9 674.8,517.0 671.5,516.6 668.0,515.7 664.5,514.5 661.0,512.9 657.5,510.9 654.2,508.5 651.0,505.9 648.1,503.1 645.4,500.0 643.1,496.8 641.1,493.5 639.6,490.1 638.4,486.8 637.7,483.6 637.5,480.5 637.7,477.6 638.4,474.9 639.6,472.5 641.1,470.5 643.1,468.8 645.4,467.5 648.1,466.6 651.0,466.1 654.2,466.0 657.5,466.4 661.0,467.3 664.5,468.5 668.0,470.1 671.5,472.1 674.8,474.5 678.0,477.1 680.9,479.9 683.6,483.0 685.9,486.2 687.9,489.5 689.4,492.9 690.6,496.2 691.3,499.4" fill="#c4af89" stroke="#1d160f" stroke-width="1.2249999999999999" stroke-linejoin="round" />
<polygon points="689.2,504.2 689.0,507.2 688.3,509.8 687.2,512.2 685.6,514.3 683.7,516.0 681.3,517.3 678.7,518.2 675.8,518.7 672.6,518.7 669.2,518.3 665.8,517.5 662.2,516.2 658.7,514.6 655.3,512.6 651.9,510.3 648.8,507.7 645.8,504.8 643.2,501.7 640.8,498.5 638.9,495.2 637.3,491.9 636.2,488.6 635.5,485.3 635.2,482.2 635.5,479.3 636.2,476.7 637.3,474.3 638.9,472.2 640.8,470.5 643.2,469.2 645.8,468.3 648.8,467.8 651.9,467.8 655.3,468.2 658.7,469.0 662.2,470.2 665.8,471.9 669.2,473.9 672.6,476.2 675.8,478.8 678.7,481.7 681.3,484.8 683.7,488.0 685.6,491.3 687.2,494.6 688.3,497.9 689.0,501.2" fill="#dac8a4" stroke="#1d160f" stroke-width="1.05" stroke-linejoin="round" />
<polygon points="687.0,506.0 686.8,508.9 686.1,511.6 684.9,514.0 683.4,516.0 681.4,517.7 679.1,519.0 676.4,519.9 673.5,520.4 670.3,520.5 667.0,520.1 663.5,519.2 660.0,518.0 656.5,516.4 653.0,514.4 649.7,512.0 646.5,509.4 643.6,506.6 640.9,503.5 638.6,500.3 636.6,497.0 635.1,493.6 633.9,490.3 633.2,487.1 633.0,484.0 633.2,481.1 633.9,478.4 635.1,476.0 636.6,474.0 638.6,472.3 640.9,471.0 643.6,470.1 646.5,469.6 649.7,469.5 653.0,469.9 656.5,470.8 660.0,472.0 663.5,473.6 667.0,475.6 670.3,478.0 673.5,480.6 676.4,483.4 679.1,486.5 681.4,489.7 683.4,493.0 684.9,496.4 686.1,499.7 686.8,502.9" fill="#dac8a4" stroke="#1d160f" stroke-width="1.2249999999999999" stroke-linejoin="round" />
<polygon points="680.0,503.1 679.8,505.3 679.3,507.3 678.5,509.0 677.3,510.6 675.9,511.8 674.1,512.8 672.2,513.5 670.0,513.8 667.6,513.8 665.2,513.5 662.6,512.9 660.0,512.0 657.4,510.8 654.8,509.3 652.4,507.6 650.0,505.7 647.8,503.5 645.9,501.3 644.1,498.9 642.7,496.5 641.5,494.0 640.7,491.5 640.2,489.2 640.0,486.9 640.2,484.7 640.7,482.7 641.5,481.0 642.7,479.4 644.1,478.2 645.9,477.2 647.8,476.5 650.0,476.2 652.4,476.2 654.8,476.5 657.4,477.1 660.0,478.0 662.6,479.2 665.2,480.7 667.6,482.4 670.0,484.3 672.2,486.5 674.1,488.7 675.9,491.1 677.3,493.5 678.5,496.0 679.3,498.5 679.8,500.8" fill="#fff" stroke="none" stroke-width="0" stroke-linejoin="round" />
<polygon points="683.6,500.3 683.4,502.5 682.9,504.5 682.1,506.2 680.9,507.8 679.5,509.0 677.7,510.0 675.8,510.7 673.6,511.0 671.2,511.0 668.8,510.7 666.2,510.1 663.6,509.2 661.0,508.0 658.4,506.5 656.0,504.8 653.6,502.9 651.4,500.7 649.5,498.5 647.7,496.1 646.3,493.7 645.1,491.2 644.3,488.7 643.8,486.4 643.6,484.1 643.8,481.9 644.3,479.9 645.1,478.2 646.3,476.6 647.7,475.4 649.5,474.4 651.4,473.7 653.6,473.4 656.0,473.4 658.4,473.7 661.0,474.3 663.6,475.2 666.2,476.4 668.8,477.9 671.2,479.6 673.6,481.5 675.8,483.7 677.7,485.9 679.5,488.3 680.9,490.7 682.1,493.2 682.9,495.7 683.4,498.0" fill="#a6906a" stroke="none" stroke-width="0" stroke-linejoin="round" />
<polygon points="675.7,501.4 675.5,503.1 675.1,504.6 674.5,506.0 673.6,507.2 672.4,508.2 671.1,508.9 669.5,509.5 667.8,509.7 666.0,509.8 664.1,509.5 662.0,509.1 660.0,508.3 658.0,507.4 655.9,506.2 654.0,504.9 652.2,503.4 650.5,501.7 648.9,499.9 647.6,498.1 646.4,496.1 645.5,494.2 644.9,492.3 644.5,490.4 644.3,488.6 644.5,486.9 644.9,485.4 645.5,484.0 646.4,482.8 647.6,481.8 648.9,481.1 650.5,480.5 652.2,480.3 654.0,480.2 655.9,480.5 658.0,480.9 660.0,481.7 662.0,482.6 664.1,483.8 666.0,485.1 667.8,486.6 669.5,488.3 671.1,490.1 672.4,491.9 673.6,493.9 674.5,495.8 675.1,497.7 675.5,499.6" fill="#fff" stroke="none" stroke-width="0" stroke-linejoin="round" />
<polygon points="665.4,497.4 680.4,507.9 679.1,510.4 664.3,499.6" fill="#dac8a4" stroke="#1d160f" stroke-width="0.875" stroke-linejoin="round" />
<polygon points="664.3,499.6 673.3,514.3 670.2,514.9 661.5,500.0" fill="#dac8a4" stroke="#1d160f" stroke-width="0.875" stroke-linejoin="round" />
<polygon points="661.5,500.0 661.2,513.4 657.4,511.7 658.1,498.6" fill="#dac8a4" stroke="#1d160f" stroke-width="0.875" stroke-linejoin="round" />
<polygon points="658.2,498.6 648.6,505.4 645.6,502.2 655.5,495.7" fill="#dac8a4" stroke="#1d160f" stroke-width="0.875" stroke-linejoin="round" />
<polygon points="655.5,495.8 640.4,493.5 639.3,490.0 654.6,492.6" fill="#dac8a4" stroke="#1d160f" stroke-width="0.875" stroke-linejoin="round" />
<polygon points="654.6,492.6 639.6,482.1 640.9,479.6 655.7,490.4" fill="#dac8a4" stroke="#1d160f" stroke-width="0.875" stroke-linejoin="round" />
<polygon points="655.7,490.4 646.7,475.7 649.8,475.1 658.5,490.0" fill="#dac8a4" stroke="#1d160f" stroke-width="0.875" stroke-linejoin="round" />
<polygon points="658.5,490.0 658.8,476.6 662.6,478.3 661.9,491.4" fill="#dac8a4" stroke="#1d160f" stroke-width="0.875" stroke-linejoin="round" />
<polygon points="661.8,491.4 671.4,484.6 674.4,487.8 664.5,494.3" fill="#dac8a4" stroke="#1d160f" stroke-width="0.875" stroke-linejoin="round" />
<polygon points="664.5,494.2 679.6,496.5 680.7,500.0 665.4,497.4" fill="#dac8a4" stroke="#1d160f" stroke-width="0.875" stroke-linejoin="round" />
<path d="M687.0,506.0 L686.8,508.9 L686.1,511.6 L684.9,514.0 L683.4,516.0 L681.4,517.7 L679.1,519.0 L676.4,519.9 L673.5,520.4 L670.3,520.5 L667.0,520.1 L663.5,519.2 L660.0,518.0 L656.5,516.4 L653.0,514.4 L649.7,512.0 L646.5,509.4 L643.6,506.6 L640.9,503.5 L638.6,500.3 L636.6,497.0 L635.1,493.6 L633.9,490.3 L633.2,487.1 L633.0,484.0 L633.2,481.1 L633.9,478.4 L635.1,476.0 L636.6,474.0 L638.6,472.3 L640.9,471.0 L643.6,470.1 L646.5,469.6 L649.7,469.5 L653.0,469.9 L656.5,470.8 L660.0,472.0 L663.5,473.6 L667.0,475.6 L670.3,478.0 L673.5,480.6 L676.4,483.4 L679.1,486.5 L681.4,489.7 L683.4,493.0 L684.9,496.4 L686.1,499.7 L686.8,502.9Z M679.8,500.8 L679.3,498.5 L678.5,496.0 L677.3,493.5 L675.9,491.1 L674.1,488.7 L672.2,486.5 L670.0,484.3 L667.6,482.4 L665.2,480.7 L662.6,479.2 L660.0,478.0 L657.4,477.1 L654.8,476.5 L652.4,476.2 L650.0,476.2 L647.8,476.5 L645.9,477.2 L644.1,478.2 L642.7,479.4 L641.5,481.0 L640.7,482.7 L640.2,484.7 L640.0,486.9 L640.2,489.2 L640.7,491.5 L641.5,494.0 L642.7,496.5 L644.1,498.9 L645.9,501.3 L647.8,503.5 L650.0,505.7 L652.4,507.6 L654.8,509.3 L657.4,510.8 L660.0,512.0 L662.6,512.9 L665.2,513.5 L667.6,513.8 L670.0,513.8 L672.2,513.5 L674.1,512.8 L675.9,511.8 L677.3,510.6 L678.5,509.0 L679.3,507.3 L679.8,505.3 L680.0,503.1Z" fill="#dac8a4" stroke="#1d160f" stroke-width="1.2249999999999999" fill-rule="evenodd"/>
<polygon points="668.1,498.3 668.0,499.2 667.8,500.0 667.5,500.7 667.0,501.3 666.4,501.8 665.7,502.2 664.9,502.5 664.0,502.6 663.1,502.6 662.1,502.5 661.1,502.3 660.0,501.9 658.9,501.4 657.9,500.8 656.9,500.1 656.0,499.3 655.1,498.5 654.3,497.5 653.6,496.6 653.0,495.6 652.5,494.6 652.2,493.6 652.0,492.6 651.9,491.7 652.0,490.8 652.2,490.0 652.5,489.3 653.0,488.7 653.6,488.2 654.3,487.8 655.1,487.5 656.0,487.4 656.9,487.4 657.9,487.5 658.9,487.7 660.0,488.1 661.1,488.6 662.1,489.2 663.1,489.9 664.0,490.7 664.9,491.5 665.7,492.5 666.4,493.4 667.0,494.4 667.5,495.4 667.8,496.4 668.0,497.4" fill="#dac8a4" stroke="#1d160f" stroke-width="1.05" stroke-linejoin="round" />
<polygon points="664.3,496.8 664.3,497.2 664.2,497.7 664.0,498.0 663.7,498.4 663.4,498.6 663.1,498.8 662.6,499.0 662.2,499.1 661.7,499.1 661.1,499.0 660.6,498.9 660.0,498.7 659.4,498.4 658.9,498.1 658.3,497.7 657.8,497.3 657.4,496.8 656.9,496.4 656.6,495.8 656.3,495.3 656.0,494.8 655.8,494.3 655.7,493.7 655.7,493.2 655.7,492.8 655.8,492.3 656.0,492.0 656.3,491.6 656.6,491.4 656.9,491.2 657.4,491.0 657.8,490.9 658.3,490.9 658.9,491.0 659.4,491.1 660.0,491.3 660.6,491.6 661.1,491.9 661.7,492.3 662.2,492.7 662.6,493.2 663.1,493.6 663.4,494.2 663.7,494.7 664.0,495.2 664.2,495.7 664.3,496.3" fill="#c4af89" stroke="#1d160f" stroke-width="1.05" stroke-linejoin="round" />
<polygon points="540.0,414.3 692.5,477.8 692.5,492.5 540.0,430.2" fill="#9a8661" stroke="none" stroke-width="0" stroke-linejoin="round" />
<polygon points="596.0,439.6 692.5,479.7 692.5,487.0 596.0,447.3" fill="#6f5f44" stroke="none" stroke-width="0" stroke-linejoin="round" />
<polygon points="590.0,446.0 598.0,442.0 684.0,480.6 684.0,487.0 590.0,452.0" fill="#c3a879" stroke="#1d160f" stroke-width="0.875" stroke-linejoin="round" />
<polygon points="533.3,428.4 692.5,493.3 692.5,498.9 533.3,434.5" fill="#c3a879" stroke="#1d160f" stroke-width="1.05" stroke-linejoin="round" />
<polygon points="533.3,428.4 537.3,427.6 692.5,491.1 692.5,493.3" fill="#e0cca3" stroke="#1d160f" stroke-width="0.875" stroke-linejoin="round" />
<polygon points="692.5,493.4 781.5,412.5 781.5,418.7 692.5,499.8" fill="#c3a879" stroke="#1d160f" stroke-width="1.05" stroke-linejoin="round" />
<polygon points="696.5,473.8 781.5,397.1 781.5,402.8 696.5,479.7" fill="#d5bb8b" stroke="#1d160f" stroke-width="1.05" stroke-linejoin="round" />
<polygon points="696.5,479.7 781.5,402.8 781.5,407.8 696.5,484.8" fill="#a48b60" stroke="#1d160f" stroke-width="1.05" stroke-linejoin="round" />
<polygon points="620.9,291.9 776.2,365.4 776.2,397.4 620.9,328.9" fill="#d5bb8b" stroke="#1d160f" stroke-width="1.2249999999999999" stroke-linejoin="round" />
<polygon points="620.9,291.9 626.6,286.2 781.5,360.6 776.2,365.4" fill="#e0cca3" stroke="#1d160f" stroke-width="1.05" stroke-linejoin="round" />
<polyline points="620.9,300.9 776.2,373.5" fill="none" stroke="#1d160f" stroke-width="0.875" stroke-linecap="round" stroke-linejoin="round" />
<polyline points="620.9,309.9 776.2,381.6" fill="none" stroke="#1d160f" stroke-width="0.875" stroke-linecap="round" stroke-linejoin="round" />
<polyline points="620.9,318.9 776.2,389.7" fill="none" stroke="#1d160f" stroke-width="0.875" stroke-linecap="round" stroke-linejoin="round" />
<polygon points="569.0,378.0 621.6,328.6 781.0,397.0 692.5,471.0" fill="#d5bb8b" stroke="#1d160f" stroke-width="0.875" stroke-linejoin="round" />
<polyline points="576.5,370.9 656.5,406.1" fill="none" stroke="#1d160f" stroke-width="0.875" stroke-linecap="round" stroke-linejoin="round" />
<polyline points="584.0,363.9 664.0,399.1" fill="none" stroke="#1d160f" stroke-width="0.875" stroke-linecap="round" stroke-linejoin="round" />
<polyline points="591.5,356.8 671.5,392.0" fill="none" stroke="#1d160f" stroke-width="0.875" stroke-linecap="round" stroke-linejoin="round" />
<polyline points="599.1,349.8 679.1,385.0" fill="none" stroke="#1d160f" stroke-width="0.875" stroke-linecap="round" stroke-linejoin="round" />
<polyline points="606.6,342.7 686.6,377.9" fill="none" stroke="#1d160f" stroke-width="0.875" stroke-linecap="round" stroke-linejoin="round" />
<polyline points="614.1,335.7 694.1,370.9" fill="none" stroke="#1d160f" stroke-width="0.875" stroke-linecap="round" stroke-linejoin="round" />
<polygon points="660.0,424.0 752.0,351.0 776.0,365.6 690.0,434.0" fill="#c3a879" stroke="#1d160f" stroke-width="0.875" stroke-linejoin="round" />
<polyline points="758.0,354.6 667.5,426.5" fill="none" stroke="#1d160f" stroke-width="0.875" stroke-linecap="round" stroke-linejoin="round" />
<polyline points="764.0,358.3 675.0,429.0" fill="none" stroke="#1d160f" stroke-width="0.875" stroke-linecap="round" stroke-linejoin="round" />
<polyline points="770.0,362.0 682.5,431.5" fill="none" stroke="#1d160f" stroke-width="0.875" stroke-linecap="round" stroke-linejoin="round" />
<polygon points="660.0,424.0 700.0,390.0 716.0,396.0 712.0,410.0 690.0,434.0" fill="#8b7d62" stroke="none" stroke-width="0" stroke-linejoin="round" />
<polygon points="700.0,390.0 728.0,366.0 734.0,380.0 716.0,396.0" fill="#a39476" stroke="none" stroke-width="0" stroke-linejoin="round" />
<polygon points="566.6,376.6 619.4,328.4 627.6,332.4 576.0,379.6" fill="#e0cca3" stroke="#1d160f" stroke-width="1.2249999999999999" stroke-linejoin="round" />
<polygon points="571.6,378.4 624.0,330.6 624.0,334.0 574.6,381.0" fill="#c3a879" stroke="#1d160f" stroke-width="0.875" stroke-linejoin="round" />
<polygon points="533.3,375.5 692.5,444.9 692.5,474.1 533.3,407.4" fill="#d5bb8b" stroke="#1d160f" stroke-width="1.05" stroke-linejoin="round" />
<polyline points="536.3,386.4 689.5,452.4" fill="none" stroke="#1d160f" stroke-width="0.875" stroke-linecap="round" stroke-linejoin="round" />
<polyline points="536.3,396.2 689.5,461.4" fill="none" stroke="#1d160f" stroke-width="0.875" stroke-linecap="round" stroke-linejoin="round" />
<polygon points="536.3,377.2 541.9,379.6 541.9,411.0 536.3,408.7" fill="#e0cca3" stroke="#1d160f" stroke-width="1.05" stroke-linejoin="round" />
<polygon points="541.9,379.8 544.1,379.8 544.1,410.0 541.9,411.0" fill="#a48b60" stroke="#1d160f" stroke-width="0.7000000000000001" stroke-linejoin="round" />
<polygon points="560.5,387.7 566.1,390.2 566.1,421.1 560.5,418.8" fill="#e0cca3" stroke="#1d160f" stroke-width="1.05" stroke-linejoin="round" />
<polygon points="566.1,390.4 568.3,390.4 568.3,420.2 566.1,421.1" fill="#a48b60" stroke="#1d160f" stroke-width="0.7000000000000001" stroke-linejoin="round" />
<polygon points="584.7,398.3 590.3,400.7 590.3,431.3 584.7,428.9" fill="#e0cca3" stroke="#1d160f" stroke-width="1.05" stroke-linejoin="round" />
<polygon points="590.3,400.9 592.5,400.9 592.5,430.4 590.3,431.3" fill="#a48b60" stroke="#1d160f" stroke-width="0.7000000000000001" stroke-linejoin="round" />
<polygon points="608.9,408.8 614.5,411.3 614.5,441.4 608.9,439.1" fill="#e0cca3" stroke="#1d160f" stroke-width="1.05" stroke-linejoin="round" />
<polygon points="614.5,411.5 616.7,411.5 616.7,440.5 614.5,441.4" fill="#a48b60" stroke="#1d160f" stroke-width="0.7000000000000001" stroke-linejoin="round" />
<polygon points="633.1,419.4 638.7,421.8 638.7,451.5 633.1,449.2" fill="#e0cca3" stroke="#1d160f" stroke-width="1.05" stroke-linejoin="round" />
<polygon points="638.7,422.0 640.9,422.0 640.9,450.7 638.7,451.5" fill="#a48b60" stroke="#1d160f" stroke-width="0.7000000000000001" stroke-linejoin="round" />
<polygon points="657.3,429.9 662.9,432.4 662.9,461.7 657.3,459.3" fill="#e0cca3" stroke="#1d160f" stroke-width="1.05" stroke-linejoin="round" />
<polygon points="662.9,432.5 665.1,432.6 665.1,460.8 662.9,461.7" fill="#a48b60" stroke="#1d160f" stroke-width="0.7000000000000001" stroke-linejoin="round" />
<polygon points="680.6,440.1 686.2,442.5 686.2,471.4 680.6,469.1" fill="#e0cca3" stroke="#1d160f" stroke-width="1.05" stroke-linejoin="round" />
<polygon points="686.2,442.7 688.4,442.7 688.4,470.6 686.2,471.4" fill="#a48b60" stroke="#1d160f" stroke-width="0.7000000000000001" stroke-linejoin="round" />
<polygon points="536.3,412.7 541.9,415.1 541.9,431.9 536.3,429.6" fill="#d5bb8b" stroke="#1d160f" stroke-width="1.05" stroke-linejoin="round" />
<polygon points="584.7,432.9 590.3,435.2 590.3,451.6 584.7,449.4" fill="#d5bb8b" stroke="#1d160f" stroke-width="1.05" stroke-linejoin="round" />
<polygon points="633.1,453.1 638.7,455.4 638.7,471.4 633.1,469.1" fill="#d5bb8b" stroke="#1d160f" stroke-width="1.05" stroke-linejoin="round" />
<polygon points="680.6,472.9 686.2,475.2 686.2,490.7 680.6,488.4" fill="#d5bb8b" stroke="#1d160f" stroke-width="1.05" stroke-linejoin="round" />
<polygon points="533.3,407.4 692.5,474.1 692.5,478.4 533.3,412.1" fill="#c3a879" stroke="#1d160f" stroke-width="1.05" stroke-linejoin="round" />
<polygon points="533.3,407.4 537.3,406.7 692.5,471.9 692.5,474.1" fill="#e0cca3" stroke="#1d160f" stroke-width="0.875" stroke-linejoin="round" />
<polygon points="533.3,369.5 692.5,439.4 692.5,445.3 533.3,376.0" fill="#d5bb8b" stroke="#1d160f" stroke-width="1.2249999999999999" stroke-linejoin="round" />
<polygon points="533.3,369.5 538.5,364.9 697.1,435.2 692.5,439.4" fill="#e0cca3" stroke="#1d160f" stroke-width="1.2249999999999999" stroke-linejoin="round" />
<polygon points="692.5,444.9 781.5,365.9 781.5,394.0 692.5,474.2" fill="#d5bb8b" stroke="#1d160f" stroke-width="1.05" stroke-linejoin="round" />
<polyline points="692.5,452.2 781.5,372.9" fill="none" stroke="#1d160f" stroke-width="0.875" stroke-linecap="round" stroke-linejoin="round" />
<polyline points="692.5,459.9 781.5,380.3" fill="none" stroke="#1d160f" stroke-width="0.875" stroke-linecap="round" stroke-linejoin="round" />
<polyline points="692.5,467.2 781.5,387.4" fill="none" stroke="#1d160f" stroke-width="0.875" stroke-linecap="round" stroke-linejoin="round" />
<polygon points="692.5,439.4 781.5,360.6 781.5,366.1 692.5,445.1" fill="#d5bb8b" stroke="#1d160f" stroke-width="1.2249999999999999" stroke-linejoin="round" />
<polygon points="692.5,439.4 687.3,435.0 776.3,356.2 781.5,360.6" fill="#e0cca3" stroke="#1d160f" stroke-width="1.2249999999999999" stroke-linejoin="round" />
<polygon points="692.5,439.4 697.1,435.2 691.9,430.8 687.3,435.0" fill="#e0cca3" stroke="#1d160f" stroke-width="1.05" stroke-linejoin="round" />
<polygon points="681.0,473.0 692.5,477.8 692.5,499.8 681.0,495.1" fill="#e0cca3" stroke="#1d160f" stroke-width="1.05" stroke-linejoin="round" />
<polygon points="692.5,439.4 696.7,435.6 696.7,497.0 692.5,500.8" fill="#c3a879" stroke="#1d160f" stroke-width="1.05" stroke-linejoin="round" />
<polygon points="777.0,364.6 781.5,360.6 781.5,420.2 777.0,424.2" fill="#c3a879" stroke="#1d160f" stroke-width="1.05" stroke-linejoin="round" />
<polygon points="611.0,451.4 632.0,460.8 632.0,463.8 611.0,454.4" fill="#ffffff" stroke="none" stroke-width="0" stroke-linejoin="round" />
<polygon points="551.0,423.4 562.0,428.4 562.0,431.8 551.0,426.8" fill="#ffffff" stroke="none" stroke-width="0" stroke-linejoin="round" />
<polygon points="568.0,423.0 575.2,422.4 575.6,445.6 588.6,452.6 590.2,457.0 582.2,456.6 582.0,471.6 575.0,476.2 564.0,471.0 561.0,447.6 554.0,440.0 555.0,437.2 568.2,441.0" fill="#43342a" stroke="#1d160f" stroke-width="1.2249999999999999" stroke-linejoin="round" />
<polygon points="568.4,424.6 575.0,423.6 575.2,474.6 568.6,472.0" fill="#33271e" stroke="none" stroke-width="0" stroke-linejoin="round" />
<polygon points="566.2,461.6 574.0,465.0 574.0,473.0 566.2,469.6" fill="#d5bb8b" stroke="#1d160f" stroke-width="1.05" stroke-linejoin="round" />
<polygon points="569.2,452.6 573.0,454.2 573.0,461.2 569.2,459.6" fill="#e0cca3" stroke="#1d160f" stroke-width="0.875" stroke-linejoin="round" />
<circle cx="567.6" cy="464.0" r="0.55" fill="#2a2118"/>
<circle cx="572.8" cy="466.4" r="0.55" fill="#2a2118"/>
<circle cx="567.6" cy="468.2" r="0.55" fill="#2a2118"/>
<circle cx="572.8" cy="470.6" r="0.55" fill="#2a2118"/>
<circle cx="560.6" cy="442.2" r="0.8" fill="#150f09"/>
<circle cx="583.6" cy="453.2" r="0.8" fill="#150f09"/>
<polygon points="550.8,438.6 550.8,438.9 550.7,439.3 550.6,439.5 550.5,439.8 550.3,440.1 550.2,440.3 549.9,440.4 549.7,440.6 549.4,440.6 549.2,440.7 548.9,440.7 548.6,440.6 548.3,440.5 548.0,440.4 547.8,440.2 547.5,440.0 547.3,439.7 547.0,439.4 546.9,439.1 546.7,438.8 546.6,438.4 546.5,438.1 546.4,437.7 546.4,437.4 546.4,437.1 546.5,436.7 546.6,436.5 546.7,436.2 546.9,435.9 547.0,435.7 547.3,435.6 547.5,435.4 547.8,435.4 548.0,435.3 548.3,435.3 548.6,435.4 548.9,435.5 549.2,435.6 549.4,435.8 549.7,436.0 549.9,436.3 550.2,436.6 550.3,436.9 550.5,437.2 550.6,437.6 550.7,437.9 550.8,438.3" fill="#d5bb8b" stroke="#1d160f" stroke-width="1.05" stroke-linejoin="round" />
<polygon points="596.2,458.6 596.2,458.9 596.1,459.3 596.0,459.5 595.9,459.8 595.7,460.1 595.6,460.3 595.3,460.4 595.1,460.6 594.8,460.6 594.6,460.7 594.3,460.7 594.0,460.6 593.7,460.5 593.4,460.4 593.2,460.2 592.9,460.0 592.7,459.7 592.4,459.4 592.3,459.1 592.1,458.8 592.0,458.4 591.9,458.1 591.8,457.7 591.8,457.4 591.8,457.1 591.9,456.7 592.0,456.5 592.1,456.2 592.3,455.9 592.4,455.7 592.7,455.6 592.9,455.4 593.2,455.4 593.4,455.3 593.7,455.3 594.0,455.4 594.3,455.5 594.6,455.6 594.8,455.8 595.1,456.0 595.3,456.3 595.6,456.6 595.7,456.9 595.9,457.2 596.0,457.6 596.1,457.9 596.2,458.3" fill="#d5bb8b" stroke="#1d160f" stroke-width="1.05" stroke-linejoin="round" />
<polygon points="644.0,458.0 651.2,457.4 651.6,480.6 664.6,487.6 666.2,492.0 658.2,491.6 658.0,509.6 651.0,514.2 640.0,509.0 637.0,482.6 630.0,475.0 631.0,472.2 644.2,476.0" fill="#43342a" stroke="#1d160f" stroke-width="1.2249999999999999" stroke-linejoin="round" />
<polygon points="644.4,459.6 651.0,458.6 651.2,512.6 644.6,510.0" fill="#33271e" stroke="none" stroke-width="0" stroke-linejoin="round" />
<polygon points="642.2,496.6 650.0,500.0 650.0,508.0 642.2,504.6" fill="#d5bb8b" stroke="#1d160f" stroke-width="1.05" stroke-linejoin="round" />
<polygon points="645.2,487.6 649.0,489.2 649.0,496.2 645.2,494.6" fill="#e0cca3" stroke="#1d160f" stroke-width="0.875" stroke-linejoin="round" />
<circle cx="643.6" cy="499.0" r="0.55" fill="#2a2118"/>
<circle cx="648.8" cy="501.4" r="0.55" fill="#2a2118"/>
<circle cx="643.6" cy="503.2" r="0.55" fill="#2a2118"/>
<circle cx="648.8" cy="505.6" r="0.55" fill="#2a2118"/>
<circle cx="636.6" cy="477.2" r="0.8" fill="#150f09"/>
<circle cx="659.6" cy="488.2" r="0.8" fill="#150f09"/>
<polygon points="626.8,473.6 626.8,473.9 626.7,474.3 626.6,474.5 626.5,474.8 626.3,475.1 626.2,475.3 625.9,475.4 625.7,475.6 625.4,475.6 625.2,475.7 624.9,475.7 624.6,475.6 624.3,475.5 624.0,475.4 623.8,475.2 623.5,475.0 623.3,474.7 623.0,474.4 622.9,474.1 622.7,473.8 622.6,473.4 622.5,473.1 622.4,472.7 622.4,472.4 622.4,472.1 622.5,471.7 622.6,471.5 622.7,471.2 622.9,470.9 623.0,470.7 623.3,470.6 623.5,470.4 623.8,470.4 624.0,470.3 624.3,470.3 624.6,470.4 624.9,470.5 625.2,470.6 625.4,470.8 625.7,471.0 625.9,471.3 626.2,471.6 626.3,471.9 626.5,472.2 626.6,472.6 626.7,472.9 626.8,473.3" fill="#d5bb8b" stroke="#1d160f" stroke-width="1.05" stroke-linejoin="round" />
<polygon points="672.2,493.6 672.2,493.9 672.1,494.3 672.0,494.5 671.9,494.8 671.7,495.1 671.6,495.3 671.3,495.4 671.1,495.6 670.8,495.6 670.6,495.7 670.3,495.7 670.0,495.6 669.7,495.5 669.4,495.4 669.2,495.2 668.9,495.0 668.7,494.7 668.4,494.4 668.3,494.1 668.1,493.8 668.0,493.4 667.9,493.1 667.8,492.7 667.8,492.4 667.8,492.1 667.9,491.7 668.0,491.5 668.1,491.2 668.3,490.9 668.4,490.7 668.7,490.6 668.9,490.4 669.2,490.4 669.4,490.3 669.7,490.3 670.0,490.4 670.3,490.5 670.6,490.6 670.8,490.8 671.1,491.0 671.3,491.3 671.6,491.6 671.7,491.9 671.9,492.2 672.0,492.6 672.1,492.9 672.2,493.3" fill="#d5bb8b" stroke="#1d160f" stroke-width="1.05" stroke-linejoin="round" />
<polygon points="730.6,436.0 738.0,430.0 742.0,432.0 742.4,462.0 749.6,465.0 750.0,469.6 745.0,472.0 736.0,469.0 731.0,464.0" fill="#4a3a2d" stroke="#1d160f" stroke-width="1.05" stroke-linejoin="round" />
<circle cx="745.6" cy="467.6" r="0.7" fill="#1d150e"/>
<polygon points="622.0,359.6 623.3,357.5 624.8,355.5 626.2,353.5 627.7,351.5 629.1,349.5 630.6,347.6 632.1,345.7 633.6,343.7 635.2,341.8 636.7,339.9 638.3,338.1 639.9,336.2 641.4,334.4 643.1,332.6 644.7,330.8 646.4,329.1 648.0,327.3 649.7,325.6 651.5,323.9 653.2,322.3 655.0,320.6 656.8,319.0 658.6,317.4 660.4,315.9 662.3,314.3 664.2,312.8 666.1,311.3 668.0,309.9 669.9,308.4 671.9,307.0 673.9,305.6 675.9,304.2 677.9,302.9 680.0,301.5 682.0,300.2 684.1,298.9 686.2,297.6 688.3,296.4 690.4,295.1 692.6,294.0 695.0,296.6 697.8,294.6 701.0,293.1 704.6,292.2 708.4,291.8 712.5,292.1 716.7,292.8 721.0,294.2 725.3,296.1 729.5,298.5 733.5,301.3 737.4,304.6 741.0,308.2 744.2,312.1 747.0,316.2 749.4,320.5 751.3,324.9 752.7,329.3 753.5,333.6 753.8,337.8 753.5,341.8 752.7,345.4 751.3,348.8 749.4,351.7 747.0,354.2 749.4,356.8 747.9,358.8 746.4,360.7 744.9,362.6 743.3,364.5 741.7,366.3 740.1,368.2 738.5,370.0 736.9,371.8 735.3,373.5 733.6,375.3 731.9,377.0 730.2,378.7 728.5,380.4 726.7,382.1 725.0,383.7 723.2,385.3 721.4,386.9 719.5,388.5 717.7,390.0 715.8,391.5 713.9,393.0 712.0,394.5 710.0,395.9 708.0,397.3 706.0,398.7 704.0,400.1 702.0,401.4 699.9,402.8 697.9,404.1 695.8,405.4 693.7,406.6 691.6,407.9 689.4,409.1 687.3,410.3 685.1,411.5 682.9,412.7 680.7,413.9 678.5,415.0 676.3,416.1 674.0,417.2" fill="url(#gbar)" stroke="#1d160f" stroke-width="1.4000000000000001" stroke-linejoin="round" />
<polyline points="629.4,355.7 630.9,353.5 632.4,351.4 634.0,349.4 635.6,347.4 637.1,345.3 638.7,343.3 640.3,341.3 641.9,339.4 643.5,337.4 645.2,335.5 646.8,333.6 648.4,331.7 650.1,329.9 651.8,328.0 653.5,326.2 655.2,324.4 656.9,322.7 658.6,320.9 660.4,319.2 662.2,317.6 663.9,315.9 665.7,314.3 667.6,312.7 669.4,311.2 671.2,309.6 673.1,308.1 675.0,306.6 676.9,305.2 678.8,303.8 680.7,302.4 682.7,301.0 684.6,299.6 686.6,298.3 688.6,297.0 690.6,295.7 692.6,294.5 694.6,293.2 696.6,292.0 698.6,290.8" fill="none" stroke="#1d160f" stroke-width="1.0"/>
<polyline points="638.7,355.0 640.3,352.8 642.0,350.7 643.7,348.6 645.4,346.6 647.1,344.6 648.8,342.6 650.5,340.6 652.2,338.6 653.9,336.6 655.7,334.7 657.4,332.8 659.1,330.9 660.9,329.0 662.6,327.2 664.4,325.4 666.1,323.6 667.9,321.8 669.7,320.1 671.5,318.4 673.3,316.7 675.1,315.1 676.9,313.5 678.7,311.9 680.6,310.3 682.4,308.8 684.2,307.3 686.1,305.8 687.9,304.3 689.8,302.9 691.7,301.5 693.6,300.2 695.5,298.8 697.4,297.5 699.3,296.2 701.2,294.9 703.1,293.7 705.0,292.4 706.9,291.2 708.9,290.1" fill="none" stroke="#1d160f" stroke-width="1.0"/>
<polyline points="648.8,357.5 650.7,355.4 652.5,353.4 654.4,351.3 656.2,349.3 658.0,347.3 659.9,345.4 661.7,343.4 663.5,341.5 665.4,339.5 667.2,337.6 669.0,335.7 670.9,333.9 672.7,332.0 674.5,330.2 676.4,328.4 678.2,326.6 680.0,324.9 681.9,323.2 683.7,321.5 685.5,319.8 687.3,318.2 689.2,316.5 691.0,315.0 692.8,313.4 694.6,311.9 696.5,310.4 698.3,308.9 700.1,307.4 701.9,306.0 703.7,304.6 705.6,303.2 707.4,301.8 709.2,300.5 711.0,299.2 712.8,297.9 714.7,296.6 716.5,295.3 718.3,294.1 720.1,292.9" fill="none" stroke="#1d160f" stroke-width="1.0"/>
<polyline points="658.9,363.1 660.9,361.1 662.9,359.1 664.9,357.2 666.9,355.3 668.9,353.3 670.8,351.4 672.8,349.5 674.8,347.7 676.7,345.8 678.7,344.0 680.6,342.1 682.5,340.3 684.4,338.5 686.4,336.7 688.3,335.0 690.1,333.3 692.0,331.5 693.9,329.8 695.8,328.2 697.6,326.5 699.5,324.9 701.3,323.3 703.2,321.7 705.0,320.1 706.8,318.6 708.6,317.1 710.4,315.6 712.2,314.1 713.9,312.6 715.7,311.2 717.5,309.8 719.2,308.4 721.0,307.0 722.7,305.6 724.4,304.3 726.1,302.9 727.8,301.6 729.6,300.3 731.2,299.1" fill="none" stroke="#1d160f" stroke-width="1.0"/>
<polyline points="668.0,371.2 670.1,369.3 672.3,367.5 674.4,365.6 676.5,363.8 678.6,362.0 680.7,360.2 682.7,358.4 684.8,356.6 686.9,354.9 688.9,353.1 690.9,351.4 692.9,349.6 694.9,347.9 696.9,346.2 698.9,344.5 700.8,342.8 702.8,341.1 704.7,339.5 706.6,337.8 708.5,336.2 710.3,334.6 712.2,333.0 714.0,331.4 715.8,329.8 717.6,328.3 719.4,326.8 721.2,325.2 722.9,323.7 724.7,322.2 726.4,320.7 728.1,319.3 729.8,317.8 731.5,316.4 733.1,314.9 734.8,313.5 736.4,312.1 738.0,310.7 739.6,309.3 741.2,308.0" fill="none" stroke="#1d160f" stroke-width="1.0"/>
<polyline points="675.0,380.9 677.3,379.2 679.6,377.5 681.8,375.8 684.0,374.2 686.2,372.5 688.4,370.8 690.5,369.2 692.7,367.5 694.8,365.8 696.9,364.2 699.0,362.5 701.1,360.9 703.2,359.2 705.2,357.6 707.2,356.0 709.2,354.4 711.2,352.7 713.1,351.1 715.1,349.5 717.0,347.9 718.9,346.3 720.7,344.7 722.6,343.2 724.4,341.6 726.2,340.0 727.9,338.5 729.7,336.9 731.4,335.4 733.1,333.8 734.8,332.3 736.4,330.8 738.1,329.2 739.7,327.7 741.3,326.2 742.9,324.7 744.4,323.2 746.0,321.7 747.5,320.2 749.0,318.7" fill="none" stroke="#1d160f" stroke-width="1.0"/>
<polyline points="679.4,391.4 681.8,389.9 684.1,388.4 686.4,386.8 688.7,385.3 690.9,383.8 693.2,382.2 695.4,380.7 697.6,379.1 699.8,377.6 701.9,376.1 704.1,374.5 706.2,373.0 708.3,371.4 710.4,369.9 712.4,368.3 714.4,366.8 716.4,365.2 718.4,363.6 720.4,362.1 722.3,360.5 724.2,358.9 726.0,357.4 727.9,355.8 729.7,354.2 731.5,352.6 733.2,351.1 735.0,349.5 736.7,347.9 738.3,346.3 740.0,344.7 741.6,343.1 743.2,341.5 744.8,339.9 746.4,338.3 747.9,336.7 749.5,335.1 751.0,333.5 752.4,331.9 753.9,330.3" fill="none" stroke="#1d160f" stroke-width="1.0"/>
<polyline points="680.8,401.6 683.2,400.3 685.5,398.9 687.8,397.5 690.1,396.1 692.4,394.7 694.6,393.3 696.9,391.9 699.1,390.5 701.3,389.1 703.5,387.6 705.6,386.2 707.7,384.7 709.9,383.3 711.9,381.8 714.0,380.3 716.0,378.8 718.0,377.3 720.0,375.8 722.0,374.3 723.9,372.8 725.8,371.2 727.7,369.7 729.5,368.1 731.3,366.5 733.1,364.9 734.8,363.3 736.6,361.7 738.3,360.1 739.9,358.4 741.6,356.8 743.2,355.1 744.8,353.5 746.4,351.8 747.9,350.1 749.5,348.4 751.0,346.7 752.5,345.0 753.9,343.3 755.4,341.5" fill="none" stroke="#1d160f" stroke-width="1.0"/>
<polyline points="678.9,410.5 681.3,409.3 683.6,408.1 685.9,406.8 688.1,405.6 690.4,404.3 692.6,403.0 694.8,401.7 697.0,400.4 699.2,399.1 701.3,397.7 703.5,396.4 705.6,395.0 707.7,393.6 709.8,392.2 711.8,390.8 713.8,389.4 715.8,387.9 717.8,386.4 719.7,385.0 721.7,383.4 723.6,381.9 725.4,380.4 727.3,378.8 729.1,377.2 730.9,375.6 732.6,374.0 734.3,372.4 736.0,370.7 737.7,369.0 739.4,367.3 741.0,365.6 742.6,363.9 744.2,362.1 745.8,360.4 747.3,358.6 748.9,356.8 750.4,355.0 751.9,353.2 753.3,351.4" fill="none" stroke="#1d160f" stroke-width="1.0"/>
<polygon points="625.6,354.3 627.9,352.6 630.5,351.2 633.4,350.2 636.4,349.6 639.7,349.3 643.0,349.5 646.5,350.0 650.0,350.9 653.6,352.1 657.2,353.8 660.7,355.7 664.1,358.0 667.4,360.5 670.6,363.3 673.5,366.4 676.3,369.6 678.7,373.0 680.9,376.5 682.8,380.1 684.3,383.8 685.5,387.4 686.3,391.1 686.8,394.6 686.9,398.1 686.6,401.3 686.0,404.4 685.0,407.3 683.6,409.9 681.9,412.3 679.9,414.3 685.3,411.4 687.4,409.3 689.1,406.9 690.6,404.2 691.6,401.2 692.3,398.0 692.6,394.6 692.5,391.0 692.0,387.4 691.1,383.6 689.9,379.9 688.3,376.1 686.4,372.4 684.1,368.7 681.6,365.2 678.7,361.9 675.7,358.7 672.5,355.8 669.0,353.2 665.5,350.9 661.9,348.8 658.2,347.2 654.5,345.9 650.8,344.9 647.2,344.4 643.7,344.3 640.4,344.5 637.3,345.2 634.3,346.2 631.7,347.6 629.3,349.4" fill="#9c9a92" stroke="#1d160f" stroke-width="0.875" stroke-linejoin="round" />
<polyline points="644.5,346.9 647.0,347.2 649.6,347.6 652.1,348.3 654.7,349.2 657.3,350.2 659.8,351.4 662.4,352.8 664.9,354.4 667.3,356.1 669.7,357.9 672.0,359.9 674.2,362.0 676.3,364.2 678.2,366.6 680.1,369.0 681.8,371.4 683.4,374.0 684.8,376.6 686.0,379.2 687.1,381.8" fill="none" stroke="#cfcfc9" stroke-width="1.2" stroke-linecap="round" stroke-linejoin="round" opacity="0.9"/>
<polygon points="632.1,345.7 634.6,343.8 637.3,342.4 640.3,341.3 643.5,340.7 646.9,340.4 650.5,340.6 654.2,341.1 657.9,342.1 661.7,343.4 665.5,345.1 669.2,347.2 672.8,349.5 676.3,352.2 679.6,355.2 682.7,358.4 685.6,361.8 688.2,365.4 690.5,369.2 692.5,373.0 694.1,376.8 695.4,380.7 696.3,384.5 696.8,388.3 696.9,391.9 696.6,395.4 695.9,398.6 694.8,401.7 693.4,404.5 691.6,406.9 689.4,409.1 694.7,406.0 696.9,403.8 698.7,401.3 700.2,398.4 701.3,395.3 702.0,391.9 702.3,388.4 702.2,384.6 701.7,380.8 700.8,376.9 699.5,372.9 697.8,368.9 695.8,365.0 693.5,361.2 690.8,357.5 687.8,354.0 684.6,350.7 681.2,347.7 677.6,344.9 673.9,342.5 670.1,340.4 666.3,338.6 662.4,337.2 658.5,336.3 654.8,335.7 651.1,335.6 647.6,335.8 644.3,336.5 641.2,337.6 638.4,339.1 635.9,340.9" fill="#9c9a92" stroke="#1d160f" stroke-width="0.875" stroke-linejoin="round" />
<polyline points="652.0,338.1 654.6,338.4 657.3,338.9 660.0,339.6 662.7,340.5 665.4,341.6 668.1,342.9 670.8,344.3 673.4,346.0 676.0,347.8 678.5,349.7 680.9,351.8 683.2,354.0 685.4,356.4 687.5,358.8 689.5,361.3 691.3,363.9 692.9,366.6 694.4,369.3 695.7,372.1 696.8,374.9" fill="none" stroke="#cfcfc9" stroke-width="1.2" stroke-linecap="round" stroke-linejoin="round" opacity="0.9"/>
<polygon points="638.9,337.3 641.5,335.5 644.3,333.9 647.4,332.8 650.8,332.2 654.4,331.9 658.1,332.0 661.9,332.6 665.8,333.6 669.8,335.0 673.7,336.8 677.6,338.9 681.4,341.4 685.0,344.2 688.5,347.3 691.7,350.7 694.7,354.2 697.4,358.0 699.8,361.9 701.9,365.8 703.6,369.9 704.9,373.9 705.8,377.9 706.4,381.8 706.5,385.6 706.2,389.2 705.4,392.6 704.3,395.8 702.8,398.7 700.9,401.3 698.7,403.6 703.8,400.3 706.1,398.0 708.0,395.3 709.5,392.4 710.7,389.2 711.4,385.7 711.7,382.0 711.6,378.1 711.1,374.1 710.1,370.1 708.8,366.0 707.0,361.8 704.9,357.8 702.5,353.8 699.7,350.0 696.7,346.4 693.4,343.0 689.8,339.8 686.1,337.0 682.3,334.4 678.3,332.2 674.3,330.4 670.3,329.0 666.3,328.0 662.4,327.4 658.6,327.3 655.0,327.5 651.6,328.2 648.4,329.4 645.5,330.9 642.9,332.8" fill="#9c9a92" stroke="#1d160f" stroke-width="0.875" stroke-linejoin="round" />
<polyline points="659.6,329.6 662.3,330.0 665.1,330.5 667.9,331.2 670.7,332.2 673.5,333.3 676.3,334.6 679.1,336.2 681.9,337.9 684.5,339.7 687.1,341.8 689.6,343.9 692.0,346.2 694.3,348.7 696.5,351.2 698.5,353.8 700.4,356.6 702.1,359.3 703.7,362.2 705.0,365.0 706.2,367.9" fill="none" stroke="#cfcfc9" stroke-width="1.2" stroke-linecap="round" stroke-linejoin="round" opacity="0.9"/>
<polygon points="663.4,313.4 666.1,311.4 669.1,309.9 672.4,308.7 675.9,308.0 679.6,307.7 683.5,307.9 687.5,308.5 691.6,309.5 695.7,311.0 699.8,312.8 703.9,315.1 707.9,317.7 711.7,320.6 715.3,323.9 718.7,327.4 721.9,331.1 724.7,335.0 727.2,339.1 729.4,343.3 731.2,347.5 732.5,351.7 733.5,355.9 734.0,360.0 734.2,363.9 733.8,367.7 733.1,371.3 731.9,374.6 730.3,377.7 728.4,380.4 726.0,382.7 730.3,378.6 732.7,376.3 734.6,373.6 736.2,370.6 737.3,367.3 738.1,363.7 738.4,359.9 738.3,356.0 737.8,351.9 736.8,347.8 735.4,343.6 733.7,339.4 731.5,335.3 729.0,331.2 726.2,327.3 723.1,323.6 719.7,320.1 716.1,316.9 712.3,314.0 708.4,311.4 704.3,309.1 700.3,307.3 696.2,305.9 692.1,304.8 688.1,304.2 684.2,304.1 680.5,304.4 677.0,305.1 673.8,306.2 670.8,307.8 668.2,309.7" fill="#9c9a92" stroke="#1d160f" stroke-width="0.875" stroke-linejoin="round" />
<polyline points="685.1,306.0 687.9,306.3 690.8,306.8 693.7,307.6 696.6,308.6 699.5,309.8 702.4,311.1 705.3,312.7 708.1,314.5 710.9,316.4 713.6,318.5 716.2,320.7 718.7,323.1 721.0,325.6 723.3,328.3 725.4,331.0 727.3,333.8 729.1,336.7 730.7,339.6 732.1,342.5 733.3,345.5" fill="none" stroke="#cfcfc9" stroke-width="1.2" stroke-linecap="round" stroke-linejoin="round" opacity="0.9"/>
<polygon points="670.7,307.9 673.4,305.9 676.3,304.3 679.6,303.2 683.0,302.5 686.7,302.2 690.6,302.4 694.5,303.0 698.6,304.0 702.7,305.4 706.7,307.3 710.7,309.5 714.6,312.1 718.4,315.0 722.0,318.2 725.4,321.6 728.5,325.3 731.3,329.2 733.8,333.2 735.9,337.3 737.6,341.5 739.0,345.7 740.0,349.8 740.5,353.9 740.6,357.8 740.3,361.5 739.6,365.1 738.4,368.3 736.8,371.3 734.9,374.0 732.6,376.3 736.7,372.0 739.0,369.7 740.9,367.0 742.4,364.1 743.6,360.8 744.3,357.4 744.6,353.7 744.5,349.8 744.0,345.8 743.1,341.7 741.7,337.6 740.0,333.5 737.9,329.4 735.4,325.5 732.6,321.6 729.6,318.0 726.3,314.6 722.7,311.4 719.0,308.5 715.1,306.0 711.2,303.8 707.2,302.0 703.1,300.6 699.2,299.6 695.2,299.0 691.4,298.8 687.8,299.1 684.4,299.8 681.2,300.9 678.3,302.5 675.7,304.4" fill="#9c9a92" stroke="#1d160f" stroke-width="0.875" stroke-linejoin="round" />
<polyline points="692.3,300.6 695.0,300.9 697.8,301.5 700.7,302.2 703.6,303.2 706.4,304.3 709.3,305.7 712.1,307.2 714.9,309.0 717.6,310.9 720.3,312.9 722.8,315.1 725.3,317.5 727.6,320.0 729.8,322.5 731.9,325.2 733.8,328.0 735.5,330.8 737.1,333.7 738.5,336.6 739.7,339.5" fill="none" stroke="#cfcfc9" stroke-width="1.2" stroke-linecap="round" stroke-linejoin="round" opacity="0.9"/>
<polygon points="678.3,302.6 680.9,300.7 683.8,299.2 687.0,298.1 690.4,297.4 694.0,297.1 697.7,297.2 701.6,297.8 705.6,298.8 709.6,300.2 713.5,302.0 717.5,304.2 721.3,306.7 725.0,309.6 728.5,312.7 731.8,316.1 734.8,319.7 737.6,323.5 740.0,327.4 742.1,331.5 743.8,335.5 745.1,339.6 746.1,343.7 746.6,347.6 746.7,351.4 746.4,355.1 745.7,358.6 744.5,361.8 743.0,364.7 741.1,367.3 738.9,369.6 742.8,365.1 745.0,362.8 746.9,360.3 748.4,357.4 749.5,354.2 750.2,350.9 750.5,347.3 750.4,343.5 749.9,339.6 749.0,335.6 747.7,331.6 746.0,327.6 743.9,323.7 741.5,319.8 738.9,316.1 735.9,312.6 732.6,309.2 729.2,306.2 725.6,303.4 721.8,300.9 718.0,298.8 714.1,297.0 710.2,295.6 706.3,294.6 702.5,294.1 698.8,293.9 695.2,294.2 691.9,294.9 688.8,296.0 686.0,297.5 683.4,299.3" fill="#9c9a92" stroke="#1d160f" stroke-width="0.875" stroke-linejoin="round" />
<polyline points="699.5,295.6 702.2,295.9 704.9,296.4 707.7,297.1 710.5,298.1 713.3,299.2 716.1,300.5 718.8,302.1 721.6,303.7 724.2,305.6 726.8,307.6 729.3,309.8 731.7,312.1 734.0,314.5 736.1,317.0 738.1,319.6 740.0,322.3 741.7,325.1 743.2,327.9 744.6,330.7 745.8,333.6" fill="none" stroke="#cfcfc9" stroke-width="1.2" stroke-linecap="round" stroke-linejoin="round" opacity="0.9"/>
<polygon points="680.8,400.8 680.5,404.8 679.7,408.5 678.3,411.8 676.4,414.7 674.0,417.2 671.2,419.2 668.0,420.7 664.4,421.6 660.6,422.0 656.5,421.7 652.3,421.0 648.0,419.6 643.7,417.7 639.5,415.3 635.4,412.5 631.6,409.2 628.0,405.6 624.8,401.7 622.0,397.6 619.6,393.3 617.7,388.9 616.3,384.5 615.5,380.2 615.2,376.0 615.5,372.0 616.3,368.3 617.7,365.0 619.6,362.1 622.0,359.6 624.8,357.6 628.0,356.1 631.6,355.2 635.4,354.8 639.5,355.1 643.7,355.8 648.0,357.2 652.3,359.1 656.5,361.5 660.6,364.3 664.4,367.6 668.0,371.2 671.2,375.1 674.0,379.2 676.4,383.5 678.3,387.9 679.7,392.3 680.5,396.6" fill="#d5bb8b" stroke="#1d160f" stroke-width="1.575" stroke-linejoin="round" />
<polygon points="678.8,400.1 678.6,403.8 677.8,407.2 676.5,410.4 674.7,413.2 672.5,415.5 669.8,417.4 666.8,418.8 663.4,419.6 659.8,420.0 656.0,419.7 652.0,419.0 648.0,417.7 644.0,416.0 640.0,413.7 636.2,411.0 632.6,408.0 629.2,404.6 626.2,400.9 623.5,397.0 621.3,393.0 619.5,388.9 618.2,384.7 617.4,380.7 617.2,376.7 617.4,373.0 618.2,369.6 619.5,366.4 621.3,363.6 623.5,361.3 626.2,359.4 629.2,358.0 632.6,357.2 636.2,356.8 640.0,357.1 644.0,357.8 648.0,359.1 652.0,360.8 656.0,363.1 659.8,365.8 663.4,368.8 666.8,372.2 669.8,375.9 672.5,379.8 674.7,383.8 676.5,387.9 677.8,392.1 678.6,396.1" fill="#c3a879" stroke="#1d160f" stroke-width="0.875" stroke-linejoin="round" />
<polygon points="677.9,398.5 677.6,402.0 676.9,405.2 675.7,408.2 674.0,410.8 671.9,413.0 669.4,414.7 666.6,416.0 663.4,416.8 660.0,417.1 656.5,416.9 652.8,416.2 649.0,415.1 645.2,413.4 641.5,411.3 638.0,408.8 634.6,405.9 631.4,402.7 628.6,399.3 626.1,395.7 624.0,391.9 622.3,388.0 621.1,384.2 620.4,380.4 620.1,376.7 620.4,373.2 621.1,370.0 622.3,367.0 624.0,364.4 626.1,362.2 628.6,360.5 631.4,359.2 634.6,358.4 638.0,358.1 641.5,358.3 645.2,359.0 649.0,360.1 652.8,361.8 656.5,363.9 660.0,366.4 663.4,369.3 666.6,372.5 669.4,375.9 671.9,379.5 674.0,383.3 675.7,387.2 676.9,391.0 677.6,394.8" fill="#e0cca3" stroke="#1d160f" stroke-width="1.2249999999999999" stroke-linejoin="round" />
<polyline points="622.8,361.2 622.8,394.2" fill="none" stroke="#1d160f" stroke-width="0.9625000000000001" stroke-linecap="round" stroke-linejoin="round" />
<polyline points="629.3,358.2 629.3,402.1" fill="none" stroke="#1d160f" stroke-width="0.9625000000000001" stroke-linecap="round" stroke-linejoin="round" />
<polyline points="635.9,357.5 635.9,407.8" fill="none" stroke="#1d160f" stroke-width="0.9625000000000001" stroke-linecap="round" stroke-linejoin="round" />
<polyline points="642.4,358.2 642.4,412.0" fill="none" stroke="#1d160f" stroke-width="0.9625000000000001" stroke-linecap="round" stroke-linejoin="round" />
<polyline points="649.0,360.1 649.0,415.1" fill="none" stroke="#1d160f" stroke-width="0.9625000000000001" stroke-linecap="round" stroke-linejoin="round" />
<polyline points="655.6,363.2 655.6,417.0" fill="none" stroke="#1d160f" stroke-width="0.9625000000000001" stroke-linecap="round" stroke-linejoin="round" />
<polyline points="662.1,367.4 662.1,417.7" fill="none" stroke="#1d160f" stroke-width="0.9625000000000001" stroke-linecap="round" stroke-linejoin="round" />
<polyline points="668.7,373.1 668.7,417.0" fill="none" stroke="#1d160f" stroke-width="0.9625000000000001" stroke-linecap="round" stroke-linejoin="round" />
<polyline points="675.2,381.0 675.2,414.0" fill="none" stroke="#1d160f" stroke-width="0.9625000000000001" stroke-linecap="round" stroke-linejoin="round" />
<polygon points="667.6,313.6 686.0,298.0 706.0,307.6 689.0,324.4" fill="#c4af89" stroke="#1d160f" stroke-width="1.05" stroke-linejoin="round" />
<circle cx="671.0" cy="314.0" r="0.6" fill="#2a2118"/>
<circle cx="676.0" cy="318.0" r="0.6" fill="#2a2118"/>
<circle cx="682.0" cy="321.0" r="0.6" fill="#2a2118"/>
<circle cx="691.0" cy="319.4" r="0.6" fill="#2a2118"/>
<circle cx="696.0" cy="314.6" r="0.6" fill="#2a2118"/>
<circle cx="700.0" cy="309.6" r="0.6" fill="#2a2118"/>
<polygon points="671.7,311.7 686.7,299.0 700.5,305.5 686.0,318.5" fill="#e8d9b9" stroke="#1d160f" stroke-width="1.2249999999999999" stroke-linejoin="round" />
<polygon points="671.7,311.7 686.0,318.5 686.5,325.5 672.5,318.6" fill="#c4af89" stroke="#1d160f" stroke-width="1.2249999999999999" stroke-linejoin="round" />
<polygon points="686.0,318.5 700.5,305.5 700.2,312.6 686.5,325.5" fill="#dac8a4" stroke="#1d160f" stroke-width="1.2249999999999999" stroke-linejoin="round" />
<polygon points="403.7,345.6 403.3,351.3 402.2,356.6 400.4,361.4 397.8,365.6 394.6,369.2 390.8,372.0 386.5,374.0 381.8,375.3 376.6,375.7 371.2,375.3 365.5,374.0 359.8,372.0 354.1,369.2 348.4,365.7 343.0,361.5 337.9,356.7 333.1,351.4 328.8,345.7 325.0,339.6 321.8,333.4 319.2,327.0 317.4,320.7 316.3,314.4 315.9,308.4 316.3,302.7 317.4,297.4 319.2,292.6 321.8,288.4 325.0,284.8 328.8,282.0 333.1,280.0 337.9,278.7 343.0,278.3 348.4,278.7 354.1,280.0 359.8,282.0 365.5,284.8 371.2,288.3 376.6,292.5 381.8,297.3 386.5,302.6 390.8,308.3 394.6,314.4 397.8,320.6 400.4,327.0 402.2,333.3 403.3,339.6" fill="#c4af89" stroke="#1d160f" stroke-width="1.4000000000000001" stroke-linejoin="round" />
<polygon points="399.6,348.4 399.2,354.1 398.1,359.4 396.2,364.2 393.7,368.4 390.5,371.9 386.7,374.8 382.4,376.8 377.6,378.1 372.5,378.5 367.0,378.1 361.4,376.8 355.7,374.8 349.9,372.0 344.3,368.4 338.9,364.2 333.7,359.5 328.9,354.2 324.6,348.5 320.8,342.4 317.6,336.2 315.1,329.8 313.3,323.5 312.1,317.2 311.8,311.2 312.1,305.5 313.3,300.2 315.1,295.4 317.6,291.2 320.8,287.6 324.6,284.8 328.9,282.8 333.7,281.5 338.9,281.1 344.3,281.5 349.9,282.7 355.7,284.8 361.4,287.6 367.0,291.1 372.5,295.3 377.6,300.1 382.4,305.4 386.7,311.1 390.5,317.2 393.7,323.4 396.2,329.8 398.1,336.1 399.2,342.4" fill="#dac8a4" stroke="#1d160f" stroke-width="1.05" stroke-linejoin="round" />
<polygon points="396.0,351.2 395.7,357.0 394.5,362.4 392.7,367.2 390.1,371.5 386.9,375.0 383.1,377.9 378.7,380.0 373.9,381.2 368.7,381.6 363.2,381.2 357.5,380.0 351.7,377.9 345.9,375.1 340.2,371.5 334.7,367.3 329.5,362.4 324.7,357.1 320.4,351.3 316.5,345.2 313.3,338.9 310.7,332.5 308.9,326.1 307.7,319.8 307.4,313.7 307.7,307.9 308.9,302.5 310.7,297.7 313.3,293.5 316.5,289.9 320.4,287.0 324.7,285.0 329.5,283.7 334.7,283.3 340.2,283.7 345.9,284.9 351.7,287.0 357.5,289.8 363.2,293.4 368.7,297.7 373.9,302.5 378.7,307.8 383.1,313.6 386.9,319.7 390.1,326.0 392.7,332.4 394.5,338.8 395.7,345.1" fill="#e8d9b9" stroke="#1d160f" stroke-width="0.875" stroke-linejoin="round" />
<polygon points="394.5,351.8 394.1,357.5 393.0,362.8 391.2,367.6 388.6,371.8 385.4,375.4 381.6,378.2 377.3,380.2 372.6,381.5 367.4,381.9 362.0,381.5 356.3,380.2 350.6,378.2 344.9,375.4 339.2,371.9 333.8,367.7 328.7,362.9 323.9,357.6 319.6,351.9 315.8,345.8 312.6,339.6 310.0,333.2 308.2,326.9 307.1,320.6 306.7,314.6 307.1,308.9 308.2,303.6 310.0,298.8 312.6,294.6 315.8,291.0 319.6,288.2 323.9,286.2 328.6,284.9 333.8,284.5 339.2,284.9 344.9,286.2 350.6,288.2 356.3,291.0 362.0,294.5 367.4,298.7 372.6,303.5 377.3,308.8 381.6,314.5 385.4,320.6 388.6,326.8 391.2,333.2 393.0,339.5 394.1,345.8" fill="#dac8a4" stroke="#1d160f" stroke-width="1.4000000000000001" stroke-linejoin="round" />
<clipPath id="bwc"><polygon points="384.6,347.6 384.3,352.0 383.5,356.2 382.0,359.9 380.1,363.1 377.6,365.9 374.7,368.1 371.3,369.6 367.6,370.6 363.6,370.9 359.4,370.6 355.0,369.7 350.6,368.1 346.2,365.9 341.8,363.2 337.6,359.9 333.6,356.2 329.9,352.1 326.5,347.7 323.6,343.0 321.1,338.2 319.2,333.2 317.7,328.3 316.9,323.5 316.6,318.8 316.9,314.4 317.7,310.2 319.2,306.5 321.1,303.3 323.6,300.5 326.5,298.3 329.9,296.8 333.6,295.8 337.6,295.5 341.8,295.8 346.2,296.7 350.6,298.3 355.0,300.5 359.4,303.2 363.6,306.5 367.6,310.2 371.3,314.3 374.7,318.7 377.6,323.4 380.1,328.2 382.0,333.2 383.5,338.1 384.3,342.9"/></clipPath>
<g clip-path="url(#bwc)">
<polygon points="384.6,347.6 384.3,352.0 383.5,356.2 382.0,359.9 380.1,363.1 377.6,365.9 374.7,368.1 371.3,369.6 367.6,370.6 363.6,370.9 359.4,370.6 355.0,369.7 350.6,368.1 346.2,365.9 341.8,363.2 337.6,359.9 333.6,356.2 329.9,352.1 326.5,347.7 323.6,343.0 321.1,338.2 319.2,333.2 317.7,328.3 316.9,323.5 316.6,318.8 316.9,314.4 317.7,310.2 319.2,306.5 321.1,303.3 323.6,300.5 326.5,298.3 329.9,296.8 333.6,295.8 337.6,295.5 341.8,295.8 346.2,296.7 350.6,298.3 355.0,300.5 359.4,303.2 363.6,306.5 367.6,310.2 371.3,314.3 374.7,318.7 377.6,323.4 380.1,328.2 382.0,333.2 383.5,338.1 384.3,342.9" fill="#9c8862" stroke="none" stroke-width="0" stroke-linejoin="round" />
<polygon points="397.1,342.8 396.8,347.7 395.8,352.2 394.3,356.2 392.1,359.8 389.4,362.8 386.2,365.2 382.5,367.0 378.5,368.0 374.1,368.4 369.5,368.0 364.7,367.0 359.8,365.2 354.9,362.9 350.1,359.9 345.5,356.3 341.1,352.2 337.1,347.7 333.4,342.9 330.2,337.7 327.5,332.4 325.3,327.0 323.8,321.6 322.8,316.3 322.5,311.2 322.8,306.3 323.8,301.8 325.3,297.8 327.5,294.2 330.2,291.2 333.4,288.8 337.1,287.0 341.1,286.0 345.5,285.6 350.1,286.0 354.9,287.0 359.8,288.8 364.7,291.1 369.5,294.1 374.1,297.7 378.5,301.8 382.5,306.3 386.2,311.1 389.4,316.3 392.1,321.6 394.3,327.0 395.8,332.4 396.8,337.7" fill="#ffffff" stroke="#1d160f" stroke-width="1.05" stroke-linejoin="round" />
<polygon points="360.0,300.0 392.0,313.0 392.0,322.0 360.0,312.0" fill="#a6906a" stroke="#1d160f" stroke-width="0.875" stroke-linejoin="round" />
<polygon points="370.0,318.0 396.0,328.0 396.0,334.0 370.0,326.0" fill="#7f6c4c" stroke="#1d160f" stroke-width="0.875" stroke-linejoin="round" />
<polygon points="352.0,296.0 362.0,300.0 362.0,330.0 352.0,326.0" fill="#c4af89" stroke="#1d160f" stroke-width="0.875" stroke-linejoin="round" />
</g>
<polygon points="359.4,336.3 385.1,351.6 383.6,358.1 358.3,340.7" fill="#d2be96" stroke="#1d160f" stroke-width="1.05" stroke-linejoin="round" />
<polygon points="358.5,340.5 378.6,366.1 373.9,369.4 355.2,342.8" fill="#d2be96" stroke="#1d160f" stroke-width="1.05" stroke-linejoin="round" />
<polygon points="355.5,342.7 364.6,371.7 357.9,371.1 350.9,342.3" fill="#d2be96" stroke="#1d160f" stroke-width="1.05" stroke-linejoin="round" />
<polygon points="351.2,342.4 346.9,367.0 340.0,362.6 346.5,339.4" fill="#d2be96" stroke="#1d160f" stroke-width="1.05" stroke-linejoin="round" />
<polygon points="346.8,339.7 330.1,353.2 324.9,346.2 343.2,334.8" fill="#d2be96" stroke="#1d160f" stroke-width="1.05" stroke-linejoin="round" />
<polygon points="343.3,335.2 318.9,334.1 316.7,326.3 341.8,329.8" fill="#d2be96" stroke="#1d160f" stroke-width="1.05" stroke-linejoin="round" />
<polygon points="341.8,330.1 316.1,314.8 317.6,308.3 342.9,325.7" fill="#d2be96" stroke="#1d160f" stroke-width="1.05" stroke-linejoin="round" />
<polygon points="342.7,325.9 322.6,300.3 327.3,297.0 346.0,323.6" fill="#d2be96" stroke="#1d160f" stroke-width="1.05" stroke-linejoin="round" />
<polygon points="345.7,323.7 336.6,294.7 343.3,295.3 350.3,324.1" fill="#d2be96" stroke="#1d160f" stroke-width="1.05" stroke-linejoin="round" />
<polygon points="350.0,324.0 354.3,299.4 361.2,303.8 354.7,327.0" fill="#d2be96" stroke="#1d160f" stroke-width="1.05" stroke-linejoin="round" />
<polygon points="354.4,326.7 371.1,313.2 376.3,320.2 358.0,331.6" fill="#d2be96" stroke="#1d160f" stroke-width="1.05" stroke-linejoin="round" />
<polygon points="357.9,331.2 382.3,332.3 384.5,340.1 359.4,336.6" fill="#d2be96" stroke="#1d160f" stroke-width="1.05" stroke-linejoin="round" />
<polyline points="363.5,341.5 383.2,354.1" fill="none" stroke="#8f7c58" stroke-width="0.5" stroke-linecap="round" stroke-linejoin="round" />
<polyline points="360.4,346.4 375.4,366.6" fill="none" stroke="#8f7c58" stroke-width="0.5" stroke-linecap="round" stroke-linejoin="round" />
<polyline points="354.7,347.8 360.9,370.1" fill="none" stroke="#8f7c58" stroke-width="0.5" stroke-linecap="round" stroke-linejoin="round" />
<polyline points="347.9,345.2 343.7,363.7" fill="none" stroke="#8f7c58" stroke-width="0.5" stroke-linecap="round" stroke-linejoin="round" />
<polyline points="341.8,339.5 328.3,349.2" fill="none" stroke="#8f7c58" stroke-width="0.5" stroke-linecap="round" stroke-linejoin="round" />
<polyline points="338.1,332.1 318.9,330.3" fill="none" stroke="#8f7c58" stroke-width="0.5" stroke-linecap="round" stroke-linejoin="round" />
<polyline points="337.7,324.9 318.0,312.3" fill="none" stroke="#8f7c58" stroke-width="0.5" stroke-linecap="round" stroke-linejoin="round" />
<polyline points="340.8,320.0 325.8,299.8" fill="none" stroke="#8f7c58" stroke-width="0.5" stroke-linecap="round" stroke-linejoin="round" />
<polyline points="346.5,318.6 340.3,296.3" fill="none" stroke="#8f7c58" stroke-width="0.5" stroke-linecap="round" stroke-linejoin="round" />
<polyline points="353.3,321.2 357.5,302.7" fill="none" stroke="#8f7c58" stroke-width="0.5" stroke-linecap="round" stroke-linejoin="round" />
<polyline points="359.4,326.9 372.9,317.2" fill="none" stroke="#8f7c58" stroke-width="0.5" stroke-linecap="round" stroke-linejoin="round" />
<polyline points="363.1,334.3 382.3,336.1" fill="none" stroke="#8f7c58" stroke-width="0.5" stroke-linecap="round" stroke-linejoin="round" />
<path d="M394.5,351.8 L394.1,357.5 L393.0,362.8 L391.2,367.6 L388.6,371.8 L385.4,375.4 L381.6,378.2 L377.3,380.2 L372.6,381.5 L367.4,381.9 L362.0,381.5 L356.3,380.2 L350.6,378.2 L344.9,375.4 L339.2,371.9 L333.8,367.7 L328.7,362.9 L323.9,357.6 L319.6,351.9 L315.8,345.8 L312.6,339.6 L310.0,333.2 L308.2,326.9 L307.1,320.6 L306.7,314.6 L307.1,308.9 L308.2,303.6 L310.0,298.8 L312.6,294.6 L315.8,291.0 L319.6,288.2 L323.9,286.2 L328.6,284.9 L333.8,284.5 L339.2,284.9 L344.9,286.2 L350.6,288.2 L356.3,291.0 L362.0,294.5 L367.4,298.7 L372.6,303.5 L377.3,308.8 L381.6,314.5 L385.4,320.6 L388.6,326.8 L391.2,333.2 L393.0,339.5 L394.1,345.8Z M384.3,342.9 L383.5,338.1 L382.0,333.2 L380.1,328.2 L377.6,323.4 L374.7,318.7 L371.3,314.3 L367.6,310.2 L363.6,306.5 L359.4,303.2 L355.0,300.5 L350.6,298.3 L346.2,296.7 L341.8,295.8 L337.6,295.5 L333.6,295.8 L329.9,296.8 L326.5,298.3 L323.6,300.5 L321.1,303.3 L319.2,306.5 L317.7,310.2 L316.9,314.4 L316.6,318.8 L316.9,323.5 L317.7,328.3 L319.2,333.2 L321.1,338.2 L323.6,343.0 L326.5,347.7 L329.9,352.1 L333.6,356.2 L337.6,359.9 L341.8,363.2 L346.2,365.9 L350.6,368.1 L355.0,369.7 L359.4,370.6 L363.6,370.9 L367.6,370.6 L371.3,369.6 L374.7,368.1 L377.6,365.9 L380.1,363.1 L382.0,359.9 L383.5,356.2 L384.3,352.0 L384.6,347.6Z" fill="#dac8a4" stroke="#1d160f" stroke-width="1.4000000000000001" fill-rule="evenodd"/>
<polyline points="390.3,350.0 390.2,352.7 390.0,355.2 389.6,357.7 389.0,360.0 388.2,362.2 387.3,364.3 386.2,366.3 385.0,368.1 383.6,369.8 382.1,371.3 380.5,372.7 378.7,373.9 376.8,374.9 374.8,375.8 372.7,376.4 370.5,376.9 368.2,377.2 365.8,377.3 363.4,377.2 360.9,376.9 358.4,376.4 355.8,375.8 353.2,374.9 350.6,373.9 348.0,372.7 345.4,371.4 342.8,369.9 340.3,368.2 337.8,366.4 335.4,364.4 333.0,362.3 330.7,360.1 328.5,357.7 326.4,355.3 324.4,352.7 322.5,350.1 320.7,347.4 319.1,344.6 317.6,341.8 316.2,339.0 315.0,336.1 313.9,333.2 313.0,330.4 312.2,327.5 311.6,324.6 311.2,321.8 311.0,319.1 310.9,316.4 311.0,313.7 311.2,311.2 311.6,308.7 312.2,306.4 313.0,304.2 313.9,302.1 315.0,300.1 316.2,298.3 317.6,296.6 319.1,295.1 320.7,293.7 322.5,292.5 324.4,291.5 326.4,290.6 328.5,290.0 330.7,289.5 333.0,289.2 335.4,289.1 337.8,289.2 340.3,289.5 342.8,290.0 345.4,290.6 348.0,291.5 350.6,292.5 353.2,293.7 355.8,295.0 358.4,296.5 360.9,298.2 363.4,300.0 365.8,302.0 368.2,304.1 370.5,306.3 372.7,308.7 374.8,311.1 376.8,313.7 378.7,316.3 380.5,319.0 382.1,321.8 383.6,324.6 385.0,327.4 386.2,330.3 387.3,333.2 388.2,336.0 389.0,338.9 389.6,341.8 390.0,344.6 390.2,347.3 390.3,350.0" fill="none" stroke="#1c150e" stroke-width="3.3"/>
<polyline points="390.3,350.0 390.2,352.7 390.0,355.2 389.6,357.7 389.0,360.0 388.2,362.2 387.3,364.3 386.2,366.3 385.0,368.1 383.6,369.8 382.1,371.3 380.5,372.7 378.7,373.9 376.8,374.9 374.8,375.8 372.7,376.4 370.5,376.9 368.2,377.2 365.8,377.3 363.4,377.2 360.9,376.9 358.4,376.4 355.8,375.8 353.2,374.9 350.6,373.9 348.0,372.7 345.4,371.4 342.8,369.9 340.3,368.2 337.8,366.4 335.4,364.4 333.0,362.3 330.7,360.1 328.5,357.7 326.4,355.3 324.4,352.7 322.5,350.1 320.7,347.4 319.1,344.6 317.6,341.8 316.2,339.0 315.0,336.1 313.9,333.2 313.0,330.4 312.2,327.5 311.6,324.6 311.2,321.8 311.0,319.1 310.9,316.4 311.0,313.7 311.2,311.2 311.6,308.7 312.2,306.4 313.0,304.2 313.9,302.1 315.0,300.1 316.2,298.3 317.6,296.6 319.1,295.1 320.7,293.7 322.5,292.5 324.4,291.5 326.4,290.6 328.5,290.0 330.7,289.5 333.0,289.2 335.4,289.1 337.8,289.2 340.3,289.5 342.8,290.0 345.4,290.6 348.0,291.5 350.6,292.5 353.2,293.7 355.8,295.0 358.4,296.5 360.9,298.2 363.4,300.0 365.8,302.0 368.2,304.1 370.5,306.3 372.7,308.7 374.8,311.1 376.8,313.7 378.7,316.3 380.5,319.0 382.1,321.8 383.6,324.6 385.0,327.4 386.2,330.3 387.3,333.2 388.2,336.0 389.0,338.9 389.6,341.8 390.0,344.6 390.2,347.3 390.3,350.0" fill="none" stroke="#9a8a6a" stroke-width="2.6" stroke-dasharray="0.4 0.9" opacity="0.9"/>
<polyline points="392.3,350.9 391.5,358.9 389.1,365.9 385.3,371.6 380.1,375.9 373.8,378.6 366.6,379.5 358.7,378.6 350.6,375.9 342.5,371.7 334.6,365.9 327.4,358.9 321.1,350.9 315.9,342.3 312.1,333.2 309.7,324.2 308.9,315.5 309.7,307.5 312.1,300.5 315.9,294.8 321.1,290.5 327.4,287.8 334.6,286.9 342.5,287.8 350.6,290.4 358.7,294.7 366.6,300.5 373.8,307.5 380.1,315.5 385.3,324.1 389.1,333.2 391.5,342.2 392.3,350.9" fill="none" stroke="#1d160f" stroke-width="0.875" stroke-linecap="round" stroke-linejoin="round" />
<polyline points="388.4,349.2 387.6,356.4 385.5,362.8 382.0,368.0 377.3,371.9 371.6,374.3 365.0,375.1 358.0,374.3 350.6,371.9 343.2,368.0 336.2,362.8 329.6,356.5 323.9,349.3 319.2,341.4 315.7,333.2 313.6,325.1 312.8,317.2 313.6,310.0 315.7,303.6 319.2,298.4 323.9,294.5 329.6,292.1 336.2,291.3 343.2,292.1 350.6,294.5 358.0,298.4 365.0,303.6 371.6,309.9 377.3,317.1 382.0,325.0 385.5,333.2 387.6,341.3 388.4,349.2" fill="none" stroke="#1d160f" stroke-width="0.875" stroke-linecap="round" stroke-linejoin="round" />
<polyline points="386.6,348.5 385.9,355.4 383.9,361.4 380.5,366.4 376.1,370.1 370.6,372.4 364.4,373.1 357.6,372.4 350.6,370.1 343.6,366.4 336.8,361.5 330.6,355.4 325.1,348.5 320.7,341.0 317.3,333.2 315.3,325.4 314.6,317.9 315.3,311.0 317.3,305.0 320.7,300.0 325.1,296.3 330.6,294.0 336.8,293.3 343.6,294.0 350.6,296.3 357.6,300.0 364.4,304.9 370.6,311.0 376.1,317.9 380.5,325.4 383.9,333.2 385.9,341.0 386.6,348.5" fill="none" stroke="#1d160f" stroke-width="0.7000000000000001" stroke-linecap="round" stroke-linejoin="round" />
<polygon points="362.5,338.2 362.4,339.8 362.0,341.2 361.6,342.5 360.9,343.6 360.0,344.6 359.0,345.3 357.8,345.9 356.5,346.2 355.1,346.3 353.7,346.2 352.1,345.9 350.6,345.3 349.1,344.6 347.5,343.6 346.1,342.5 344.7,341.2 343.4,339.8 342.2,338.2 341.2,336.6 340.3,334.9 339.6,333.2 339.2,331.5 338.8,329.8 338.7,328.2 338.8,326.6 339.2,325.2 339.6,323.9 340.3,322.8 341.2,321.8 342.2,321.1 343.4,320.5 344.7,320.2 346.1,320.1 347.5,320.2 349.1,320.5 350.6,321.1 352.1,321.8 353.7,322.8 355.1,323.9 356.5,325.2 357.8,326.6 359.0,328.2 360.0,329.8 360.9,331.5 361.6,333.2 362.0,334.9 362.4,336.6" fill="#dac8a4" stroke="#1d160f" stroke-width="1.2249999999999999" stroke-linejoin="round" />
<polygon points="358.9,336.7 358.9,337.8 358.7,338.8 358.3,339.7 357.8,340.5 357.2,341.2 356.5,341.7 355.7,342.1 354.8,342.4 353.8,342.5 352.8,342.4 351.7,342.1 350.6,341.8 349.5,341.2 348.4,340.5 347.4,339.7 346.4,338.8 345.5,337.8 344.7,336.7 344.0,335.6 343.4,334.4 342.9,333.2 342.5,332.0 342.3,330.8 342.3,329.7 342.3,328.6 342.5,327.6 342.9,326.7 343.4,325.9 344.0,325.2 344.7,324.7 345.5,324.3 346.4,324.0 347.4,323.9 348.4,324.0 349.5,324.3 350.6,324.6 351.7,325.2 352.8,325.9 353.8,326.7 354.8,327.6 355.7,328.6 356.5,329.7 357.2,330.8 357.8,332.0 358.3,333.2 358.7,334.4 358.9,335.6" fill="#c4af89" stroke="#1d160f" stroke-width="1.2249999999999999" stroke-linejoin="round" />
<polygon points="355.0,335.1 355.0,335.6 354.8,336.2 354.7,336.6 354.4,337.1 354.1,337.4 353.7,337.7 353.3,337.9 352.8,338.0 352.3,338.1 351.7,338.0 351.2,337.9 350.6,337.7 350.0,337.4 349.5,337.1 348.9,336.6 348.4,336.2 347.9,335.6 347.5,335.1 347.1,334.5 346.8,333.8 346.5,333.2 346.4,332.6 346.2,331.9 346.2,331.3 346.2,330.8 346.4,330.2 346.5,329.8 346.8,329.3 347.1,329.0 347.5,328.7 347.9,328.5 348.4,328.4 348.9,328.3 349.5,328.4 350.0,328.5 350.6,328.7 351.2,329.0 351.7,329.3 352.3,329.8 352.8,330.2 353.3,330.8 353.7,331.3 354.1,331.9 354.4,332.6 354.7,333.2 354.8,333.8 355.0,334.5" fill="#4a3828" stroke="#1d160f" stroke-width="1.05" stroke-linejoin="round" />
<polygon points="390.0,301.6 399.0,297.0 412.0,303.0 420.0,299.0 424.0,309.0 415.0,321.0 404.0,323.6 397.0,321.0" fill="#c4af89" stroke="#1d160f" stroke-width="1.4000000000000001" stroke-linejoin="round" />
<path d="M394,304 l8,4 l9,-3 M398,310 q6,-5 12,0 M400,318 l12,-4 M409,300 l5,12 M396,299 l4,9" fill="none" stroke="#1d160f" stroke-width="1.4000000000000001" stroke-linejoin="round" stroke-linecap="round" />
<polygon points="398.6,300.6 398.6,300.9 398.5,301.3 398.4,301.5 398.3,301.8 398.1,302.1 398.0,302.3 397.7,302.4 397.5,302.6 397.2,302.6 397.0,302.7 396.7,302.7 396.4,302.6 396.1,302.5 395.8,302.4 395.6,302.2 395.3,302.0 395.1,301.7 394.8,301.4 394.7,301.1 394.5,300.8 394.4,300.4 394.3,300.1 394.2,299.7 394.2,299.4 394.2,299.1 394.3,298.7 394.4,298.5 394.5,298.2 394.7,297.9 394.8,297.7 395.1,297.6 395.3,297.4 395.6,297.4 395.8,297.3 396.1,297.3 396.4,297.4 396.7,297.5 397.0,297.6 397.2,297.8 397.5,298.0 397.7,298.3 398.0,298.6 398.1,298.9 398.3,299.2 398.4,299.6 398.5,299.9 398.6,300.3" fill="#dac8a4" stroke="#1d160f" stroke-width="1.4000000000000001" stroke-linejoin="round" />
<polyline points="343.0,323.0 402.0,317.2" fill="none" stroke="#7a6848" stroke-width="6.8" stroke-linejoin="round"/>
<polyline points="343.0,323.0 402.0,317.2" fill="none" stroke="#dcc394" stroke-width="6.0" stroke-linecap="round" stroke-linejoin="round" stroke-linecap="butt"/>
<polygon points="343.2,324.8 343.2,325.4 343.1,326.0 342.9,326.5 342.7,327.0 342.4,327.5 342.1,327.9 341.7,328.2 341.3,328.5 340.9,328.7 340.4,328.8 339.9,328.8 339.4,328.8 338.9,328.7 338.4,328.5 337.9,328.2 337.5,327.9 337.1,327.5 336.7,327.0 336.4,326.5 336.1,326.0 335.9,325.4 335.7,324.8 335.6,324.2 335.6,323.6 335.6,323.0 335.7,322.4 335.9,321.9 336.1,321.4 336.4,320.9 336.7,320.5 337.1,320.2 337.5,319.9 337.9,319.7 338.4,319.6 338.9,319.6 339.4,319.6 339.9,319.7 340.4,319.9 340.9,320.2 341.3,320.5 341.7,320.9 342.1,321.4 342.4,321.9 342.7,322.4 342.9,323.0 343.1,323.6 343.2,324.2" fill="#e8d9b9" stroke="#1d160f" stroke-width="1.2249999999999999" stroke-linejoin="round" />
<polygon points="344.6,324.1 344.6,324.6 344.5,325.1 344.4,325.5 344.2,325.9 343.9,326.3 343.7,326.6 343.3,326.9 343.0,327.1 342.6,327.3 342.2,327.4 341.8,327.4 341.4,327.4 341.0,327.3 340.6,327.1 340.2,326.9 339.8,326.6 339.5,326.3 339.1,325.9 338.9,325.5 338.6,325.1 338.4,324.6 338.3,324.1 338.2,323.6 338.2,323.1 338.2,322.6 338.3,322.1 338.4,321.7 338.6,321.3 338.9,320.9 339.1,320.6 339.5,320.3 339.8,320.1 340.2,319.9 340.6,319.8 341.0,319.8 341.4,319.8 341.8,319.9 342.2,320.1 342.6,320.3 343.0,320.6 343.3,320.9 343.7,321.3 343.9,321.7 344.2,322.1 344.4,322.6 344.5,323.1 344.6,323.6" fill="#dac8a4" stroke="#1d160f" stroke-width="1.2249999999999999" stroke-linejoin="round" />
<polygon points="409.4,318.0 409.4,318.8 409.2,319.5 409.0,320.2 408.8,320.8 408.4,321.4 408.0,322.0 407.5,322.4 407.0,322.8 406.4,323.1 405.8,323.3 405.2,323.4 404.6,323.4 404.0,323.3 403.4,323.1 402.8,322.8 402.2,322.4 401.7,322.0 401.2,321.4 400.8,320.8 400.4,320.2 400.2,319.5 400.0,318.7 399.8,318.0 399.8,317.2 399.8,316.4 400.0,315.7 400.2,315.0 400.4,314.4 400.8,313.8 401.2,313.2 401.7,312.8 402.2,312.4 402.8,312.1 403.4,311.9 404.0,311.8 404.6,311.8 405.2,311.9 405.8,312.1 406.4,312.4 407.0,312.8 407.5,313.2 408.0,313.8 408.4,314.4 408.8,315.0 409.0,315.7 409.2,316.5 409.4,317.2" fill="#e8d9b9" stroke="#1d160f" stroke-width="1.4000000000000001" stroke-linejoin="round" />
<polygon points="410.2,317.5 410.2,318.1 410.1,318.7 409.9,319.2 409.7,319.8 409.5,320.2 409.1,320.7 408.8,321.0 408.4,321.3 408.0,321.6 407.5,321.7 407.1,321.8 406.6,321.8 406.1,321.7 405.7,321.6 405.2,321.3 404.8,321.0 404.4,320.7 404.1,320.2 403.7,319.8 403.5,319.2 403.3,318.7 403.1,318.1 403.0,317.5 403.0,316.9 403.0,316.3 403.1,315.7 403.3,315.2 403.5,314.6 403.7,314.2 404.1,313.7 404.4,313.4 404.8,313.1 405.2,312.8 405.7,312.7 406.1,312.6 406.6,312.6 407.1,312.7 407.5,312.8 408.0,313.1 408.4,313.4 408.8,313.7 409.1,314.2 409.5,314.6 409.7,315.2 409.9,315.7 410.1,316.3 410.2,316.9" fill="#dac8a4" stroke="#1d160f" stroke-width="1.2249999999999999" stroke-linejoin="round" />
<polygon points="410.4,317.2 410.4,317.6 410.3,318.0 410.2,318.4 410.1,318.8 409.9,319.1 409.7,319.4 409.5,319.7 409.2,319.9 408.9,320.0 408.6,320.1 408.3,320.2 408.0,320.2 407.7,320.1 407.4,320.0 407.1,319.9 406.8,319.7 406.5,319.4 406.3,319.1 406.1,318.8 405.9,318.4 405.8,318.0 405.7,317.6 405.6,317.2 405.6,316.8 405.6,316.4 405.7,316.0 405.8,315.6 405.9,315.2 406.1,314.9 406.3,314.6 406.5,314.3 406.8,314.1 407.1,314.0 407.4,313.9 407.7,313.8 408.0,313.8 408.3,313.9 408.6,314.0 408.9,314.1 409.2,314.3 409.5,314.6 409.7,314.9 409.9,315.2 410.1,315.6 410.2,316.0 410.3,316.4 410.4,316.8" fill="#e8d9b9" stroke="#1d160f" stroke-width="1.05" stroke-linejoin="round" />
<polygon points="410.2,316.9 410.2,317.1 410.2,317.3 410.1,317.5 410.0,317.7 410.0,317.9 409.8,318.1 409.7,318.2 409.6,318.3 409.5,318.4 409.3,318.5 409.2,318.5 409.0,318.5 408.8,318.5 408.7,318.4 408.5,318.3 408.4,318.2 408.3,318.1 408.2,317.9 408.0,317.8 408.0,317.6 407.9,317.4 407.8,317.1 407.8,316.9 407.8,316.7 407.8,316.5 407.8,316.3 407.9,316.1 408.0,315.9 408.0,315.7 408.2,315.5 408.3,315.4 408.4,315.3 408.5,315.2 408.7,315.1 408.8,315.1 409.0,315.1 409.2,315.1 409.3,315.2 409.5,315.3 409.6,315.4 409.7,315.5 409.8,315.7 410.0,315.8 410.0,316.0 410.1,316.2 410.2,316.5 410.2,316.7" fill="#c4af89" stroke="#1d160f" stroke-width="0.875" stroke-linejoin="round" />
<rect x="0" y="530.8" width="960" height="27.2" fill="#f0f0f0"/>
<rect x="0" y="530.8" width="83" height="0.7" fill="#dadada"/>
<rect x="932" y="530" width="28" height="1.2" fill="#f4f4f4"/>
<rect x="1.5" y="532" width="13.5" height="3.4" rx="1.4" fill="#c4c4c4"/>
<rect x="5.4" y="545.9" width="1.2" height="7.2" fill="#4a4a4a"/><path d="M12.6,545.9 V553.1 L7,549.5Z" fill="#4a4a4a"/>
<path d="M26.6,545.7 V553.3 L20.8,549.5Z" fill="#4a4a4a"/><rect x="27.4" y="547.5" width="1.3" height="4" fill="#4a4a4a"/>
<path d="M37.2,544.9 V554.1 L44.8,549.5Z" fill="#4a4a4a"/>
<path d="M54.4,545.7 V553.3 L60.2,549.5Z" fill="#4a4a4a"/><rect x="52.3" y="547.5" width="1.3" height="4" fill="#4a4a4a"/>
<rect x="74.6" y="545.9" width="1.2" height="7.2" fill="#4a4a4a"/><path d="M68.6,545.9 V553.1 L74.2,549.5Z" fill="#4a4a4a"/>
<rect x="96" y="555.4" width="824" height="0.9" fill="#bdbdbd"/>
<rect x="96" y="556.3" width="824" height="1.7" fill="#e2e2e2"/>
<rect x="96.00" y="553.2" width="0.6" height="2.4" fill="#bdbdbd"/>
<rect x="91.7" y="542.0" width="8.4" height="8.6" fill="#fcfcfc" stroke="#b8c4d0" stroke-width="0.5"/><circle cx="91.7" cy="542.0" r="0.75" fill="#4f9be0"/><circle cx="100.1" cy="542.0" r="0.75" fill="#4f9be0"/><circle cx="91.7" cy="550.6" r="0.75" fill="#4f9be0"/><circle cx="93.89999999999999" cy="544.2" r="0.75" fill="#4f9be0"/><circle cx="97.7" cy="544.2" r="0.75" fill="#4f9be0"/><circle cx="93.89999999999999" cy="548.2" r="0.75" fill="#4f9be0"/><path d="M93.89999999999999,544.2 h3.8 q0,3.6 -3.8,4z" fill="none" stroke="#9a9a9a" stroke-width="0.6"/><path d="M96.7,550.4 L99.89999999999999,547.0 L101.2,548.2 L97.89999999999999,551.5Z" fill="#f0b43c"/><path d="M99.7,547.2 L100.7,546.2 L102.0,547.4 L101.0,548.4Z" fill="#e85a4a"/><path d="M96.7,550.4 L97.89999999999999,551.5 L96.1,551.8000000000001Z" fill="#555"/>
<rect x="111.17" y="553.2" width="0.6" height="2.4" fill="#bdbdbd"/>
<path d="M107.27,551.5 h6.4 l2,-1.6 h-6.4z" fill="#b4b4b4"/><path d="M107.07,543.8000000000001 L109.27,542.0 H115.27 V549.2 L113.27,551.0 H107.07Z" fill="#5ea8e8"/><path d="M107.07,543.8000000000001 L109.27,542.0 H115.27 L113.27,543.8000000000001Z" fill="#84c0f2"/><path d="M113.27,543.8000000000001 L115.27,542.0 V549.2 L113.27,551.0Z" fill="#4a92d6"/><path d="M116.67,542.2 V549.0" stroke="#8e8e8e" stroke-width="0.8"/>
<rect x="126.34" y="553.2" width="0.6" height="2.4" fill="#bdbdbd"/>
<circle cx="124.64" cy="544.2" r="2.4" fill="#d8d8d8" stroke="#7a7a7a" stroke-width="0.6"/><rect x="127.24" y="547.0" width="4.4" height="4" rx="0.8" fill="#4f9be0"/><path d="M123.64,549.0 q1,1.6 2.6,0.6" stroke="#333" stroke-width="0.7" fill="none"/>
<rect x="141.51" y="553.2" width="0.6" height="2.4" fill="#bdbdbd"/>
<rect x="137.21" y="542.0" width="8.4" height="8.6" fill="#fcfcfc" stroke="#b8c4d0" stroke-width="0.5"/><circle cx="137.21" cy="542.0" r="0.75" fill="#4f9be0"/><circle cx="145.61" cy="542.0" r="0.75" fill="#4f9be0"/><circle cx="137.21" cy="550.6" r="0.75" fill="#4f9be0"/><circle cx="139.41" cy="544.2" r="0.75" fill="#4f9be0"/><circle cx="143.21" cy="544.2" r="0.75" fill="#4f9be0"/><circle cx="139.41" cy="548.2" r="0.75" fill="#4f9be0"/><path d="M139.41,544.2 h3.8 q0,3.6 -3.8,4z" fill="none" stroke="#9a9a9a" stroke-width="0.6"/><path d="M142.21,550.4 L145.41,547.0 L146.71,548.2 L143.41,551.5Z" fill="#f0b43c"/><path d="M145.21,547.2 L146.21,546.2 L147.51,547.4 L146.51,548.4Z" fill="#e85a4a"/><path d="M142.21,550.4 L143.41,551.5 L141.61,551.8000000000001Z" fill="#555"/>
<rect x="156.68" y="553.2" width="0.6" height="2.4" fill="#bdbdbd"/>
<path d="M152.78,551.5 h6.4 l2,-1.6 h-6.4z" fill="#b4b4b4"/><path d="M152.57999999999998,543.8000000000001 L154.78,542.0 H160.78 V549.2 L158.78,551.0 H152.57999999999998Z" fill="#5ea8e8"/><path d="M152.57999999999998,543.8000000000001 L154.78,542.0 H160.78 L158.78,543.8000000000001Z" fill="#84c0f2"/><path d="M158.78,543.8000000000001 L160.78,542.0 V549.2 L158.78,551.0Z" fill="#4a92d6"/><path d="M162.17999999999998,542.2 V549.0" stroke="#8e8e8e" stroke-width="0.8"/>
<rect x="171.85" y="553.2" width="0.6" height="2.4" fill="#bdbdbd"/>
<rect x="167.55" y="542.0" width="8.4" height="8.6" fill="#fcfcfc" stroke="#b8c4d0" stroke-width="0.5"/><circle cx="167.55" cy="542.0" r="0.75" fill="#4f9be0"/><circle cx="175.95000000000002" cy="542.0" r="0.75" fill="#4f9be0"/><circle cx="167.55" cy="550.6" r="0.75" fill="#4f9be0"/><circle cx="169.75" cy="544.2" r="0.75" fill="#4f9be0"/><circle cx="173.55" cy="544.2" r="0.75" fill="#4f9be0"/><circle cx="169.75" cy="548.2" r="0.75" fill="#4f9be0"/><path d="M169.75,544.2 h3.8 q0,3.6 -3.8,4z" fill="none" stroke="#9a9a9a" stroke-width="0.6"/><path d="M172.55,550.4 L175.75,547.0 L177.05,548.2 L173.75,551.5Z" fill="#f0b43c"/><path d="M175.55,547.2 L176.55,546.2 L177.85,547.4 L176.85,548.4Z" fill="#e85a4a"/><path d="M172.55,550.4 L173.75,551.5 L171.95000000000002,551.8000000000001Z" fill="#555"/>
<rect x="187.02" y="553.2" width="0.6" height="2.4" fill="#bdbdbd"/>
<path d="M183.12,551.5 h6.4 l2,-1.6 h-6.4z" fill="#b4b4b4"/><path d="M182.92,543.8000000000001 L185.12,542.0 H191.12 V549.2 L189.12,551.0 H182.92Z" fill="#5ea8e8"/><path d="M182.92,543.8000000000001 L185.12,542.0 H191.12 L189.12,543.8000000000001Z" fill="#84c0f2"/><path d="M189.12,543.8000000000001 L191.12,542.0 V549.2 L189.12,551.0Z" fill="#4a92d6"/><path d="M192.51999999999998,542.2 V549.0" stroke="#8e8e8e" stroke-width="0.8"/>
<rect x="202.19" y="553.2" width="0.6" height="2.4" fill="#bdbdbd"/>
<path d="M197.89000000000001,550.8000000000001 V545.8000000000001 Q198.29000000000002,542.4 201.89000000000001,542.2 H207.09 V550.8000000000001Z" fill="#e4e4e4" stroke="#8e8e8e" stroke-width="0.6"/><path d="M202.69,542.4 H206.89000000000001 V547.2 Q206.09,543.4 202.69,542.4Z" fill="#4f9be0"/>
<rect x="217.36" y="553.2" width="0.6" height="2.4" fill="#bdbdbd"/>
<rect x="213.06" y="542.0" width="8.4" height="8.6" fill="#fcfcfc" stroke="#b8c4d0" stroke-width="0.5"/><circle cx="213.06" cy="542.0" r="0.75" fill="#4f9be0"/><circle cx="221.46" cy="542.0" r="0.75" fill="#4f9be0"/><circle cx="213.06" cy="550.6" r="0.75" fill="#4f9be0"/><circle cx="215.26" cy="544.2" r="0.75" fill="#4f9be0"/><circle cx="219.06" cy="544.2" r="0.75" fill="#4f9be0"/><circle cx="215.26" cy="548.2" r="0.75" fill="#4f9be0"/><path d="M215.26,544.2 h3.8 q0,3.6 -3.8,4z" fill="none" stroke="#9a9a9a" stroke-width="0.6"/><path d="M218.06,550.4 L221.26,547.0 L222.56,548.2 L219.26,551.5Z" fill="#f0b43c"/><path d="M221.06,547.2 L222.06,546.2 L223.35999999999999,547.4 L222.35999999999999,548.4Z" fill="#e85a4a"/><path d="M218.06,550.4 L219.26,551.5 L217.46,551.8000000000001Z" fill="#555"/>
<rect x="232.53" y="553.2" width="0.6" height="2.4" fill="#bdbdbd"/>
<path d="M228.63000000000002,551.5 h6.4 l2,-1.6 h-6.4z" fill="#b4b4b4"/><path d="M228.43,543.8000000000001 L230.63000000000002,542.0 H236.63000000000002 V549.2 L234.63000000000002,551.0 H228.43Z" fill="#5ea8e8"/><path d="M228.43,543.8000000000001 L230.63000000000002,542.0 H236.63000000000002 L234.63000000000002,543.8000000000001Z" fill="#84c0f2"/><path d="M234.63000000000002,543.8000000000001 L236.63000000000002,542.0 V549.2 L234.63000000000002,551.0Z" fill="#4a92d6"/><path d="M238.03,542.2 V549.0" stroke="#8e8e8e" stroke-width="0.8"/>
<rect x="247.70" y="553.2" width="0.6" height="2.4" fill="#bdbdbd"/>
<path d="M243.6,551.0 V545.0 L245.6,543.0 H251.6 Q252.4,543.0 252.4,544.0 V549.2 L250.6,551.0Z" fill="#dcdcdc" stroke="#7e7e7e" stroke-width="0.65"/><circle cx="251.6" cy="543.2" r="1.7" fill="#f5a623"/>
<rect x="262.87" y="553.2" width="0.6" height="2.4" fill="#bdbdbd"/>
<rect x="258.57" y="542.0" width="8.4" height="8.6" fill="#fcfcfc" stroke="#b8c4d0" stroke-width="0.5"/><circle cx="258.57" cy="542.0" r="0.75" fill="#4f9be0"/><circle cx="266.97" cy="542.0" r="0.75" fill="#4f9be0"/><circle cx="258.57" cy="550.6" r="0.75" fill="#4f9be0"/><circle cx="260.77000000000004" cy="544.2" r="0.75" fill="#4f9be0"/><circle cx="264.57" cy="544.2" r="0.75" fill="#4f9be0"/><circle cx="260.77000000000004" cy="548.2" r="0.75" fill="#4f9be0"/><path d="M260.77000000000004,544.2 h3.8 q0,3.6 -3.8,4z" fill="none" stroke="#9a9a9a" stroke-width="0.6"/><path d="M263.57,550.4 L266.77000000000004,547.0 L268.07,548.2 L264.77000000000004,551.5Z" fill="#f0b43c"/><path d="M266.57,547.2 L267.57,546.2 L268.87,547.4 L267.87,548.4Z" fill="#e85a4a"/><path d="M263.57,550.4 L264.77000000000004,551.5 L262.97,551.8000000000001Z" fill="#555"/>
<rect x="278.04" y="553.2" width="0.6" height="2.4" fill="#bdbdbd"/>
<path d="M274.14,551.5 h6.4 l2,-1.6 h-6.4z" fill="#b4b4b4"/><path d="M273.94,543.8000000000001 L276.14,542.0 H282.14 V549.2 L280.14,551.0 H273.94Z" fill="#5ea8e8"/><path d="M273.94,543.8000000000001 L276.14,542.0 H282.14 L280.14,543.8000000000001Z" fill="#84c0f2"/><path d="M280.14,543.8000000000001 L282.14,542.0 V549.2 L280.14,551.0Z" fill="#4a92d6"/><path d="M283.53999999999996,542.2 V549.0" stroke="#8e8e8e" stroke-width="0.8"/>
<rect x="293.21" y="553.2" width="0.6" height="2.4" fill="#bdbdbd"/>
<path d="M289.11,550.6 V545.2 L291.31,542.6 L293.11,545.2 V548.2Z" fill="#cfcfcf" stroke="#8a8a8a" stroke-width="0.6"/><path d="M297.90999999999997,550.6 V545.2 L295.71,542.6 L293.90999999999997,545.2 V548.2Z" fill="#c2c2c2" stroke="#8a8a8a" stroke-width="0.6"/><path d="M293.51,543.6 V550.2" stroke="#9cc4ec" stroke-width="0.7"/>
<rect x="308.38" y="553.2" width="0.6" height="2.4" fill="#bdbdbd"/>
<path d="M304.28000000000003,550.8000000000001 L308.48,542.0 V550.8000000000001Z" fill="#fafafa" stroke="#9a9a9a" stroke-width="0.6"/><path d="M309.08,542.0 L313.28000000000003,550.8000000000001 H309.08Z" fill="#4f9be0"/>
<rect x="323.55" y="553.2" width="0.6" height="2.4" fill="#bdbdbd"/>
<path d="M319.45000000000005,550.6 V545.2 L321.65000000000003,542.6 L323.45000000000005,545.2 V548.2Z" fill="#cfcfcf" stroke="#8a8a8a" stroke-width="0.6"/><path d="M328.25,550.6 V545.2 L326.05,542.6 L324.25,545.2 V548.2Z" fill="#c2c2c2" stroke="#8a8a8a" stroke-width="0.6"/><path d="M323.85,543.6 V550.2" stroke="#9cc4ec" stroke-width="0.7"/>
<rect x="338.72" y="553.2" width="0.6" height="2.4" fill="#bdbdbd"/>
<path d="M334.62,551.0 V545.0 L336.62,543.0 H342.62 Q343.41999999999996,543.0 343.41999999999996,544.0 V549.2 L341.62,551.0Z" fill="#dcdcdc" stroke="#7e7e7e" stroke-width="0.65"/><circle cx="342.62" cy="543.2" r="1.7" fill="#f5a623"/>
<rect x="353.89" y="553.2" width="0.6" height="2.4" fill="#bdbdbd"/>
<rect x="349.59" y="542.0" width="8.4" height="8.6" fill="#fcfcfc" stroke="#b8c4d0" stroke-width="0.5"/><circle cx="349.59" cy="542.0" r="0.75" fill="#4f9be0"/><circle cx="357.99" cy="542.0" r="0.75" fill="#4f9be0"/><circle cx="349.59" cy="550.6" r="0.75" fill="#4f9be0"/><circle cx="351.79" cy="544.2" r="0.75" fill="#4f9be0"/><circle cx="355.59" cy="544.2" r="0.75" fill="#4f9be0"/><circle cx="351.79" cy="548.2" r="0.75" fill="#4f9be0"/><path d="M351.79,544.2 h3.8 q0,3.6 -3.8,4z" fill="none" stroke="#9a9a9a" stroke-width="0.6"/><path d="M354.59,550.4 L357.79,547.0 L359.09,548.2 L355.79,551.5Z" fill="#f0b43c"/><path d="M357.59,547.2 L358.59,546.2 L359.89,547.4 L358.89,548.4Z" fill="#e85a4a"/><path d="M354.59,550.4 L355.79,551.5 L353.99,551.8000000000001Z" fill="#555"/>
<rect x="369.06" y="553.2" width="0.6" height="2.4" fill="#bdbdbd"/>
<path d="M365.16,551.5 h6.4 l2,-1.6 h-6.4z" fill="#b4b4b4"/><path d="M364.96000000000004,543.8000000000001 L367.16,542.0 H373.16 V549.2 L371.16,551.0 H364.96000000000004Z" fill="#5ea8e8"/><path d="M364.96000000000004,543.8000000000001 L367.16,542.0 H373.16 L371.16,543.8000000000001Z" fill="#84c0f2"/><path d="M371.16,543.8000000000001 L373.16,542.0 V549.2 L371.16,551.0Z" fill="#4a92d6"/><path d="M374.56,542.2 V549.0" stroke="#8e8e8e" stroke-width="0.8"/>
<rect x="384.23" y="553.2" width="0.6" height="2.4" fill="#bdbdbd"/>
<path d="M379.92999999999995,550.8000000000001 V545.8000000000001 Q380.33,542.4 383.92999999999995,542.2 H389.13 V550.8000000000001Z" fill="#e4e4e4" stroke="#8e8e8e" stroke-width="0.6"/><path d="M384.72999999999996,542.4 H388.92999999999995 V547.2 Q388.13,543.4 384.72999999999996,542.4Z" fill="#4f9be0"/>
<rect x="399.40" y="553.2" width="0.6" height="2.4" fill="#bdbdbd"/>
<path d="M395.3,551.0 V545.0 L397.3,543.0 H403.3 Q404.09999999999997,543.0 404.09999999999997,544.0 V549.2 L402.3,551.0Z" fill="#dcdcdc" stroke="#7e7e7e" stroke-width="0.65"/><circle cx="403.3" cy="543.2" r="1.7" fill="#f5a623"/>
<rect x="414.57" y="553.2" width="0.6" height="2.4" fill="#bdbdbd"/>
<rect x="410.27" y="542.2" width="3.4" height="9" fill="#fafafa" stroke="#9a9a9a" stroke-width="0.6"/><rect x="413.87" y="542.0" width="5.6" height="4.2" fill="#4f9be0"/>
<rect x="429.74" y="553.2" width="0.6" height="2.4" fill="#bdbdbd"/>
<rect x="425.44" y="542.0" width="8.4" height="8.6" fill="#fcfcfc" stroke="#b8c4d0" stroke-width="0.5"/><circle cx="425.44" cy="542.0" r="0.75" fill="#4f9be0"/><circle cx="433.84000000000003" cy="542.0" r="0.75" fill="#4f9be0"/><circle cx="425.44" cy="550.6" r="0.75" fill="#4f9be0"/><circle cx="427.64000000000004" cy="544.2" r="0.75" fill="#4f9be0"/><circle cx="431.44" cy="544.2" r="0.75" fill="#4f9be0"/><circle cx="427.64000000000004" cy="548.2" r="0.75" fill="#4f9be0"/><path d="M427.64000000000004,544.2 h3.8 q0,3.6 -3.8,4z" fill="none" stroke="#9a9a9a" stroke-width="0.6"/><path d="M430.44,550.4 L433.64000000000004,547.0 L434.94,548.2 L431.64000000000004,551.5Z" fill="#f0b43c"/><path d="M433.44,547.2 L434.44,546.2 L435.74,547.4 L434.74,548.4Z" fill="#e85a4a"/><path d="M430.44,550.4 L431.64000000000004,551.5 L429.84000000000003,551.8000000000001Z" fill="#555"/>
<rect x="444.91" y="553.2" width="0.6" height="2.4" fill="#bdbdbd"/>
<path d="M441.01,551.5 h6.4 l2,-1.6 h-6.4z" fill="#b4b4b4"/><path d="M440.81,543.8000000000001 L443.01,542.0 H449.01 V549.2 L447.01,551.0 H440.81Z" fill="#5ea8e8"/><path d="M440.81,543.8000000000001 L443.01,542.0 H449.01 L447.01,543.8000000000001Z" fill="#84c0f2"/><path d="M447.01,543.8000000000001 L449.01,542.0 V549.2 L447.01,551.0Z" fill="#4a92d6"/><path d="M450.40999999999997,542.2 V549.0" stroke="#8e8e8e" stroke-width="0.8"/>
<rect x="460.08" y="553.2" width="0.6" height="2.4" fill="#bdbdbd"/>
<rect x="455.78" y="542.2" width="3.4" height="9" fill="#fafafa" stroke="#9a9a9a" stroke-width="0.6"/><rect x="459.38" y="542.0" width="5.6" height="4.2" fill="#4f9be0"/>
<rect x="475.25" y="553.2" width="0.6" height="2.4" fill="#bdbdbd"/>
<path d="M471.15000000000003,550.6 V545.2 L473.35,542.6 L475.15000000000003,545.2 V548.2Z" fill="#cfcfcf" stroke="#8a8a8a" stroke-width="0.6"/><path d="M479.95,550.6 V545.2 L477.75,542.6 L475.95,545.2 V548.2Z" fill="#c2c2c2" stroke="#8a8a8a" stroke-width="0.6"/><path d="M475.55,543.6 V550.2" stroke="#9cc4ec" stroke-width="0.7"/>
<rect x="490.42" y="553.2" width="0.6" height="2.4" fill="#bdbdbd"/>
<path d="M486.32000000000005,550.6 V545.2 L488.52000000000004,542.6 L490.32000000000005,545.2 V548.2Z" fill="#cfcfcf" stroke="#8a8a8a" stroke-width="0.6"/><path d="M495.12,550.6 V545.2 L492.92,542.6 L491.12,545.2 V548.2Z" fill="#c2c2c2" stroke="#8a8a8a" stroke-width="0.6"/><path d="M490.72,543.6 V550.2" stroke="#9cc4ec" stroke-width="0.7"/>
<rect x="505.59" y="553.2" width="0.6" height="2.4" fill="#bdbdbd"/>
<path d="M501.49,551.0 V545.0 L503.49,543.0 H509.49 Q510.28999999999996,543.0 510.28999999999996,544.0 V549.2 L508.49,551.0Z" fill="#dcdcdc" stroke="#7e7e7e" stroke-width="0.65"/><circle cx="509.49" cy="543.2" r="1.7" fill="#f5a623"/>
<rect x="520.76" y="553.2" width="0.6" height="2.4" fill="#bdbdbd"/>
<rect x="516.4599999999999" y="542.0" width="8.4" height="8.6" fill="#fcfcfc" stroke="#b8c4d0" stroke-width="0.5"/><circle cx="516.4599999999999" cy="542.0" r="0.75" fill="#4f9be0"/><circle cx="524.8599999999999" cy="542.0" r="0.75" fill="#4f9be0"/><circle cx="516.4599999999999" cy="550.6" r="0.75" fill="#4f9be0"/><circle cx="518.66" cy="544.2" r="0.75" fill="#4f9be0"/><circle cx="522.4599999999999" cy="544.2" r="0.75" fill="#4f9be0"/><circle cx="518.66" cy="548.2" r="0.75" fill="#4f9be0"/><path d="M518.66,544.2 h3.8 q0,3.6 -3.8,4z" fill="none" stroke="#9a9a9a" stroke-width="0.6"/><path d="M521.4599999999999,550.4 L524.66,547.0 L525.9599999999999,548.2 L522.66,551.5Z" fill="#f0b43c"/><path d="M524.4599999999999,547.2 L525.4599999999999,546.2 L526.76,547.4 L525.76,548.4Z" fill="#e85a4a"/><path d="M521.4599999999999,550.4 L522.66,551.5 L520.8599999999999,551.8000000000001Z" fill="#555"/>
<rect x="535.93" y="553.2" width="0.6" height="2.4" fill="#bdbdbd"/>
<path d="M532.03,551.5 h6.4 l2,-1.6 h-6.4z" fill="#b4b4b4"/><path d="M531.83,543.8000000000001 L534.03,542.0 H540.03 V549.2 L538.03,551.0 H531.83Z" fill="#5ea8e8"/><path d="M531.83,543.8000000000001 L534.03,542.0 H540.03 L538.03,543.8000000000001Z" fill="#84c0f2"/><path d="M538.03,543.8000000000001 L540.03,542.0 V549.2 L538.03,551.0Z" fill="#4a92d6"/><path d="M541.4300000000001,542.2 V549.0" stroke="#8e8e8e" stroke-width="0.8"/>
<rect x="551.10" y="553.2" width="0.6" height="2.4" fill="#bdbdbd"/>
<path d="M547.0,551.0 V545.0 L549.0,543.0 H555.0 Q555.8,543.0 555.8,544.0 V549.2 L554.0,551.0Z" fill="#dcdcdc" stroke="#7e7e7e" stroke-width="0.65"/><circle cx="555.0" cy="543.2" r="1.7" fill="#f5a623"/>
<rect x="566.27" y="553.2" width="0.6" height="2.4" fill="#bdbdbd"/>
<rect x="561.97" y="542.0" width="8.4" height="8.6" fill="#fcfcfc" stroke="#b8c4d0" stroke-width="0.5"/><circle cx="561.97" cy="542.0" r="0.75" fill="#4f9be0"/><circle cx="570.37" cy="542.0" r="0.75" fill="#4f9be0"/><circle cx="561.97" cy="550.6" r="0.75" fill="#4f9be0"/><circle cx="564.1700000000001" cy="544.2" r="0.75" fill="#4f9be0"/><circle cx="567.97" cy="544.2" r="0.75" fill="#4f9be0"/><circle cx="564.1700000000001" cy="548.2" r="0.75" fill="#4f9be0"/><path d="M564.1700000000001,544.2 h3.8 q0,3.6 -3.8,4z" fill="none" stroke="#9a9a9a" stroke-width="0.6"/><path d="M566.97,550.4 L570.1700000000001,547.0 L571.47,548.2 L568.1700000000001,551.5Z" fill="#f0b43c"/><path d="M569.97,547.2 L570.97,546.2 L572.2700000000001,547.4 L571.2700000000001,548.4Z" fill="#e85a4a"/><path d="M566.97,550.4 L568.1700000000001,551.5 L566.37,551.8000000000001Z" fill="#555"/>
<rect x="581.44" y="553.2" width="0.6" height="2.4" fill="#bdbdbd"/>
<path d="M577.54,551.5 h6.4 l2,-1.6 h-6.4z" fill="#b4b4b4"/><path d="M577.34,543.8000000000001 L579.54,542.0 H585.54 V549.2 L583.54,551.0 H577.34Z" fill="#5ea8e8"/><path d="M577.34,543.8000000000001 L579.54,542.0 H585.54 L583.54,543.8000000000001Z" fill="#84c0f2"/><path d="M583.54,543.8000000000001 L585.54,542.0 V549.2 L583.54,551.0Z" fill="#4a92d6"/><path d="M586.94,542.2 V549.0" stroke="#8e8e8e" stroke-width="0.8"/>
<rect x="596.61" y="553.2" width="0.6" height="2.4" fill="#bdbdbd"/>
<rect x="592.31" y="542.0" width="8.4" height="8.6" fill="#fcfcfc" stroke="#b8c4d0" stroke-width="0.5"/><circle cx="592.31" cy="542.0" r="0.75" fill="#4f9be0"/><circle cx="600.7099999999999" cy="542.0" r="0.75" fill="#4f9be0"/><circle cx="592.31" cy="550.6" r="0.75" fill="#4f9be0"/><circle cx="594.51" cy="544.2" r="0.75" fill="#4f9be0"/><circle cx="598.31" cy="544.2" r="0.75" fill="#4f9be0"/><circle cx="594.51" cy="548.2" r="0.75" fill="#4f9be0"/><path d="M594.51,544.2 h3.8 q0,3.6 -3.8,4z" fill="none" stroke="#9a9a9a" stroke-width="0.6"/><path d="M597.31,550.4 L600.51,547.0 L601.81,548.2 L598.51,551.5Z" fill="#f0b43c"/><path d="M600.31,547.2 L601.31,546.2 L602.61,547.4 L601.61,548.4Z" fill="#e85a4a"/><path d="M597.31,550.4 L598.51,551.5 L596.7099999999999,551.8000000000001Z" fill="#555"/>
<rect x="611.78" y="553.2" width="0.6" height="2.4" fill="#bdbdbd"/>
<path d="M607.88,551.5 h6.4 l2,-1.6 h-6.4z" fill="#b4b4b4"/><path d="M607.6800000000001,543.8000000000001 L609.88,542.0 H615.88 V549.2 L613.88,551.0 H607.6800000000001Z" fill="#5ea8e8"/><path d="M607.6800000000001,543.8000000000001 L609.88,542.0 H615.88 L613.88,543.8000000000001Z" fill="#84c0f2"/><path d="M613.88,543.8000000000001 L615.88,542.0 V549.2 L613.88,551.0Z" fill="#4a92d6"/><path d="M617.2800000000001,542.2 V549.0" stroke="#8e8e8e" stroke-width="0.8"/>
<rect x="626.95" y="553.2" width="0.6" height="2.4" fill="#bdbdbd"/>
<rect x="622.65" y="542.0" width="8.4" height="8.6" fill="#fcfcfc" stroke="#b8c4d0" stroke-width="0.5"/><circle cx="622.65" cy="542.0" r="0.75" fill="#4f9be0"/><circle cx="631.05" cy="542.0" r="0.75" fill="#4f9be0"/><circle cx="622.65" cy="550.6" r="0.75" fill="#4f9be0"/><circle cx="624.85" cy="544.2" r="0.75" fill="#4f9be0"/><circle cx="628.65" cy="544.2" r="0.75" fill="#4f9be0"/><circle cx="624.85" cy="548.2" r="0.75" fill="#4f9be0"/><path d="M624.85,544.2 h3.8 q0,3.6 -3.8,4z" fill="none" stroke="#9a9a9a" stroke-width="0.6"/><path d="M627.65,550.4 L630.85,547.0 L632.15,548.2 L628.85,551.5Z" fill="#f0b43c"/><path d="M630.65,547.2 L631.65,546.2 L632.95,547.4 L631.95,548.4Z" fill="#e85a4a"/><path d="M627.65,550.4 L628.85,551.5 L627.05,551.8000000000001Z" fill="#555"/>
<rect x="642.12" y="553.2" width="0.6" height="2.4" fill="#bdbdbd"/>
<path d="M638.2199999999999,551.5 h6.4 l2,-1.6 h-6.4z" fill="#b4b4b4"/><path d="M638.02,543.8000000000001 L640.2199999999999,542.0 H646.2199999999999 V549.2 L644.2199999999999,551.0 H638.02Z" fill="#5ea8e8"/><path d="M638.02,543.8000000000001 L640.2199999999999,542.0 H646.2199999999999 L644.2199999999999,543.8000000000001Z" fill="#84c0f2"/><path d="M644.2199999999999,543.8000000000001 L646.2199999999999,542.0 V549.2 L644.2199999999999,551.0Z" fill="#4a92d6"/><path d="M647.62,542.2 V549.0" stroke="#8e8e8e" stroke-width="0.8"/>
<rect x="657.29" y="553.2" width="0.6" height="2.4" fill="#bdbdbd"/>
<path d="M652.99,550.8000000000001 V545.8000000000001 Q653.39,542.4 656.99,542.2 H662.19 V550.8000000000001Z" fill="#e4e4e4" stroke="#8e8e8e" stroke-width="0.6"/><path d="M657.7900000000001,542.4 H661.99 V547.2 Q661.19,543.4 657.7900000000001,542.4Z" fill="#4f9be0"/>
<rect x="672.46" y="553.2" width="0.6" height="2.4" fill="#bdbdbd"/>
<path d="M668.36,550.6 V545.2 L670.56,542.6 L672.36,545.2 V548.2Z" fill="#cfcfcf" stroke="#8a8a8a" stroke-width="0.6"/><path d="M677.16,550.6 V545.2 L674.96,542.6 L673.16,545.2 V548.2Z" fill="#c2c2c2" stroke="#8a8a8a" stroke-width="0.6"/><path d="M672.76,543.6 V550.2" stroke="#9cc4ec" stroke-width="0.7"/>
<rect x="687.63" y="553.2" width="0.6" height="2.4" fill="#bdbdbd"/>
<path d="M683.53,551.0 V545.0 L685.53,543.0 H691.53 Q692.3299999999999,543.0 692.3299999999999,544.0 V549.2 L690.53,551.0Z" fill="#dcdcdc" stroke="#7e7e7e" stroke-width="0.65"/><circle cx="691.53" cy="543.2" r="1.7" fill="#f5a623"/>
<rect x="702.80" y="553.2" width="0.6" height="2.4" fill="#bdbdbd"/>
<rect x="698.5" y="542.0" width="8.4" height="8.6" fill="#fcfcfc" stroke="#b8c4d0" stroke-width="0.5"/><circle cx="698.5" cy="542.0" r="0.75" fill="#4f9be0"/><circle cx="706.9" cy="542.0" r="0.75" fill="#4f9be0"/><circle cx="698.5" cy="550.6" r="0.75" fill="#4f9be0"/><circle cx="700.7" cy="544.2" r="0.75" fill="#4f9be0"/><circle cx="704.5" cy="544.2" r="0.75" fill="#4f9be0"/><circle cx="700.7" cy="548.2" r="0.75" fill="#4f9be0"/><path d="M700.7,544.2 h3.8 q0,3.6 -3.8,4z" fill="none" stroke="#9a9a9a" stroke-width="0.6"/><path d="M703.5,550.4 L706.7,547.0 L708.0,548.2 L704.7,551.5Z" fill="#f0b43c"/><path d="M706.5,547.2 L707.5,546.2 L708.8000000000001,547.4 L707.8000000000001,548.4Z" fill="#e85a4a"/><path d="M703.5,550.4 L704.7,551.5 L702.9,551.8000000000001Z" fill="#555"/>
<rect x="717.97" y="553.2" width="0.6" height="2.4" fill="#bdbdbd"/>
<path d="M714.0699999999999,551.5 h6.4 l2,-1.6 h-6.4z" fill="#b4b4b4"/><path d="M713.87,543.8000000000001 L716.0699999999999,542.0 H722.0699999999999 V549.2 L720.0699999999999,551.0 H713.87Z" fill="#5ea8e8"/><path d="M713.87,543.8000000000001 L716.0699999999999,542.0 H722.0699999999999 L720.0699999999999,543.8000000000001Z" fill="#84c0f2"/><path d="M720.0699999999999,543.8000000000001 L722.0699999999999,542.0 V549.2 L720.0699999999999,551.0Z" fill="#4a92d6"/><path d="M723.47,542.2 V549.0" stroke="#8e8e8e" stroke-width="0.8"/>
<rect x="733.14" y="553.2" width="0.6" height="2.4" fill="#bdbdbd"/>
<rect x="728.84" y="542.0" width="8.4" height="8.6" fill="#fcfcfc" stroke="#b8c4d0" stroke-width="0.5"/><circle cx="728.84" cy="542.0" r="0.75" fill="#4f9be0"/><circle cx="737.24" cy="542.0" r="0.75" fill="#4f9be0"/><circle cx="728.84" cy="550.6" r="0.75" fill="#4f9be0"/><circle cx="731.0400000000001" cy="544.2" r="0.75" fill="#4f9be0"/><circle cx="734.84" cy="544.2" r="0.75" fill="#4f9be0"/><circle cx="731.0400000000001" cy="548.2" r="0.75" fill="#4f9be0"/><path d="M731.0400000000001,544.2 h3.8 q0,3.6 -3.8,4z" fill="none" stroke="#9a9a9a" stroke-width="0.6"/><path d="M733.84,550.4 L737.0400000000001,547.0 L738.34,548.2 L735.0400000000001,551.5Z" fill="#f0b43c"/><path d="M736.84,547.2 L737.84,546.2 L739.1400000000001,547.4 L738.1400000000001,548.4Z" fill="#e85a4a"/><path d="M733.84,550.4 L735.0400000000001,551.5 L733.24,551.8000000000001Z" fill="#555"/>
<rect x="748.31" y="553.2" width="0.6" height="2.4" fill="#bdbdbd"/>
<path d="M744.41,551.5 h6.4 l2,-1.6 h-6.4z" fill="#b4b4b4"/><path d="M744.21,543.8000000000001 L746.41,542.0 H752.41 V549.2 L750.41,551.0 H744.21Z" fill="#5ea8e8"/><path d="M744.21,543.8000000000001 L746.41,542.0 H752.41 L750.41,543.8000000000001Z" fill="#84c0f2"/><path d="M750.41,543.8000000000001 L752.41,542.0 V549.2 L750.41,551.0Z" fill="#4a92d6"/><path d="M753.8100000000001,542.2 V549.0" stroke="#8e8e8e" stroke-width="0.8"/>
<rect x="763.48" y="553.2" width="0.6" height="2.4" fill="#bdbdbd"/>
<ellipse cx="763.78" cy="546.6" rx="4" ry="2.6" transform="rotate(-35 763.78 546.6)" fill="none" stroke="#4caf50" stroke-width="1"/><path d="M760.78,549.6 L766.78,543.2" stroke="#f0a030" stroke-width="1.2"/>
<rect x="778.65" y="553.2" width="0.6" height="2.4" fill="#bdbdbd"/>
<path d="M774.5500000000001,547.6 L778.95,543.0 L783.35,547.6 L778.95,551.2Z" fill="#e8804a"/><path d="M774.5500000000001,547.6 L778.95,551.2 L783.35,547.6 V549.0 L778.95,551.6 L774.5500000000001,549.0Z" fill="#b8b8b8"/><circle cx="779.35" cy="547.2" r="1.3" fill="#fbe29a"/>
<rect x="793.82" y="553.2" width="0.6" height="2.4" fill="#bdbdbd"/>
<rect x="789.52" y="542.0" width="8.4" height="8.6" fill="#fcfcfc" stroke="#b8c4d0" stroke-width="0.5"/><circle cx="789.52" cy="542.0" r="0.75" fill="#4f9be0"/><circle cx="797.92" cy="542.0" r="0.75" fill="#4f9be0"/><circle cx="789.52" cy="550.6" r="0.75" fill="#4f9be0"/><circle cx="791.72" cy="544.2" r="0.75" fill="#4f9be0"/><circle cx="795.52" cy="544.2" r="0.75" fill="#4f9be0"/><circle cx="791.72" cy="548.2" r="0.75" fill="#4f9be0"/><path d="M791.72,544.2 h3.8 q0,3.6 -3.8,4z" fill="none" stroke="#9a9a9a" stroke-width="0.6"/><path d="M794.52,550.4 L797.72,547.0 L799.02,548.2 L795.72,551.5Z" fill="#f0b43c"/><path d="M797.52,547.2 L798.52,546.2 L799.82,547.4 L798.82,548.4Z" fill="#e85a4a"/><path d="M794.52,550.4 L795.72,551.5 L793.92,551.8000000000001Z" fill="#555"/>
<rect x="808.99" y="553.2" width="0.6" height="2.4" fill="#bdbdbd"/>
<path d="M804.49,545.6 Q804.49,543.0 809.29,543.6 Q814.0899999999999,543.0 814.0899999999999,545.6 V548.8000000000001 Q814.0899999999999,551.0 809.29,550.2 Q804.49,551.0 804.49,548.8000000000001Z" fill="#4f9be0"/><ellipse cx="809.29" cy="543.6" rx="4" ry="1.1" fill="#e8e8e8" stroke="#8a8a8a" stroke-width="0.5"/>
<rect x="824.16" y="553.2" width="0.6" height="2.4" fill="#bdbdbd"/>
<path d="M820.0600000000001,550.8000000000001 L824.26,542.0 V550.8000000000001Z" fill="#fafafa" stroke="#9a9a9a" stroke-width="0.6"/><path d="M824.86,542.0 L829.0600000000001,550.8000000000001 H824.86Z" fill="#4f9be0"/>
<rect x="839.33" y="553.2" width="0.6" height="2.4" fill="#bdbdbd"/>
<path d="M839.03,542.0 h5.4 v5.4 h-5.4z" fill="#3f8ad4"/><path d="M834.83,545.6 h6 v5.8 h-6z" fill="#5aa5e8"/><path d="M834.83,545.6 l1.6,-1.4 h2.6 v1.4z" fill="#4f9be0"/>
<rect x="854.50" y="553.2" width="0.6" height="2.4" fill="#bdbdbd"/>
<path d="M850.4,550.6 V545.2 L852.5999999999999,542.6 L854.4,545.2 V548.2Z" fill="#cfcfcf" stroke="#8a8a8a" stroke-width="0.6"/><path d="M859.1999999999999,550.6 V545.2 L857.0,542.6 L855.1999999999999,545.2 V548.2Z" fill="#c2c2c2" stroke="#8a8a8a" stroke-width="0.6"/><path d="M854.8,543.6 V550.2" stroke="#9cc4ec" stroke-width="0.7"/>
<rect x="869.67" y="553.2" width="0.6" height="2.4" fill="#bdbdbd"/>
<rect x="865.57" y="542.2" width="4.2" height="4.4" rx="1" fill="#e2e2e2" stroke="#6e6e6e" stroke-width="0.65"/><rect x="870.1700000000001" y="546.6" width="4.4" height="4.4" rx="1" fill="#e2e2e2" stroke="#6e6e6e" stroke-width="0.65"/><path d="M866.37,548.2 q0.6,2 2.6,1.6" stroke="#333" stroke-width="0.8" fill="none"/>
<rect x="884.84" y="553.2" width="0.6" height="2.4" fill="#bdbdbd"/>
<rect x="880.74" y="542.2" width="4.2" height="4.4" rx="1" fill="#e2e2e2" stroke="#6e6e6e" stroke-width="0.65"/><rect x="885.34" y="546.6" width="4.4" height="4.4" rx="1" fill="#e2e2e2" stroke="#6e6e6e" stroke-width="0.65"/><path d="M881.54,548.2 q0.6,2 2.6,1.6" stroke="#333" stroke-width="0.8" fill="none"/>
<rect x="900.01" y="553.2" width="0.6" height="2.4" fill="#bdbdbd"/>
<rect x="895.91" y="542.2" width="4.2" height="4.4" rx="1" fill="#e2e2e2" stroke="#6e6e6e" stroke-width="0.65"/><rect x="900.51" y="546.6" width="4.4" height="4.4" rx="1" fill="#e2e2e2" stroke="#6e6e6e" stroke-width="0.65"/><path d="M896.7099999999999,548.2 q0.6,2 2.6,1.6" stroke="#333" stroke-width="0.8" fill="none"/>
<rect x="915.18" y="553.2" width="0.6" height="2.4" fill="#bdbdbd"/>
<path d="M911.08,550.6 V545.2 L913.28,542.6 L915.08,545.2 V548.2Z" fill="#cfcfcf" stroke="#8a8a8a" stroke-width="0.6"/><path d="M919.88,550.6 V545.2 L917.6800000000001,542.6 L915.88,545.2 V548.2Z" fill="#c2c2c2" stroke="#8a8a8a" stroke-width="0.6"/><path d="M915.48,543.6 V550.2" stroke="#9cc4ec" stroke-width="0.7"/>
<circle cx="922.5" cy="556.6" r="0.5" fill="#999"/><circle cx="924.5" cy="556.6" r="0.5" fill="#999"/>
<polygon points="951.57,548.99 951.57,550.01 949.98,550.59 949.70,551.26 950.42,552.80 949.70,553.52 948.16,552.80 947.49,553.08 946.91,554.67 945.89,554.67 945.31,553.08 944.64,552.80 943.10,553.52 942.38,552.80 943.10,551.26 942.82,550.59 941.23,550.01 941.23,548.99 942.82,548.41 943.10,547.74 942.38,546.20 943.10,545.48 944.64,546.20 945.31,545.92 945.89,544.33 946.91,544.33 947.49,545.92 948.16,546.20 949.70,545.48 950.42,546.20 949.70,547.74 949.98,548.41" fill="#666"/><circle cx="946.4" cy="549.5" r="1.87" fill="#f0f0f0"/>
<rect x="405" y="512.5" width="149.7" height="15" fill="#f2f2f2"/>
<ellipse cx="411.6" cy="520.6" rx="4.8" ry="1.9" fill="none" stroke="#3a3a3a" stroke-width="0.8"/><path d="M411.6,515.4 V525" stroke="#3a3a3a" stroke-width="0.9"/><path d="M410,516.6 l1.6,-1.8 l1.6,1.8z M410,523.8 l1.6,1.8 l1.6,-1.8z" fill="#3a3a3a"/>
<path d="M419.90000000000003,519.2 h3.4 l-1.7,2.2z" fill="#2a2a2a"/>
<rect x="427.6" y="517.4" width="10.2" height="6.8" rx="0.8" fill="#e8e8e8" stroke="#4a4a4a" stroke-width="0.8"/><rect x="429.6" y="519.8" width="6.2" height="2.2" fill="#fff" stroke="#4a4a4a" stroke-width="0.6"/><path d="M428.8,516.2 h7.8" stroke="#4a4a4a" stroke-width="0.8"/>
<path d="M446,520.4 l-1.6,-1.2 q-0.8,0.6 0,1.8 l2.6,3.8 h5 q1.6,-2 1.4,-6.4 q-0.6,-0.8 -1.2,0 v-1.6 q-0.7,-0.8 -1.4,0 v-1 q-0.7,-0.8 -1.4,0 v0.8 q-0.7,-0.8 -1.4,0 z" fill="#fff" stroke="#3a3a3a" stroke-width="0.7" stroke-linejoin="round"/>
<circle cx="464" cy="519.4" r="3.1" fill="#e2eef2" stroke="#4a4a4a" stroke-width="0.8"/><path d="M466.2,521.8 l3,3" stroke="#3a3a3a" stroke-width="1.4"/><path d="M469.4,515.6 v3.4 M468.2,516.8 l1.2,-1.4 l1.2,1.4" stroke="#3a3a3a" stroke-width="0.6" fill="none"/>
<rect x="476.6" y="515.2" width="10" height="9.6" fill="none" stroke="#8a8a8a" stroke-width="0.5" stroke-dasharray="1 1"/><circle cx="481" cy="519.2" r="3.6" fill="#e2eef2" stroke="#4a4a4a" stroke-width="0.8"/><path d="M483.6,522 l3,3" stroke="#3a3a3a" stroke-width="1.4"/>
<path d="M490.3,519.2 h3.4 l-1.7,2.2z" fill="#2a2a2a"/>
<rect x="498" y="515.4" width="10.2" height="7.4" rx="0.6" fill="#6c8fd0" stroke="#4a4a4a" stroke-width="0.8"/><rect x="499.4" y="516.6" width="7.4" height="4.6" fill="#8eb0e8"/><path d="M501,524.4 h4.4 M503.2,522.8 v1.6" stroke="#4a4a4a" stroke-width="1"/>
<path d="M509.7,519.2 h3.4 l-1.7,2.2z" fill="#2a2a2a"/>
<rect x="517.6" y="515.4" width="10" height="9.4" fill="#bcbcc0" stroke="#5a5a5a" stroke-width="0.7"/>
<path d="M519.6,515.4 v9.4" stroke="#6a6a70" stroke-width="0.4"/>
<path d="M521.6,515.4 v9.4" stroke="#6a6a70" stroke-width="0.4"/>
<path d="M523.6,515.4 v9.4" stroke="#6a6a70" stroke-width="0.4"/>
<path d="M525.6,515.4 v9.4" stroke="#6a6a70" stroke-width="0.4"/>
<path d="M529.0999999999999,519.2 h3.4 l-1.7,2.2z" fill="#2a2a2a"/>
<rect x="537.2" y="515.6" width="9.6" height="8.8" rx="0.8" fill="#5f86cc" stroke="#4a5a88" stroke-width="0.6"/><path d="M542,515.6 v8.8 M537.2,520 h9.6" stroke="#e8eefc" stroke-width="0.9"/>
<path d="M548.5,519.2 h3.4 l-1.7,2.2z" fill="#2a2a2a"/>
<text x="909.8" y="523.7" font-size="7" font-weight="bold" fill="#333" font-family="Liberation Sans, sans-serif" textLength="21.4" lengthAdjust="spacingAndGlyphs">Joints</text>
<circle cx="947" cy="521" r="5.1" fill="#0a0a0a"/><path d="M948,524 L952,526.2 L951.4,521Z" fill="#0a0a0a"/><path d="M943.8,522.6 Q945.5,519 949.8,519.4 L950.2,522.2 L948.6,522.2 L948.4,520.8 Q946.4,520.8 945.6,522.6Z" fill="#fff"/>
</svg>
<div class="hdr" style="top:0;height:14.6px;"><span style="top:2.6px;left:15px;">BROWSER</span></div>
<div class="row" style="left:24px;top:18.1px;width:164px;background:#efefef;"></div>
<div class="row" style="left:40px;top:19.299999999999997px;width:119px;height:9.7px;background:#999;"></div>
<div class="lbl" style="left:61px;top:18.5px;color:#fff;font-weight:bold;font-size:6.5px;letter-spacing:0.02px;">1829 STEPHENSON STEAM ...</div>
<div class="row" style="left:35.3px;top:33.16px;width:82.2px;"></div>
<div class="lbl" style="left:54px;top:33.76px;">Document Settings</div>
<div class="row" style="left:35.3px;top:48.32px;width:69.7px;"></div>
<div class="lbl" style="left:56.5px;top:48.92px;">Named Views</div>
<div class="row" style="left:35.3px;top:63.48px;width:59.7px;"></div>
<div class="lbl" style="left:72px;top:64.08px;">Origin</div>
<div class="row" style="left:35.3px;top:78.64px;width:71.7px;"></div>
<div class="lbl" style="left:56.5px;top:79.24px;">Motion Studies</div>
<div class="row" style="left:35.3px;top:93.80px;width:59.7px;"></div>
<div class="lbl" style="left:72px;top:94.40px;">Joints</div>
<div class="row" style="left:35.3px;top:108.96px;width:72.2px;"></div>
<div class="lbl" style="left:72px;top:109.56px;">Sketches</div>
<div class="row" style="left:35.3px;top:124.12px;width:82.2px;"></div>
<div class="lbl" style="left:72px;top:124.72px;">Construction</div>
<div class="row" style="left:35.3px;top:139.28px;width:59.7px;"></div>
<div class="lbl" style="left:72px;top:139.88px;">01A:1</div>
<div class="row" style="left:35.3px;top:154.44px;width:59.7px;"></div>
<div class="lbl" style="left:72px;top:155.04px;">01B:1</div>
<div class="row" style="left:35.3px;top:169.60px;width:82.2px;"></div>
<div class="lbl" style="left:72px;top:170.20px;">01A(Mirror):1</div>
<div class="row" style="left:35.3px;top:184.76px;width:59.7px;"></div>
<div class="lbl" style="left:72px;top:185.36px;">01D:1</div>
<div class="row" style="left:35.3px;top:199.92px;width:59.7px;"></div>
<div class="lbl" style="left:72px;top:200.52px;">01C:1</div>
<div class="row" style="left:35.3px;top:215.08px;width:59.7px;"></div>
<div class="lbl" style="left:72px;top:215.68px;">01E:1</div>
<div class="row" style="left:35.3px;top:230.24px;width:59.7px;"></div>
<div class="lbl" style="left:72px;top:230.84px;">01F:1</div>
<div class="row" style="left:35.3px;top:245.40px;width:59.7px;"></div>
<div class="lbl" style="left:72px;top:246.00px;">03A:1</div>
<div class="row" style="left:35.3px;top:260.56px;width:59.7px;"></div>
<div class="lbl" style="left:72px;top:261.16px;">04A:1</div>
<div class="row" style="left:35.3px;top:275.72px;width:59.7px;"></div>
<div class="lbl" style="left:72px;top:276.32px;">03B:1</div>
<div class="row" style="left:35.3px;top:290.88px;width:59.7px;"></div>
<div class="lbl" style="left:72px;top:291.48px;">04B:1</div>
<div class="row" style="left:35.3px;top:306.04px;width:59.7px;"></div>
<div class="lbl" style="left:72px;top:306.64px;">03C:1</div>
<div class="row" style="left:35.3px;top:321.20px;width:67.2px;"></div>
<div class="lbl" style="left:72px;top:321.80px;">Rivets:1</div>
<div class="row" style="left:35.3px;top:336.36px;width:59.7px;"></div>
<div class="lbl" style="left:72px;top:336.96px;">04F:1</div>
<div class="row" style="left:35.3px;top:351.52px;width:59.7px;"></div>
<div class="lbl" style="left:72px;top:352.12px;">04G:1</div>
<div class="row" style="left:35.3px;top:366.68px;width:62.2px;"></div>
<div class="lbl" style="left:72px;top:367.28px;">04G:2</div>
<div class="row" style="left:35.3px;top:381.84px;width:59.7px;"></div>
<div class="lbl" style="left:72px;top:382.44px;">04C:1</div>
<div class="row" style="left:35.3px;top:397.00px;width:59.7px;"></div>
<div class="lbl" style="left:72px;top:397.60px;">04C:2</div>
<div class="row" style="left:35.3px;top:412.16px;width:59.7px;"></div>
<div class="lbl" style="left:72px;top:412.76px;">04D:1</div>
<div class="row" style="left:35.3px;top:427.32px;width:59.7px;"></div>
<div class="lbl" style="left:72px;top:427.92px;">04D:2</div>
<div class="row" style="left:35.3px;top:442.48px;width:59.7px;"></div>
<div class="lbl" style="left:72px;top:443.08px;">04D:3</div>
<div class="row" style="left:35.3px;top:457.64px;width:59.7px;"></div>
<div class="lbl" style="left:72px;top:458.24px;">04D:4</div>
<div class="row" style="left:35.3px;top:472.80px;width:59.7px;"></div>
<div class="lbl" style="left:72px;top:473.40px;">04E:1</div>
<div class="row" style="left:35.3px;top:487.96px;width:59.7px;"></div>
<div class="lbl" style="left:72px;top:488.56px;">04E:2</div>
<div class="hdr" style="top:513px;height:15.5px;"><span style="top:4.5px;left:16.2px;font-size:6.2px;">COMMENTS</span></div>
<svg width="200" height="558" viewBox="0 0 200 558" style="z-index:2">
<path d="M8,4.6 L8,8.6 L5,6.6Z M11.2,4.6 L11.2,8.6 L8.2,6.6Z" fill="#3c3c3c"/>
<circle cx="180.3" cy="6.6" r="3.1" fill="#2e2e2e"/><rect x="178.5" y="6.1" width="3.6" height="1" fill="#fff"/>
<rect x="4" y="18" width="3.7" height="481" rx="1.2" fill="#c6c6c6"/>
<rect x="4" y="18" width="3.7" height="59" rx="1.2" fill="#9c9c9c"/>
<path d="M12,27.4 H18.8 V20.599999999999998Z" fill="#4a4a4a" stroke="#4a4a4a" stroke-width="0.6" stroke-linejoin="round"/><path d="M14.6,26.4 H17.8 V23.2Z" fill="#9a9a9a"/>
<path d="M25.7,24.2 Q30.7,18.6 35.7,24.2 Q30.7,29.799999999999997 25.7,24.2Z" fill="#9a9a9a" stroke="#9a9a9a" stroke-width="0.7"/><circle cx="30.7" cy="24.2" r="2.1" fill="#e6e6e6"/><circle cx="30.7" cy="24.2" r="1.1" fill="#9a9a9a"/>
<path d="M43,27.8 V20.8 Q43,20.0 44,20.0 H46.3 Q47.2,20.0 47.2,20.8 V27.8Z" fill="#fff"/><path d="M46.6,27.8 V23.8 Q46.6,23.0 47.6,23.0 H50.6 Q51.5,23.0 51.5,23.9 V27.0 Q51.5,27.8 50.6,27.8Z" fill="#fff" stroke="#999" stroke-width="0.5"/>
<circle cx="165.6" cy="24.2" r="4.3" fill="#3b4cb0"/><text x="163.4" y="26.4" font-size="6.2" font-weight="bold" fill="#fff" font-family="Liberation Sans, sans-serif">K</text><circle cx="168.4" cy="26.8" r="1.3" fill="#fff" stroke="#3b4cb0" stroke-width="0.4"/>
<circle cx="179.2" cy="24.2" r="3.7" fill="#fff" stroke="#3a3a3a" stroke-width="0.8"/><circle cx="179.2" cy="24.2" r="1.5" fill="#2a2a2a"/>
<path d="M23.9,35.06 L30.1,39.36 L23.9,43.66Z" fill="#fafafa" stroke="#4e4e4e" stroke-width="0.95" stroke-linejoin="round"/>
<polygon points="44.98,38.97 44.98,39.75 43.76,40.20 43.54,40.72 44.09,41.90 43.54,42.45 42.36,41.90 41.84,42.12 41.39,43.34 40.61,43.34 40.16,42.12 39.64,41.90 38.46,42.45 37.91,41.90 38.46,40.72 38.24,40.20 37.02,39.75 37.02,38.97 38.24,38.52 38.46,38.00 37.91,36.82 38.46,36.27 39.64,36.82 40.16,36.60 40.61,35.38 41.39,35.38 41.84,36.60 42.36,36.82 43.54,36.27 44.09,36.82 43.54,38.00 43.76,38.52" fill="#5e5e5e"/><circle cx="41" cy="39.36" r="1.44" fill="#f0f0f0"/>
<path d="M23.9,50.22 L30.1,54.519999999999996 L23.9,58.81999999999999Z" fill="#fafafa" stroke="#4e4e4e" stroke-width="0.95" stroke-linejoin="round"/>
<path d="M37,50.12 h4 l1,1.3 h5.3 v7.7 h-10.3z" fill="#9b9b9b"/><path d="M37,52.22 h10.3" stroke="#b8b8b8" stroke-width="0.5"/>
<path d="M23.9,65.38000000000001 L30.1,69.68 L23.9,73.98Z" fill="#fafafa" stroke="#4e4e4e" stroke-width="0.95" stroke-linejoin="round"/>
<path d="M37.4,69.68 Q42.4,64.08000000000001 47.4,69.68 Q42.4,75.28 37.4,69.68Z" fill="none" stroke="#c4c4c4" stroke-width="0.7"/><circle cx="42.4" cy="69.68" r="1.7" fill="none" stroke="#c4c4c4" stroke-width="0.7"/><path d="M38.9,72.68 L45.9,66.68" stroke="#c4c4c4" stroke-width="0.8"/>
<path d="M53,65.28 h4 l1,1.3 h5.3 v7.7 h-10.3z" fill="#9b9b9b"/><path d="M53,67.38000000000001 h10.3" stroke="#b8b8b8" stroke-width="0.5"/>
<path d="M23.9,80.54 L30.1,84.84 L23.9,89.14Z" fill="#fafafa" stroke="#4e4e4e" stroke-width="0.95" stroke-linejoin="round"/>
<path d="M37,80.44 h4 l1,1.3 h5.3 v7.7 h-10.3z" fill="#9b9b9b"/><path d="M37,82.54 h10.3" stroke="#b8b8b8" stroke-width="0.5"/>
<path d="M23.9,95.7 L30.1,100.0 L23.9,104.3Z" fill="#fafafa" stroke="#4e4e4e" stroke-width="0.95" stroke-linejoin="round"/>
<path d="M37.4,100.0 Q42.4,94.4 47.4,100.0 Q42.4,105.6 37.4,100.0Z" fill="none" stroke="#c4c4c4" stroke-width="0.7"/><circle cx="42.4" cy="100.0" r="1.7" fill="none" stroke="#c4c4c4" stroke-width="0.7"/><path d="M38.9,103.0 L45.9,97.0" stroke="#c4c4c4" stroke-width="0.8"/>
<path d="M53,95.6 h4 l1,1.3 h5.3 v7.7 h-10.3z" fill="#9b9b9b"/><path d="M53,97.7 h10.3" stroke="#b8b8b8" stroke-width="0.5"/>
<path d="M23.9,110.86000000000001 L30.1,115.16000000000001 L23.9,119.46000000000001Z" fill="#fafafa" stroke="#4e4e4e" stroke-width="0.95" stroke-linejoin="round"/>
<path d="M37.4,115.16000000000001 Q42.4,109.56000000000002 47.4,115.16000000000001 Q42.4,120.76 37.4,115.16000000000001Z" fill="#9a9a9a" stroke="#9a9a9a" stroke-width="0.7"/><circle cx="42.4" cy="115.16000000000001" r="2.1" fill="#e6e6e6"/><circle cx="42.4" cy="115.16000000000001" r="1.1" fill="#9a9a9a"/>
<path d="M53,110.76 h4 l1,1.3 h5.3 v7.7 h-10.3z" fill="#9b9b9b"/><path d="M53,112.86000000000001 h10.3" stroke="#b8b8b8" stroke-width="0.5"/>
<path d="M23.9,126.02 L30.1,130.32 L23.9,134.62Z" fill="#fafafa" stroke="#4e4e4e" stroke-width="0.95" stroke-linejoin="round"/>
<path d="M37.4,130.32 Q42.4,124.72 47.4,130.32 Q42.4,135.92 37.4,130.32Z" fill="#9a9a9a" stroke="#9a9a9a" stroke-width="0.7"/><circle cx="42.4" cy="130.32" r="2.1" fill="#e6e6e6"/><circle cx="42.4" cy="130.32" r="1.1" fill="#9a9a9a"/>
<path d="M53,125.91999999999999 h4 l1,1.3 h5.3 v7.7 h-10.3z" fill="#9b9b9b"/><path d="M53,128.01999999999998 h10.3" stroke="#b8b8b8" stroke-width="0.5"/>
<path d="M23.9,141.17999999999998 L30.1,145.48 L23.9,149.78Z" fill="#fafafa" stroke="#4e4e4e" stroke-width="0.95" stroke-linejoin="round"/>
<path d="M37.4,145.48 Q42.4,139.88 47.4,145.48 Q42.4,151.07999999999998 37.4,145.48Z" fill="#9a9a9a" stroke="#9a9a9a" stroke-width="0.7"/><circle cx="42.4" cy="145.48" r="2.1" fill="#e6e6e6"/><circle cx="42.4" cy="145.48" r="1.1" fill="#9a9a9a"/>
<path d="M54.5,142.28 Q53.3,142.28 53.3,143.48 V149.07999999999998 Q53.3,150.07999999999998 54.5,150.07999999999998 H59.8 L62.6,148.07999999999998 V141.88 Q62.6,140.67999999999998 61.4,140.67999999999998 H56.2 Z" fill="#f2f2f4" stroke="#6a6a6a" stroke-width="0.75"/><path d="M53.6,142.88 H60 V149.88 M60,142.88 L62.4,141.07999999999998" fill="none" stroke="#8a8a8a" stroke-width="0.6"/><rect x="54" y="143.28" width="5.6" height="6.3" fill="#dedfe6"/><path d="M58,143.98 h4 v2 h-2.5 v1.2 h2.5 v2 h-4.2 v-2 h2.4 v-1.2 h-2.2z" fill="#e8641e"/>
<path d="M23.9,156.33999999999997 L30.1,160.64 L23.9,164.94Z" fill="#fafafa" stroke="#4e4e4e" stroke-width="0.95" stroke-linejoin="round"/>
<path d="M37.4,160.64 Q42.4,155.04 47.4,160.64 Q42.4,166.23999999999998 37.4,160.64Z" fill="#9a9a9a" stroke="#9a9a9a" stroke-width="0.7"/><circle cx="42.4" cy="160.64" r="2.1" fill="#e6e6e6"/><circle cx="42.4" cy="160.64" r="1.1" fill="#9a9a9a"/>
<path d="M54.5,157.44 Q53.3,157.44 53.3,158.64 V164.23999999999998 Q53.3,165.23999999999998 54.5,165.23999999999998 H59.8 L62.6,163.23999999999998 V157.04 Q62.6,155.83999999999997 61.4,155.83999999999997 H56.2 Z" fill="#f2f2f4" stroke="#6a6a6a" stroke-width="0.75"/><path d="M53.6,158.04 H60 V165.04 M60,158.04 L62.4,156.23999999999998" fill="none" stroke="#8a8a8a" stroke-width="0.6"/><rect x="54" y="158.44" width="5.6" height="6.3" fill="#dedfe6"/>
<path d="M23.9,171.49999999999997 L30.1,175.79999999999998 L23.9,180.1Z" fill="#fafafa" stroke="#4e4e4e" stroke-width="0.95" stroke-linejoin="round"/>
<path d="M37.4,175.79999999999998 Q42.4,170.2 47.4,175.79999999999998 Q42.4,181.39999999999998 37.4,175.79999999999998Z" fill="#9a9a9a" stroke="#9a9a9a" stroke-width="0.7"/><circle cx="42.4" cy="175.79999999999998" r="2.1" fill="#e6e6e6"/><circle cx="42.4" cy="175.79999999999998" r="1.1" fill="#9a9a9a"/>
<path d="M54.5,172.6 Q53.3,172.6 53.3,173.79999999999998 V179.39999999999998 Q53.3,180.39999999999998 54.5,180.39999999999998 H59.8 L62.6,178.39999999999998 V172.2 Q62.6,170.99999999999997 61.4,170.99999999999997 H56.2 Z" fill="#f2f2f4" stroke="#6a6a6a" stroke-width="0.75"/><path d="M53.6,173.2 H60 V180.2 M60,173.2 L62.4,171.39999999999998" fill="none" stroke="#8a8a8a" stroke-width="0.6"/><rect x="54" y="173.6" width="5.6" height="6.3" fill="#dedfe6"/>
<path d="M23.9,186.65999999999997 L30.1,190.95999999999998 L23.9,195.26Z" fill="#fafafa" stroke="#4e4e4e" stroke-width="0.95" stroke-linejoin="round"/>
<path d="M37.4,190.95999999999998 Q42.4,185.35999999999999 47.4,190.95999999999998 Q42.4,196.55999999999997 37.4,190.95999999999998Z" fill="#9a9a9a" stroke="#9a9a9a" stroke-width="0.7"/><circle cx="42.4" cy="190.95999999999998" r="2.1" fill="#e6e6e6"/><circle cx="42.4" cy="190.95999999999998" r="1.1" fill="#9a9a9a"/>
<path d="M54.5,187.76 Q53.3,187.76 53.3,188.95999999999998 V194.55999999999997 Q53.3,195.55999999999997 54.5,195.55999999999997 H59.8 L62.6,193.55999999999997 V187.35999999999999 Q62.6,186.15999999999997 61.4,186.15999999999997 H56.2 Z" fill="#f2f2f4" stroke="#6a6a6a" stroke-width="0.75"/><path d="M53.6,188.35999999999999 H60 V195.35999999999999 M60,188.35999999999999 L62.4,186.55999999999997" fill="none" stroke="#8a8a8a" stroke-width="0.6"/><rect x="54" y="188.76" width="5.6" height="6.3" fill="#dedfe6"/>
<path d="M23.9,201.82 L30.1,206.12 L23.9,210.42000000000002Z" fill="#fafafa" stroke="#4e4e4e" stroke-width="0.95" stroke-linejoin="round"/>
<path d="M37.4,206.12 Q42.4,200.52 47.4,206.12 Q42.4,211.72 37.4,206.12Z" fill="#9a9a9a" stroke="#9a9a9a" stroke-width="0.7"/><circle cx="42.4" cy="206.12" r="2.1" fill="#e6e6e6"/><circle cx="42.4" cy="206.12" r="1.1" fill="#9a9a9a"/>
<path d="M54.5,202.92000000000002 Q53.3,202.92000000000002 53.3,204.12 V209.72 Q53.3,210.72 54.5,210.72 H59.8 L62.6,208.72 V202.52 Q62.6,201.32 61.4,201.32 H56.2 Z" fill="#f2f2f4" stroke="#6a6a6a" stroke-width="0.75"/><path d="M53.6,203.52 H60 V210.52 M60,203.52 L62.4,201.72" fill="none" stroke="#8a8a8a" stroke-width="0.6"/><rect x="54" y="203.92000000000002" width="5.6" height="6.3" fill="#dedfe6"/>
<path d="M23.9,216.98 L30.1,221.28 L23.9,225.58Z" fill="#fafafa" stroke="#4e4e4e" stroke-width="0.95" stroke-linejoin="round"/>
<path d="M37.4,221.28 Q42.4,215.68 47.4,221.28 Q42.4,226.88 37.4,221.28Z" fill="#9a9a9a" stroke="#9a9a9a" stroke-width="0.7"/><circle cx="42.4" cy="221.28" r="2.1" fill="#e6e6e6"/><circle cx="42.4" cy="221.28" r="1.1" fill="#9a9a9a"/>
<path d="M54.5,218.08 Q53.3,218.08 53.3,219.28 V224.88 Q53.3,225.88 54.5,225.88 H59.8 L62.6,223.88 V217.68 Q62.6,216.48 61.4,216.48 H56.2 Z" fill="#f2f2f4" stroke="#6a6a6a" stroke-width="0.75"/><path d="M53.6,218.68 H60 V225.68 M60,218.68 L62.4,216.88" fill="none" stroke="#8a8a8a" stroke-width="0.6"/><rect x="54" y="219.08" width="5.6" height="6.3" fill="#dedfe6"/>
<path d="M23.9,232.14 L30.1,236.44 L23.9,240.74Z" fill="#fafafa" stroke="#4e4e4e" stroke-width="0.95" stroke-linejoin="round"/>
<path d="M37.4,236.44 Q42.4,230.84 47.4,236.44 Q42.4,242.04 37.4,236.44Z" fill="#9a9a9a" stroke="#9a9a9a" stroke-width="0.7"/><circle cx="42.4" cy="236.44" r="2.1" fill="#e6e6e6"/><circle cx="42.4" cy="236.44" r="1.1" fill="#9a9a9a"/>
<path d="M54.5,233.24 Q53.3,233.24 53.3,234.44 V240.04 Q53.3,241.04 54.5,241.04 H59.8 L62.6,239.04 V232.84 Q62.6,231.64 61.4,231.64 H56.2 Z" fill="#f2f2f4" stroke="#6a6a6a" stroke-width="0.75"/><path d="M53.6,233.84 H60 V240.84 M60,233.84 L62.4,232.04" fill="none" stroke="#8a8a8a" stroke-width="0.6"/><rect x="54" y="234.24" width="5.6" height="6.3" fill="#dedfe6"/>
<path d="M23.9,247.29999999999998 L30.1,251.6 L23.9,255.9Z" fill="#fafafa" stroke="#4e4e4e" stroke-width="0.95" stroke-linejoin="round"/>
<path d="M37.4,251.6 Q42.4,246.0 47.4,251.6 Q42.4,257.2 37.4,251.6Z" fill="#9a9a9a" stroke="#9a9a9a" stroke-width="0.7"/><circle cx="42.4" cy="251.6" r="2.1" fill="#e6e6e6"/><circle cx="42.4" cy="251.6" r="1.1" fill="#9a9a9a"/>
<path d="M54.5,248.4 Q53.3,248.4 53.3,249.6 V255.2 Q53.3,256.2 54.5,256.2 H59.8 L62.6,254.2 V248.0 Q62.6,246.79999999999998 61.4,246.79999999999998 H56.2 Z" fill="#f2f2f4" stroke="#6a6a6a" stroke-width="0.75"/><path d="M53.6,249.0 H60 V256.0 M60,249.0 L62.4,247.2" fill="none" stroke="#8a8a8a" stroke-width="0.6"/><rect x="54" y="249.4" width="5.6" height="6.3" fill="#dedfe6"/>
<path d="M23.9,262.46 L30.1,266.76 L23.9,271.06Z" fill="#fafafa" stroke="#4e4e4e" stroke-width="0.95" stroke-linejoin="round"/>
<path d="M37.4,266.76 Q42.4,261.15999999999997 47.4,266.76 Q42.4,272.36 37.4,266.76Z" fill="#9a9a9a" stroke="#9a9a9a" stroke-width="0.7"/><circle cx="42.4" cy="266.76" r="2.1" fill="#e6e6e6"/><circle cx="42.4" cy="266.76" r="1.1" fill="#9a9a9a"/>
<path d="M54.5,263.56 Q53.3,263.56 53.3,264.76 V270.36 Q53.3,271.36 54.5,271.36 H59.8 L62.6,269.36 V263.15999999999997 Q62.6,261.96 61.4,261.96 H56.2 Z" fill="#f2f2f4" stroke="#6a6a6a" stroke-width="0.75"/><path d="M53.6,264.15999999999997 H60 V271.15999999999997 M60,264.15999999999997 L62.4,262.36" fill="none" stroke="#8a8a8a" stroke-width="0.6"/><rect x="54" y="264.56" width="5.6" height="6.3" fill="#dedfe6"/>
<path d="M23.9,277.62 L30.1,281.92 L23.9,286.22Z" fill="#fafafa" stroke="#4e4e4e" stroke-width="0.95" stroke-linejoin="round"/>
<path d="M37.4,281.92 Q42.4,276.32 47.4,281.92 Q42.4,287.52000000000004 37.4,281.92Z" fill="#9a9a9a" stroke="#9a9a9a" stroke-width="0.7"/><circle cx="42.4" cy="281.92" r="2.1" fill="#e6e6e6"/><circle cx="42.4" cy="281.92" r="1.1" fill="#9a9a9a"/>
<path d="M54.5,278.72 Q53.3,278.72 53.3,279.92 V285.52000000000004 Q53.3,286.52000000000004 54.5,286.52000000000004 H59.8 L62.6,284.52000000000004 V278.32 Q62.6,277.12 61.4,277.12 H56.2 Z" fill="#f2f2f4" stroke="#6a6a6a" stroke-width="0.75"/><path d="M53.6,279.32 H60 V286.32 M60,279.32 L62.4,277.52000000000004" fill="none" stroke="#8a8a8a" stroke-width="0.6"/><rect x="54" y="279.72" width="5.6" height="6.3" fill="#dedfe6"/>
<path d="M23.9,292.78 L30.1,297.08 L23.9,301.38Z" fill="#fafafa" stroke="#4e4e4e" stroke-width="0.95" stroke-linejoin="round"/>
<path d="M37.4,297.08 Q42.4,291.47999999999996 47.4,297.08 Q42.4,302.68 37.4,297.08Z" fill="#9a9a9a" stroke="#9a9a9a" stroke-width="0.7"/><circle cx="42.4" cy="297.08" r="2.1" fill="#e6e6e6"/><circle cx="42.4" cy="297.08" r="1.1" fill="#9a9a9a"/>
<path d="M54.5,293.88 Q53.3,293.88 53.3,295.08 V300.68 Q53.3,301.68 54.5,301.68 H59.8 L62.6,299.68 V293.47999999999996 Q62.6,292.28 61.4,292.28 H56.2 Z" fill="#f2f2f4" stroke="#6a6a6a" stroke-width="0.75"/><path d="M53.6,294.47999999999996 H60 V301.47999999999996 M60,294.47999999999996 L62.4,292.68" fill="none" stroke="#8a8a8a" stroke-width="0.6"/><rect x="54" y="294.88" width="5.6" height="6.3" fill="#dedfe6"/>
<path d="M23.9,307.94 L30.1,312.24 L23.9,316.54Z" fill="#fafafa" stroke="#4e4e4e" stroke-width="0.95" stroke-linejoin="round"/>
<path d="M37.4,312.24 Q42.4,306.64 47.4,312.24 Q42.4,317.84000000000003 37.4,312.24Z" fill="#9a9a9a" stroke="#9a9a9a" stroke-width="0.7"/><circle cx="42.4" cy="312.24" r="2.1" fill="#e6e6e6"/><circle cx="42.4" cy="312.24" r="1.1" fill="#9a9a9a"/>
<path d="M54.5,309.04 Q53.3,309.04 53.3,310.24 V315.84000000000003 Q53.3,316.84000000000003 54.5,316.84000000000003 H59.8 L62.6,314.84000000000003 V308.64 Q62.6,307.44 61.4,307.44 H56.2 Z" fill="#f2f2f4" stroke="#6a6a6a" stroke-width="0.75"/><path d="M53.6,309.64 H60 V316.64 M60,309.64 L62.4,307.84000000000003" fill="none" stroke="#8a8a8a" stroke-width="0.6"/><rect x="54" y="310.04" width="5.6" height="6.3" fill="#dedfe6"/>
<path d="M23.9,323.09999999999997 L30.1,327.4 L23.9,331.7Z" fill="#fafafa" stroke="#4e4e4e" stroke-width="0.95" stroke-linejoin="round"/>
<path d="M37.4,327.4 Q42.4,321.79999999999995 47.4,327.4 Q42.4,333.0 37.4,327.4Z" fill="#9a9a9a" stroke="#9a9a9a" stroke-width="0.7"/><circle cx="42.4" cy="327.4" r="2.1" fill="#e6e6e6"/><circle cx="42.4" cy="327.4" r="1.1" fill="#9a9a9a"/>
<path d="M53.5,332.0 V323.79999999999995 Q53.5,322.59999999999997 54.7,322.59999999999997 H57.5 Q58.5,322.59999999999997 58.5,323.79999999999995 V332.0Z" fill="#fafafa" stroke="#6a6a6a" stroke-width="0.75"/><path d="M57,332.0 V327.09999999999997 Q57,326.2 58,326.2 H61.6 Q62.6,326.2 62.6,327.2 V331.0 Q62.6,332.0 61.6,332.0Z" fill="#fafafa" stroke="#6a6a6a" stroke-width="0.75"/><path d="M56,325.9 v3" stroke="#8a8a8a" stroke-width="0.6"/>
<path d="M23.9,338.26 L30.1,342.56 L23.9,346.86Z" fill="#fafafa" stroke="#4e4e4e" stroke-width="0.95" stroke-linejoin="round"/>
<path d="M37.4,342.56 Q42.4,336.96 47.4,342.56 Q42.4,348.16 37.4,342.56Z" fill="#9a9a9a" stroke="#9a9a9a" stroke-width="0.7"/><circle cx="42.4" cy="342.56" r="2.1" fill="#e6e6e6"/><circle cx="42.4" cy="342.56" r="1.1" fill="#9a9a9a"/>
<path d="M54.5,339.36 Q53.3,339.36 53.3,340.56 V346.16 Q53.3,347.16 54.5,347.16 H59.8 L62.6,345.16 V338.96 Q62.6,337.76 61.4,337.76 H56.2 Z" fill="#f2f2f4" stroke="#6a6a6a" stroke-width="0.75"/><path d="M53.6,339.96 H60 V346.96 M60,339.96 L62.4,338.16" fill="none" stroke="#8a8a8a" stroke-width="0.6"/><rect x="54" y="340.36" width="5.6" height="6.3" fill="#dedfe6"/>
<path d="M23.9,353.41999999999996 L30.1,357.71999999999997 L23.9,362.02Z" fill="#fafafa" stroke="#4e4e4e" stroke-width="0.95" stroke-linejoin="round"/>
<path d="M37.4,357.71999999999997 Q42.4,352.11999999999995 47.4,357.71999999999997 Q42.4,363.32 37.4,357.71999999999997Z" fill="#9a9a9a" stroke="#9a9a9a" stroke-width="0.7"/><circle cx="42.4" cy="357.71999999999997" r="2.1" fill="#e6e6e6"/><circle cx="42.4" cy="357.71999999999997" r="1.1" fill="#9a9a9a"/>
<path d="M54.5,354.52 Q53.3,354.52 53.3,355.71999999999997 V361.32 Q53.3,362.32 54.5,362.32 H59.8 L62.6,360.32 V354.11999999999995 Q62.6,352.91999999999996 61.4,352.91999999999996 H56.2 Z" fill="#f2f2f4" stroke="#6a6a6a" stroke-width="0.75"/><path d="M53.6,355.11999999999995 H60 V362.11999999999995 M60,355.11999999999995 L62.4,353.32" fill="none" stroke="#8a8a8a" stroke-width="0.6"/><rect x="54" y="355.52" width="5.6" height="6.3" fill="#dedfe6"/>
<path d="M23.9,368.58 L30.1,372.88 L23.9,377.18Z" fill="#fafafa" stroke="#4e4e4e" stroke-width="0.95" stroke-linejoin="round"/>
<path d="M37.4,372.88 Q42.4,367.28 47.4,372.88 Q42.4,378.48 37.4,372.88Z" fill="#9a9a9a" stroke="#9a9a9a" stroke-width="0.7"/><circle cx="42.4" cy="372.88" r="2.1" fill="#e6e6e6"/><circle cx="42.4" cy="372.88" r="1.1" fill="#9a9a9a"/>
<path d="M54.5,369.68 Q53.3,369.68 53.3,370.88 V376.48 Q53.3,377.48 54.5,377.48 H59.8 L62.6,375.48 V369.28 Q62.6,368.08 61.4,368.08 H56.2 Z" fill="#f2f2f4" stroke="#6a6a6a" stroke-width="0.75"/><path d="M53.6,370.28 H60 V377.28 M60,370.28 L62.4,368.48" fill="none" stroke="#8a8a8a" stroke-width="0.6"/><rect x="54" y="370.68" width="5.6" height="6.3" fill="#dedfe6"/>
<path d="M23.9,383.74 L30.1,388.04 L23.9,392.34000000000003Z" fill="#fafafa" stroke="#4e4e4e" stroke-width="0.95" stroke-linejoin="round"/>
<path d="M37.4,388.04 Q42.4,382.44 47.4,388.04 Q42.4,393.64000000000004 37.4,388.04Z" fill="#9a9a9a" stroke="#9a9a9a" stroke-width="0.7"/><circle cx="42.4" cy="388.04" r="2.1" fill="#e6e6e6"/><circle cx="42.4" cy="388.04" r="1.1" fill="#9a9a9a"/>
<path d="M54.5,384.84000000000003 Q53.3,384.84000000000003 53.3,386.04 V391.64000000000004 Q53.3,392.64000000000004 54.5,392.64000000000004 H59.8 L62.6,390.64000000000004 V384.44 Q62.6,383.24 61.4,383.24 H56.2 Z" fill="#f2f2f4" stroke="#6a6a6a" stroke-width="0.75"/><path d="M53.6,385.44 H60 V392.44 M60,385.44 L62.4,383.64000000000004" fill="none" stroke="#8a8a8a" stroke-width="0.6"/><rect x="54" y="385.84000000000003" width="5.6" height="6.3" fill="#dedfe6"/>
<path d="M23.9,398.9 L30.1,403.2 L23.9,407.5Z" fill="#fafafa" stroke="#4e4e4e" stroke-width="0.95" stroke-linejoin="round"/>
<path d="M37.4,403.2 Q42.4,397.59999999999997 47.4,403.2 Q42.4,408.8 37.4,403.2Z" fill="#9a9a9a" stroke="#9a9a9a" stroke-width="0.7"/><circle cx="42.4" cy="403.2" r="2.1" fill="#e6e6e6"/><circle cx="42.4" cy="403.2" r="1.1" fill="#9a9a9a"/>
<path d="M54.5,400.0 Q53.3,400.0 53.3,401.2 V406.8 Q53.3,407.8 54.5,407.8 H59.8 L62.6,405.8 V399.59999999999997 Q62.6,398.4 61.4,398.4 H56.2 Z" fill="#f2f2f4" stroke="#6a6a6a" stroke-width="0.75"/><path d="M53.6,400.59999999999997 H60 V407.59999999999997 M60,400.59999999999997 L62.4,398.8" fill="none" stroke="#8a8a8a" stroke-width="0.6"/><rect x="54" y="401.0" width="5.6" height="6.3" fill="#dedfe6"/>
<path d="M23.9,414.06 L30.1,418.36 L23.9,422.66Z" fill="#fafafa" stroke="#4e4e4e" stroke-width="0.95" stroke-linejoin="round"/>
<path d="M37.4,418.36 Q42.4,412.76 47.4,418.36 Q42.4,423.96000000000004 37.4,418.36Z" fill="#9a9a9a" stroke="#9a9a9a" stroke-width="0.7"/><circle cx="42.4" cy="418.36" r="2.1" fill="#e6e6e6"/><circle cx="42.4" cy="418.36" r="1.1" fill="#9a9a9a"/>
<path d="M54.5,415.16 Q53.3,415.16 53.3,416.36 V421.96000000000004 Q53.3,422.96000000000004 54.5,422.96000000000004 H59.8 L62.6,420.96000000000004 V414.76 Q62.6,413.56 61.4,413.56 H56.2 Z" fill="#f2f2f4" stroke="#6a6a6a" stroke-width="0.75"/><path d="M53.6,415.76 H60 V422.76 M60,415.76 L62.4,413.96000000000004" fill="none" stroke="#8a8a8a" stroke-width="0.6"/><rect x="54" y="416.16" width="5.6" height="6.3" fill="#dedfe6"/>
<path d="M23.9,429.21999999999997 L30.1,433.52 L23.9,437.82Z" fill="#fafafa" stroke="#4e4e4e" stroke-width="0.95" stroke-linejoin="round"/>
<path d="M37.4,433.52 Q42.4,427.91999999999996 47.4,433.52 Q42.4,439.12 37.4,433.52Z" fill="#9a9a9a" stroke="#9a9a9a" stroke-width="0.7"/><circle cx="42.4" cy="433.52" r="2.1" fill="#e6e6e6"/><circle cx="42.4" cy="433.52" r="1.1" fill="#9a9a9a"/>
<path d="M54.5,430.32 Q53.3,430.32 53.3,431.52 V437.12 Q53.3,438.12 54.5,438.12 H59.8 L62.6,436.12 V429.91999999999996 Q62.6,428.71999999999997 61.4,428.71999999999997 H56.2 Z" fill="#f2f2f4" stroke="#6a6a6a" stroke-width="0.75"/><path d="M53.6,430.91999999999996 H60 V437.91999999999996 M60,430.91999999999996 L62.4,429.12" fill="none" stroke="#8a8a8a" stroke-width="0.6"/><rect x="54" y="431.32" width="5.6" height="6.3" fill="#dedfe6"/>
<path d="M23.9,444.38 L30.1,448.68 L23.9,452.98Z" fill="#fafafa" stroke="#4e4e4e" stroke-width="0.95" stroke-linejoin="round"/>
<path d="M37.4,448.68 Q42.4,443.08 47.4,448.68 Q42.4,454.28000000000003 37.4,448.68Z" fill="#9a9a9a" stroke="#9a9a9a" stroke-width="0.7"/><circle cx="42.4" cy="448.68" r="2.1" fill="#e6e6e6"/><circle cx="42.4" cy="448.68" r="1.1" fill="#9a9a9a"/>
<path d="M54.5,445.48 Q53.3,445.48 53.3,446.68 V452.28000000000003 Q53.3,453.28000000000003 54.5,453.28000000000003 H59.8 L62.6,451.28000000000003 V445.08 Q62.6,443.88 61.4,443.88 H56.2 Z" fill="#f2f2f4" stroke="#6a6a6a" stroke-width="0.75"/><path d="M53.6,446.08 H60 V453.08 M60,446.08 L62.4,444.28000000000003" fill="none" stroke="#8a8a8a" stroke-width="0.6"/><rect x="54" y="446.48" width="5.6" height="6.3" fill="#dedfe6"/>
<path d="M23.9,459.53999999999996 L30.1,463.84 L23.9,468.14Z" fill="#fafafa" stroke="#4e4e4e" stroke-width="0.95" stroke-linejoin="round"/>
<path d="M37.4,463.84 Q42.4,458.23999999999995 47.4,463.84 Q42.4,469.44 37.4,463.84Z" fill="#9a9a9a" stroke="#9a9a9a" stroke-width="0.7"/><circle cx="42.4" cy="463.84" r="2.1" fill="#e6e6e6"/><circle cx="42.4" cy="463.84" r="1.1" fill="#9a9a9a"/>
<path d="M54.5,460.64 Q53.3,460.64 53.3,461.84 V467.44 Q53.3,468.44 54.5,468.44 H59.8 L62.6,466.44 V460.23999999999995 Q62.6,459.03999999999996 61.4,459.03999999999996 H56.2 Z" fill="#f2f2f4" stroke="#6a6a6a" stroke-width="0.75"/><path d="M53.6,461.23999999999995 H60 V468.23999999999995 M60,461.23999999999995 L62.4,459.44" fill="none" stroke="#8a8a8a" stroke-width="0.6"/><rect x="54" y="461.64" width="5.6" height="6.3" fill="#dedfe6"/>
<path d="M23.9,474.7 L30.1,479.0 L23.9,483.3Z" fill="#fafafa" stroke="#4e4e4e" stroke-width="0.95" stroke-linejoin="round"/>
<path d="M37.4,479.0 Q42.4,473.4 47.4,479.0 Q42.4,484.6 37.4,479.0Z" fill="#9a9a9a" stroke="#9a9a9a" stroke-width="0.7"/><circle cx="42.4" cy="479.0" r="2.1" fill="#e6e6e6"/><circle cx="42.4" cy="479.0" r="1.1" fill="#9a9a9a"/>
<path d="M54.5,475.8 Q53.3,475.8 53.3,477.0 V482.6 Q53.3,483.6 54.5,483.6 H59.8 L62.6,481.6 V475.4 Q62.6,474.2 61.4,474.2 H56.2 Z" fill="#f2f2f4" stroke="#6a6a6a" stroke-width="0.75"/><path d="M53.6,476.4 H60 V483.4 M60,476.4 L62.4,474.6" fill="none" stroke="#8a8a8a" stroke-width="0.6"/><rect x="54" y="476.8" width="5.6" height="6.3" fill="#dedfe6"/>
<path d="M23.9,489.85999999999996 L30.1,494.15999999999997 L23.9,498.46Z" fill="#fafafa" stroke="#4e4e4e" stroke-width="0.95" stroke-linejoin="round"/>
<path d="M37.4,494.15999999999997 Q42.4,488.55999999999995 47.4,494.15999999999997 Q42.4,499.76 37.4,494.15999999999997Z" fill="#9a9a9a" stroke="#9a9a9a" stroke-width="0.7"/><circle cx="42.4" cy="494.15999999999997" r="2.1" fill="#e6e6e6"/><circle cx="42.4" cy="494.15999999999997" r="1.1" fill="#9a9a9a"/>
<path d="M54.5,490.96 Q53.3,490.96 53.3,492.15999999999997 V497.76 Q53.3,498.76 54.5,498.76 H59.8 L62.6,496.76 V490.55999999999995 Q62.6,489.35999999999996 61.4,489.35999999999996 H56.2 Z" fill="#f2f2f4" stroke="#6a6a6a" stroke-width="0.75"/><path d="M53.6,491.55999999999995 H60 V498.55999999999995 M60,491.55999999999995 L62.4,489.76" fill="none" stroke="#8a8a8a" stroke-width="0.6"/><rect x="54" y="491.96" width="5.6" height="6.3" fill="#dedfe6"/>
<circle cx="180.3" cy="520.8" r="3.1" fill="#2e2e2e"/><rect x="178.5" y="520.3" width="3.6" height="1" fill="#fff"/><rect x="179.8" y="519" width="1" height="3.6" fill="#fff"/>
</svg>
</body></html>
